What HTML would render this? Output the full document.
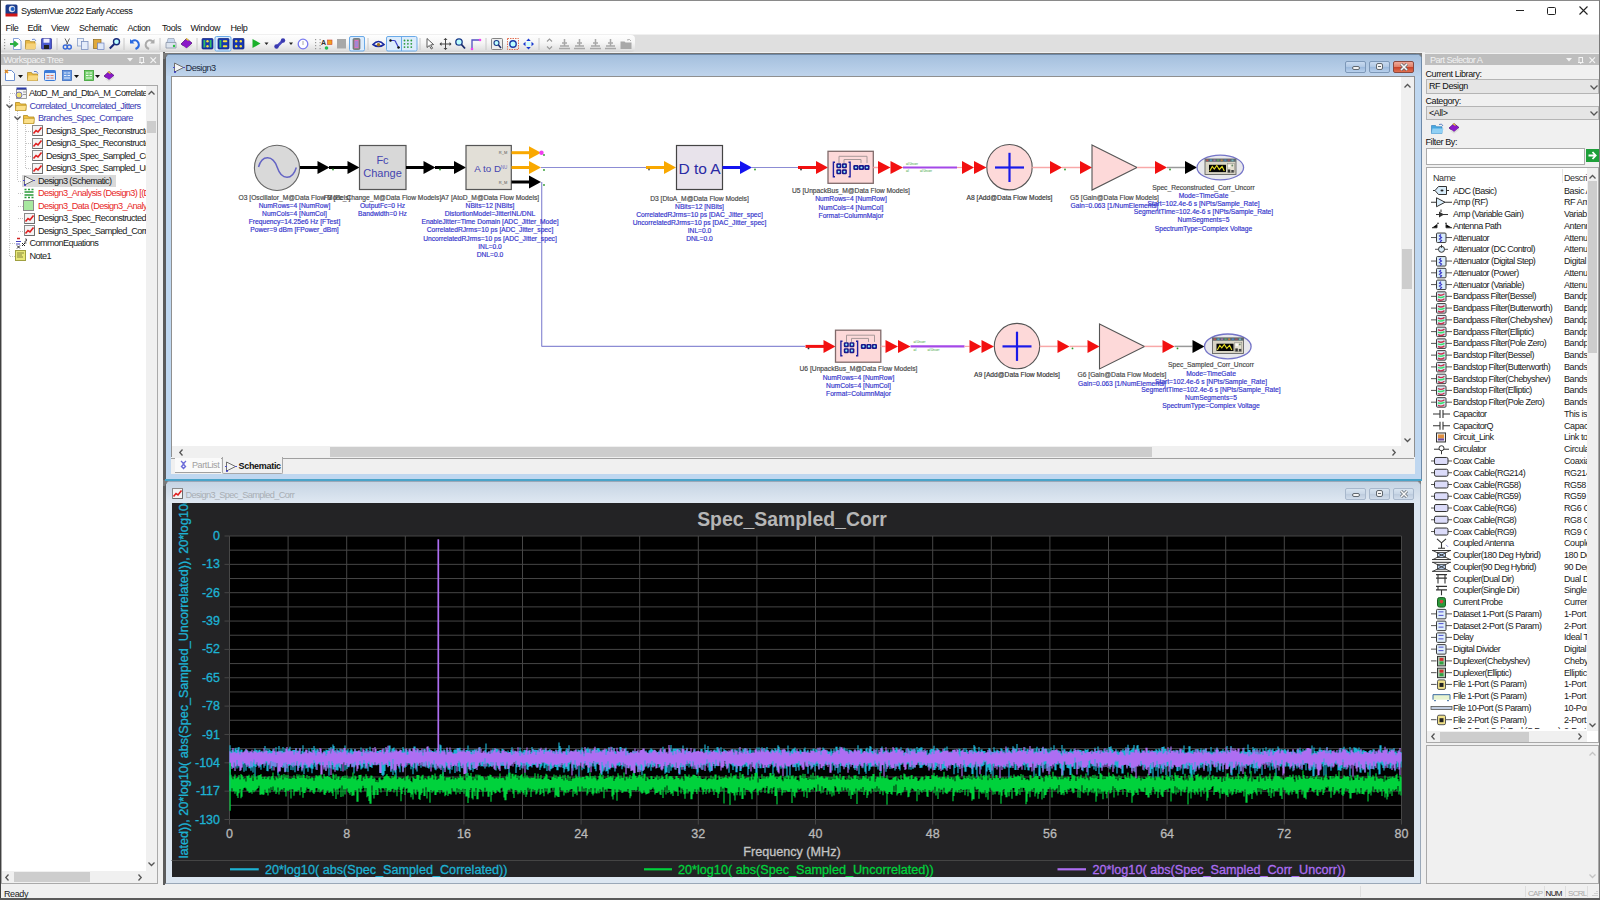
<!DOCTYPE html><html><head><meta charset="utf-8"><title>SystemVue 2022 Early Access</title><style>
*{margin:0;padding:0;box-sizing:border-box}
html,body{width:1600px;height:900px;overflow:hidden;background:#f0f0f0;font-family:"Liberation Sans",sans-serif;font-size:9px;letter-spacing:-0.4px;color:#000}
.a{position:absolute}
.t{position:absolute;white-space:nowrap;line-height:12px}
svg{position:absolute;overflow:visible}
</style></head><body>
<div class="a" style="left:0px;top:0px;width:1600px;height:21px;background:#fff"></div>
<div class="a" style="left:0px;top:21px;width:1600px;height:13px;background:#fff"></div>
<div class="a" style="left:0px;top:34.5px;width:1600px;height:18.5px;background:#dfdfdf"></div>
<svg style="left:5px;top:4px" width="13" height="13" viewBox="0 0 13 13">
<rect x="0.5" y="0.5" width="12" height="10" rx="1.5" fill="#1a3a8a"/>
<rect x="0.5" y="9.5" width="12" height="3" fill="#d01818"/>
<circle cx="7" cy="5" r="3.2" fill="#fff" opacity=".85"/><circle cx="7.6" cy="5" r="2" fill="#2060c0"/>
</svg>
<div class="t" style="left:21px;top:4.5px;font-size:9.2px;letter-spacing:-0.5px;color:#111">SystemVue 2022 Early Access</div>
<div class="a" style="left:1516px;top:10px;width:8px;height:1.2px;background:#222"></div>
<div class="a" style="left:1547px;top:6.5px;width:8.5px;height:8px;border:1.2px solid #222;border-radius:1.5px"></div>
<svg style="left:1579px;top:6px" width="9" height="9"><path d="M.5 .5L8.5 8.5M8.5 .5L.5 8.5" stroke="#222" stroke-width="1.1"/></svg>
<div class="t" style="left:5.5px;top:22px;color:#111">File</div>
<div class="t" style="left:27.5px;top:22px;color:#111">Edit</div>
<div class="t" style="left:51px;top:22px;color:#111">View</div>
<div class="t" style="left:79px;top:22px;color:#111">Schematic</div>
<div class="t" style="left:127.5px;top:22px;color:#111">Action</div>
<div class="t" style="left:162px;top:22px;color:#111">Tools</div>
<div class="t" style="left:190.5px;top:22px;color:#111">Window</div>
<div class="t" style="left:230.5px;top:22px;color:#111">Help</div>
<div class="a" style="left:0px;top:0px;width:1600px;height:1px;background:#8a8a8a"></div>
<div class="a" style="left:0px;top:0px;width:1px;height:900px;background:#404040"></div>
<div class="a" style="left:1599px;top:0px;width:1px;height:900px;background:#7a7a7a"></div>
<div class="a" style="left:0px;top:898px;width:1600px;height:2px;background:#5a5a5a"></div>
<div class="a" style="left:1px;top:35px;width:634px;height:17px;background:linear-gradient(#fefefe,#f6f6f6 45%,#e2e2e2 85%,#d2d2d2);border-radius:0 4px 4px 0"></div>
<svg style="left:0;top:0" width="1600" height="60"><rect x="4" y="39" width="1.2" height="1.2" fill="#9a9a9a"/><rect x="4" y="42" width="1.2" height="1.2" fill="#9a9a9a"/><rect x="4" y="45" width="1.2" height="1.2" fill="#9a9a9a"/><rect x="4" y="48" width="1.2" height="1.2" fill="#9a9a9a"/><path d="M13.5 38.5h5l2.5 2.5v8.5h-7.5z" fill="#fff" stroke="#6a8ad0" stroke-width=".8"/><path d="M10 44h6M14 41.5l3 2.5-3 2.5" stroke="#2ab040" stroke-width="2.2" fill="none"/><path d="M25.5 40.5h4l1 1.2h4.5v7.3h-9.5z" fill="#e8b848" stroke="#a8801c" stroke-width=".7"/><path d="M26.5 43.5h10l-1.5 5.5h-9.5z" fill="#f6d27a"/><path d="M32 39.5q3-1.5 4 1.5" stroke="#5a7ad0" fill="none" stroke-width=".9"/><rect x="41.5" y="38.5" width="10" height="10.5" rx=".8" fill="#4a5ad0" stroke="#2a2a90" stroke-width=".7"/><rect x="43.5" y="38.7" width="6" height="4" fill="#eef"/><rect x="44" y="45" width="5" height="4" fill="#222"/><path d="M57 38V50" stroke="#c8c8c8" stroke-width="1"/><path d="M65 38.5l3 6M69.5 38.5l-3 6" stroke="#666" stroke-width="1"/><circle cx="65.3" cy="47" r="2" fill="none" stroke="#3a6ad8" stroke-width="1.4"/><circle cx="69.3" cy="47" r="2" fill="none" stroke="#3a6ad8" stroke-width="1.4"/><rect x="77.5" y="38.5" width="6" height="7.5" fill="#eef2fa" stroke="#8aa0c8" stroke-width=".8"/><rect x="81.5" y="41.5" width="6.5" height="8" fill="#e4ecfa" stroke="#7a90c0" stroke-width=".8"/><rect x="93.5" y="39.5" width="7.5" height="9" fill="#e0a838" stroke="#8a6820" stroke-width=".7"/><rect x="97.5" y="43" width="6.5" height="6.5" fill="#dfe8f8" stroke="#6a80c0" stroke-width=".7"/><circle cx="116.5" cy="41.8" r="3" fill="#bff" stroke="#1a2a7a" stroke-width="1.4"/><path d="M114.3 44l-4.5 4.5" stroke="#1a2a7a" stroke-width="2"/><path d="M124 38V50" stroke="#c8c8c8" stroke-width="1"/><path d="M131.5 41.5q5-3 7 1.5q1.5 4-3 6" stroke="#2a6ae0" stroke-width="2" fill="none"/><path d="M130 39v4.5h4.5z" fill="#2a6ae0"/><path d="M153 41.5q-5-3-7 1.5q-1.5 4 3 6" stroke="#aaa" stroke-width="2" fill="none"/><path d="M154.5 39v4.5h-4.5z" fill="#aaa"/><path d="M160 38V50" stroke="#c8c8c8" stroke-width="1"/><path d="M166 42.5h10v5.5h-10z" fill="#dde4ee" stroke="#8a96a8" stroke-width=".8"/><path d="M168 38.5h6l1 4h-8z" fill="#c8d8f0" stroke="#8a96a8" stroke-width=".6"/><circle cx="174" cy="46" r="1.2" fill="#2ac040"/><path d="M181 44L186.5 38.5L192 43L186.5 48.5z" fill="#8a18c8" stroke="#4a0a70" stroke-width=".7"/><path d="M183 46.5L186.5 49.3L192 45" stroke="#ddd" stroke-width="1.6" fill="none"/><path d="M186 38.5l2.5 2" stroke="#e8d030" stroke-width="1.3"/><path d="M197 38V50" stroke="#c8c8c8" stroke-width="1"/><rect x="215" y="36.5" width="16" height="14.5" rx="1.5" fill="#dcecfc" stroke="#6aaae8" stroke-width="1"/><rect x="202" y="38.5" width="11" height="10.5" rx="1" fill="#1838b0" stroke="#10207a" stroke-width=".7"/><rect x="203.5" y="40" width="1.8" height="7.5" fill="#30c060"/><rect x="209.7" y="40" width="1.8" height="7.5" fill="#30c060"/><circle cx="207.5" cy="41.3" r="1.2" fill="#f8e040"/><circle cx="207.5" cy="46.2" r="1.2" fill="#f8e040"/><rect x="218" y="38.5" width="11" height="10.5" rx="1" fill="#1838b0" stroke="#10207a" stroke-width=".7"/><rect x="219.5" y="40" width="1.8" height="7.5" fill="#30c060"/><rect x="222.8" y="40.3" width="4.5" height="2" rx="1" fill="#f8e040"/><rect x="222.8" y="45.2" width="4.5" height="2" rx="1" fill="#f8e040"/><rect x="233" y="38.5" width="11" height="10.5" rx="1" fill="#1838b0" stroke="#10207a" stroke-width=".7"/><circle cx="236.2" cy="41.3" r="1.2" fill="#f8e040"/><circle cx="240.8" cy="41.3" r="1.2" fill="#f8e040"/><circle cx="236.2" cy="46.2" r="1.2" fill="#f8e040"/><circle cx="240.8" cy="46.2" r="1.2" fill="#f8e040"/><path d="M252.5 39v9l8-4.5z" fill="#1ab02a"/><path d="M264.5 42.5h4l-2 2.5z" fill="#222"/><path d="M276 47.5l7-7" stroke="#4848c0" stroke-width="2.5"/><circle cx="276.5" cy="46.5" r="2.2" fill="#3a3ab0"/><circle cx="283" cy="40.5" r="2.2" fill="#3a3ab0"/><path d="M289 42.5h4l-2 2.5z" fill="#222"/><circle cx="303" cy="44" r="4.8" fill="#fff" stroke="#7a7af0" stroke-width="1.3"/><path d="M303 41v4" stroke="#aaa" stroke-width="1"/><rect x="315" y="39" width="1.2" height="1.2" fill="#9a9a9a"/><rect x="315" y="42" width="1.2" height="1.2" fill="#9a9a9a"/><rect x="315" y="45" width="1.2" height="1.2" fill="#9a9a9a"/><rect x="315" y="48" width="1.2" height="1.2" fill="#9a9a9a"/><rect x="319.5" y="39" width="1.2" height="1.2" fill="#9a9a9a"/><rect x="319.5" y="42" width="1.2" height="1.2" fill="#9a9a9a"/><rect x="319.5" y="45" width="1.2" height="1.2" fill="#9a9a9a"/><rect x="319.5" y="48" width="1.2" height="1.2" fill="#9a9a9a"/><text x="321" y="44.5" font-size="7" font-weight="bold" fill="#333" font-family="Liberation Sans">A</text><rect x="327.5" y="40" width="4.5" height="4.5" fill="#f0a020" stroke="#d04030" stroke-width=".6"/><circle cx="326.5" cy="48" r="1.8" fill="#20c050"/><rect x="337" y="39" width="9" height="9.5" fill="#a8a8a8"/><rect x="349.5" y="36.5" width="15.0" height="14.5" rx="1.5" fill="#dcecfc" stroke="#6aaae8" stroke-width="1"/><rect x="353" y="38.5" width="7" height="11" rx="1.2" fill="#888" stroke="#555" stroke-width=".6"/><rect x="354.5" y="40" width="4" height="8" fill="#e070c0"/><rect x="355" y="41" width="3" height="6" fill="#8a90e0" opacity=".7"/><path d="M368 38V50" stroke="#c8c8c8" stroke-width="1"/><path d="M373 44.5q5.5-6 11 0q-5.5 4-11 0z" fill="#fff" stroke="#1a2aa0" stroke-width="1.6"/><circle cx="378.5" cy="44.8" r="1.8" fill="#a07020"/><rect x="386.5" y="36.5" width="30.5" height="14.5" rx="1.5" fill="#dcecfc" stroke="#6aaae8" stroke-width="1"/><path d="M401.5 37v14" stroke="#6aaae8"/><path d="M390.5 40.5h3.5q1.5 0 2 2l1.5 3q.5 2 2 2h.5" stroke="#3a40c8" stroke-width="1.2" fill="none"/><circle cx="390.5" cy="40.5" r="1.2" fill="#111"/><circle cx="398.5" cy="47.5" r="1.2" fill="#111"/><circle cx="404.5" cy="40.5" r=".9" fill="#2a9a3a"/><circle cx="404.5" cy="43.8" r=".9" fill="#2a9a3a"/><circle cx="404.5" cy="47.1" r=".9" fill="#2a9a3a"/><circle cx="407.9" cy="40.5" r=".9" fill="#2a9a3a"/><circle cx="407.9" cy="43.8" r=".9" fill="#2a9a3a"/><circle cx="407.9" cy="47.1" r=".9" fill="#2a9a3a"/><circle cx="411.3" cy="40.5" r=".9" fill="#2a9a3a"/><circle cx="411.3" cy="43.8" r=".9" fill="#2a9a3a"/><circle cx="411.3" cy="47.1" r=".9" fill="#2a9a3a"/><path d="M420 38V50" stroke="#c8c8c8" stroke-width="1"/><path d="M427 38.5v9l2.3-2 2 3.5 1.3-.8-2-3.3 3-.3z" fill="#fff" stroke="#333" stroke-width=".8"/><path d="M445.5 38.5v11M440 44h11" stroke="#444" stroke-width="1"/><path d="M445.5 38l-2 2h4zM445.5 50l-2-2h4zM439.5 44l2-2v4zM451.5 44l-2-2v4z" fill="#444"/><circle cx="459" cy="42" r="3.2" fill="#bff" stroke="#1a3a8a" stroke-width="1.3"/><path d="M461.5 44.5l3.5 4" stroke="#1a2a6a" stroke-width="1.8"/><path d="M472 49v-9h8" stroke="#5050c0" stroke-width="1.3" fill="none"/><circle cx="480" cy="40" r="1.3" fill="#f040f0"/><circle cx="472" cy="49" r="1.3" fill="#f040f0"/><path d="M486 38V50" stroke="#c8c8c8" stroke-width="1"/><rect x="491.5" y="38.5" width="11" height="11" rx="1" fill="#eee" stroke="#777" stroke-width=".9"/><circle cx="496.5" cy="43" r="2.5" fill="#bff" stroke="#1a3a8a" stroke-width="1.1"/><path d="M498.5 45l2.5 3" stroke="#1a2a6a" stroke-width="1.5"/><rect x="507.5" y="38.5" width="11" height="11" fill="none" stroke="#e06040" stroke-width=".9" stroke-dasharray="1.5 1"/><circle cx="513" cy="44" r="3.2" fill="#bff" stroke="#1a3aa8" stroke-width="1.4"/><path d="M528.5 38.5l2.3 2.5h-4.6zM528.5 49.5l2.3-2.5h-4.6zM523 44l2.5 2.3v-4.6zM534 44l-2.5 2.3v-4.6z" fill="#1a3ad0"/><circle cx="528.5" cy="44" r="2.2" fill="#cff"/><path d="M539 38V50" stroke="#c8c8c8" stroke-width="1"/><path d="M547 41.5l2.5-2.5 2.5 2.5M547 46.5l2.5 2.5 2.5-2.5" stroke="#999" stroke-width="1.1" fill="none"/><path d="M559 48.5h11M560 46h9M562 43h5M564.5 39v7" stroke="#a8a8a8" stroke-width="1.5"/><path d="M574 48.5h11M575 46h9M577 43h5M579.5 39v7" stroke="#a8a8a8" stroke-width="1.5"/><path d="M590 48.5h11M591 46h9M593 43h5M595.5 39v7" stroke="#a8a8a8" stroke-width="1.5"/><path d="M605 48.5h11M606 46h9M608 43h5M610.5 39v7" stroke="#a8a8a8" stroke-width="1.5"/><path d="M620.5 41.5h4l1 1h6v6.5h-11z" fill="#a8a8a8"/><path d="M627 40q3-1.5 4 1" stroke="#aaa" fill="none"/></svg>
<div class="a" style="left:1px;top:53.5px;width:159px;height:11.8px;background:#bebebe"></div>
<div class="t" style="left:3.5px;top:53.5px;color:#f2f2f2;font-size:9.2px;letter-spacing:-0.5px">Workspace Tree</div>
<svg style="left:127px;top:56.5px" width="30" height="7" viewBox="0 0 30 7"><path d="M0 1h6l-3 3.5z" fill="#f4f4f4"/><rect x="13" y=".5" width="3.5" height="5" fill="none" stroke="#f4f4f4" stroke-width="1"/><path d="M12 5.5h5.5M14.7 5.5v1.5" stroke="#f4f4f4"/><path d="M23.5 .3l5.5 5.5M29 .3l-5.5 5.5" stroke="#f4f4f4" stroke-width="1.2"/></svg>
<div class="a" style="left:1px;top:65.3px;width:159px;height:20px;background:#f0f0f0"></div>
<svg style="left:5px;top:70px" width="10" height="11" viewBox="0 0 10 11"><path d="M.5 .5h6l3 3v7H.5z" fill="#fff" stroke="#6a8fd0"/><path d="M0 0l3 3M3 0L0 3" stroke="#e08a20" stroke-width="1.5"/></svg>
<svg style="left:18px;top:75px" width="6" height="4" viewBox="0 0 6 4"><path d="M0 0h5l-2.5 3z" fill="#111"/></svg>
<svg style="left:27px;top:70px" width="12" height="11" viewBox="0 0 12 11"><path d="M.5 2.5h4l1 1.5h5v6.5H.5z" fill="#e8b840" stroke="#a8801c" stroke-width=".7"/><path d="M1.5 5.5h10l-1.5 5H.5z" fill="#f8d880"/><path d="M7 1.5q3-1 4 2" stroke="#6080d0" fill="none"/></svg>
<svg style="left:43.5px;top:70px" width="12" height="11" viewBox="0 0 12 11"><rect x=".5" y=".5" width="11" height="10" rx="1" fill="#dfe9f8" stroke="#3a7ad8" stroke-width="1"/><rect x=".5" y=".5" width="11" height="2.5" fill="#3a7ad8"/><path d="M2.5 5.5h3M6.5 5.5h3M2.5 8h3M6.5 8h3" stroke="#e07a60" stroke-width="1.2"/></svg>
<svg style="left:62px;top:70px" width="10" height="11" viewBox="0 0 10 11"><rect x=".5" y=".5" width="9" height="10" fill="#6a9ae0" stroke="#3a6ac0" stroke-width=".8"/><path d="M2 3h2.5M5.5 3H8M2 5.5h2.5M5.5 5.5H8M2 8h6" stroke="#e6f0ff" stroke-width="1"/></svg>
<svg style="left:73.5px;top:75px" width="6" height="4" viewBox="0 0 6 4"><path d="M0 0h5l-2.5 3z" fill="#111"/></svg>
<svg style="left:83.5px;top:70px" width="10" height="11" viewBox="0 0 10 11"><rect x=".5" y=".5" width="9" height="10" fill="#78d070" stroke="#38a030" stroke-width=".8"/><path d="M2 3h2.5M5.5 3H8M2 5.5h2.5M5.5 5.5H8M2 8h6" stroke="#f0fff0" stroke-width="1"/></svg>
<svg style="left:94.5px;top:75px" width="6" height="4" viewBox="0 0 6 4"><path d="M0 0h5l-2.5 3z" fill="#111"/></svg>
<svg style="left:103px;top:69.5px" width="12" height="12" viewBox="0 0 12 12"><path d="M1 6L6 1.5L11 5.5L6 10z" fill="#8a18c8" stroke="#4a0a70" stroke-width=".7"/><path d="M3 8.5L6 10.8L11 6.8" stroke="#ddd" stroke-width="1.6" fill="none"/><path d="M5 1.5l2.5 2" stroke="#e8d030" stroke-width="1.3"/></svg>
<div class="a" style="left:1px;top:85.3px;width:157px;height:798.5px;background:#fff;border:1px solid #a9a9a9"></div>
<div class="a" style="left:9px;top:96px;width:1px;height:160px;border-left:1px dotted #c4c4c4"></div>
<div class="a" style="left:17px;top:110px;width:1px;height:70px;border-left:1px dotted #c4c4c4"></div>
<div class="a" style="left:25px;top:122px;width:1px;height:46px;border-left:1px dotted #c4c4c4"></div>
<div class="a" style="left:26px;top:130.5px;width:5px;height:1px;border-top:1px dotted #c4c4c4"></div>
<div class="a" style="left:26px;top:143px;width:5px;height:1px;border-top:1px dotted #c4c4c4"></div>
<div class="a" style="left:26px;top:155.5px;width:5px;height:1px;border-top:1px dotted #c4c4c4"></div>
<div class="a" style="left:26px;top:168px;width:5px;height:1px;border-top:1px dotted #c4c4c4"></div>
<div class="a" style="left:18px;top:180.5px;width:5px;height:1px;border-top:1px dotted #c4c4c4"></div>
<div class="a" style="left:18px;top:193px;width:5px;height:1px;border-top:1px dotted #c4c4c4"></div>
<div class="a" style="left:18px;top:205.5px;width:5px;height:1px;border-top:1px dotted #c4c4c4"></div>
<div class="a" style="left:18px;top:218px;width:5px;height:1px;border-top:1px dotted #c4c4c4"></div>
<div class="a" style="left:18px;top:230.5px;width:5px;height:1px;border-top:1px dotted #c4c4c4"></div>
<div class="a" style="left:10px;top:243px;width:5px;height:1px;border-top:1px dotted #c4c4c4"></div>
<div class="a" style="left:10px;top:255.5px;width:5px;height:1px;border-top:1px dotted #c4c4c4"></div>
<div class="a" style="left:10px;top:93px;width:5px;height:1px;border-top:1px dotted #c4c4c4"></div>
<div class="a" style="left:22px;top:175px;width:94px;height:11.5px;background:#d9d9d9"></div>
<div class="a" style="left:2px;top:86px;width:144px;height:785px;overflow:hidden">
<div class="t" style="left:27px;top:1px;color:#1a1a1a;font-size:9.2px;letter-spacing:-0.62px">AtoD_M_and_DtoA_M_Correlated</div>
<div class="t" style="left:27.5px;top:13.5px;color:#3c3cb4;font-size:9.2px;letter-spacing:-0.62px">Correlated_Uncorrelated_Jitters</div>
<div class="t" style="left:36px;top:26px;color:#3c3cb4;font-size:9.2px;letter-spacing:-0.62px">Branches_Spec_Compare</div>
<div class="t" style="left:44px;top:38.5px;color:#1a1a1a;font-size:9.2px;letter-spacing:-0.62px">Design3_Spec_Reconstructed_Corr</div>
<div class="t" style="left:44px;top:51px;color:#1a1a1a;font-size:9.2px;letter-spacing:-0.62px">Design3_Spec_Reconstructed_Unc</div>
<div class="t" style="left:44px;top:63.5px;color:#1a1a1a;font-size:9.2px;letter-spacing:-0.62px">Design3_Spec_Sampled_Corr</div>
<div class="t" style="left:44px;top:76px;color:#1a1a1a;font-size:9.2px;letter-spacing:-0.62px">Design3_Spec_Sampled_Uncorr</div>
<div class="t" style="left:36px;top:88.5px;color:#1a1a1a;font-size:9.2px;letter-spacing:-0.62px">Design3 (Schematic)</div>
<div class="t" style="left:36px;top:101px;color:#e82828;font-size:9.2px;letter-spacing:-0.62px">Design3_Analysis (Design3) [(Design3)]</div>
<div class="t" style="left:36px;top:113.5px;color:#e82828;font-size:9.2px;letter-spacing:-0.62px">Design3_Data (Design3_Analysis)</div>
<div class="t" style="left:36px;top:126px;color:#1a1a1a;font-size:9.2px;letter-spacing:-0.62px">Design3_Spec_Reconstructed</div>
<div class="t" style="left:36px;top:138.5px;color:#1a1a1a;font-size:9.2px;letter-spacing:-0.62px">Design3_Spec_Sampled_Corr</div>
<div class="t" style="left:27.5px;top:151px;color:#1a1a1a;font-size:9.2px;letter-spacing:-0.62px">CommonEquations</div>
<div class="t" style="left:27.5px;top:163.5px;color:#1a1a1a;font-size:9.2px;letter-spacing:-0.62px">Note1</div>
</div>
<svg style="left:15px;top:86.5px" width="12" height="12" viewBox="0 0 12 12"><rect x="1.5" y="2.5" width="10" height="9" fill="#f4f4f4" stroke="#888" stroke-width=".8"/><rect x="1.5" y=".5" width="10" height="2" fill="#2a3aa8"/><circle cx="4" cy="8" r="3" fill="#f0e070" stroke="#5a5ac0" stroke-width=".8"/><path d="M8 5h3M8 7.5h3" stroke="#999"/></svg>
<svg style="left:15px;top:100.0px" width="12" height="11" viewBox="0 0 12 11"><path d="M.5 2.5h4l1 1.5h5.5v6.5H.5z" fill="#f0c040" stroke="#b08820" stroke-width=".8"/><path d="M1 5.5h10.5l-1 5H.5z" fill="#fbe08a" stroke="#c09a30" stroke-width=".6"/></svg>
<svg style="left:23px;top:112.5px" width="12" height="11" viewBox="0 0 12 11"><path d="M.5 2.5h4l1 1.5h5.5v6.5H.5z" fill="#f0c040" stroke="#b08820" stroke-width=".8"/><path d="M1 5.5h10.5l-1 5H.5z" fill="#fbe08a" stroke="#c09a30" stroke-width=".6"/></svg>
<svg style="left:32px;top:125.0px" width="11" height="11" viewBox="0 0 11 11"><rect x=".5" y=".5" width="10" height="10" fill="#f4f4f4" stroke="#8a8a8a"/><path d="M1.5 8.5L4 5.5L6 7L9.5 2.5" stroke="#e02020" stroke-width="1.6" fill="none"/><path d="M1 10.5H10.5V1.5" stroke="#666" stroke-width=".8" fill="none"/></svg>
<svg style="left:32px;top:137.5px" width="11" height="11" viewBox="0 0 11 11"><rect x=".5" y=".5" width="10" height="10" fill="#f4f4f4" stroke="#8a8a8a"/><path d="M1.5 8.5L4 5.5L6 7L9.5 2.5" stroke="#e02020" stroke-width="1.6" fill="none"/><path d="M1 10.5H10.5V1.5" stroke="#666" stroke-width=".8" fill="none"/></svg>
<svg style="left:32px;top:150.0px" width="11" height="11" viewBox="0 0 11 11"><rect x=".5" y=".5" width="10" height="10" fill="#f4f4f4" stroke="#8a8a8a"/><path d="M1.5 8.5L4 5.5L6 7L9.5 2.5" stroke="#e02020" stroke-width="1.6" fill="none"/><path d="M1 10.5H10.5V1.5" stroke="#666" stroke-width=".8" fill="none"/></svg>
<svg style="left:32px;top:162.5px" width="11" height="11" viewBox="0 0 11 11"><rect x=".5" y=".5" width="10" height="10" fill="#f4f4f4" stroke="#8a8a8a"/><path d="M1.5 8.5L4 5.5L6 7L9.5 2.5" stroke="#e02020" stroke-width="1.6" fill="none"/><path d="M1 10.5H10.5V1.5" stroke="#666" stroke-width=".8" fill="none"/></svg>
<svg style="left:23px;top:175.0px" width="12" height="11" viewBox="0 0 12 11"><path d="M1.5 1L10.5 5.5L1.5 10z" fill="#f4f4f4" stroke="#707070" stroke-width="1"/><path d="M0 5.5h2M10 5.5h2" stroke="#5050c0"/><circle cx="2" cy="10" r="1" fill="#3030c0"/></svg>
<svg style="left:24px;top:187.5px" width="10" height="11" viewBox="0 0 10 11"><path d="M.5 1.5h2M4 1.5h2M7.5 1.5h2M.5 4h9M.5 7h9M.5 9.5h2M4 9.5h2M7.5 9.5h2" stroke="#2a9a3a" stroke-width="1.6"/></svg>
<svg style="left:23px;top:200.0px" width="11" height="11" viewBox="0 0 11 11"><rect x=".5" y=".5" width="10" height="10" fill="#a8e8a0" stroke="#8a8a8a"/></svg>
<svg style="left:24px;top:212.5px" width="11" height="11" viewBox="0 0 11 11"><rect x=".5" y=".5" width="10" height="10" fill="#f4f4f4" stroke="#8a8a8a"/><path d="M1.5 8.5L4 5.5L6 7L9.5 2.5" stroke="#e02020" stroke-width="1.6" fill="none"/><path d="M1 10.5H10.5V1.5" stroke="#666" stroke-width=".8" fill="none"/></svg>
<svg style="left:24px;top:225.0px" width="11" height="11" viewBox="0 0 11 11"><rect x=".5" y=".5" width="10" height="10" fill="#f4f4f4" stroke="#8a8a8a"/><path d="M1.5 8.5L4 5.5L6 7L9.5 2.5" stroke="#e02020" stroke-width="1.6" fill="none"/><path d="M1 10.5H10.5V1.5" stroke="#666" stroke-width=".8" fill="none"/></svg>
<svg style="left:15px;top:236.5px" width="12" height="12" viewBox="0 0 12 12"><path d="M2 1.5h3" stroke="#d02020" stroke-width="1.5"/><path d="M1 4.5h5M1 7h4" stroke="#4040c0" stroke-width="1.2"/><path d="M2 8.5l3 3M5 8.5l-3 3" stroke="#222" stroke-width="1"/><path d="M7 6l3 3M10 6l-3 3" stroke="#222"/><path d="M10 2h1.5v2h-1.5v2h1.5" stroke="#222" stroke-width=".7" fill="none"/></svg>
<svg style="left:15px;top:250.0px" width="11" height="11" viewBox="0 0 11 11"><rect x=".5" y=".5" width="10" height="10" fill="#e8e878" stroke="#a0a040"/><path d="M2 3h7M2 5h5M2 7h6" stroke="#707030" stroke-width=".8"/></svg>
<svg style="left:6px;top:103.5px" width="7" height="4.5" viewBox="0 0 7 4.5"><path d="M.5 .5L3.5 3.5L6.5 .5" stroke="#555" stroke-width="1.3" fill="none"/></svg>
<svg style="left:14px;top:116px" width="7" height="4.5" viewBox="0 0 7 4.5"><path d="M.5 .5L3.5 3.5L6.5 .5" stroke="#555" stroke-width="1.3" fill="none"/></svg>
<div class="a" style="left:146px;top:86px;width:11px;height:785px;background:#f0f0f0"></div>
<svg style="left:148px;top:91px" width="7" height="4.5" viewBox="0 0 7 4.5"><path d="M.5 3.5L3.5 .5L6.5 3.5" stroke="#555" stroke-width="1.3" fill="none"/></svg>
<div class="a" style="left:147px;top:121px;width:9px;height:11.5px;background:#cdcdcd"></div>
<svg style="left:148px;top:862px" width="7" height="4.5" viewBox="0 0 7 4.5"><path d="M.5 .5L3.5 3.5L6.5 .5" stroke="#555" stroke-width="1.3" fill="none"/></svg>
<div class="a" style="left:2px;top:871px;width:155px;height:11.5px;background:#f0f0f0"></div>
<svg style="left:5px;top:873.5px" width="4.5" height="7" viewBox="0 0 4.5 7"><path d="M3.5 .5L.8 3.5L3.5 6.5" stroke="#555" stroke-width="1.3" fill="none"/></svg>
<div class="a" style="left:13.5px;top:872px;width:76px;height:9.5px;background:#cdcdcd"></div>
<svg style="left:137.5px;top:873.5px" width="4.5" height="7" viewBox="0 0 4.5 7"><path d="M.5 .5L3.2 3.5L.5 6.5" stroke="#555" stroke-width="1.3" fill="none"/></svg>
<div class="a" style="left:1425px;top:53.5px;width:174px;height:11.8px;background:#bebebe"></div>
<div class="t" style="left:1430px;top:53.5px;color:#f2f2f2;font-size:9.2px;letter-spacing:-0.6px">Part Selector A</div>
<svg style="left:1566px;top:56.5px" width="30" height="7" viewBox="0 0 30 7"><path d="M0 1h6l-3 3.5z" fill="#f4f4f4"/><rect x="13" y=".5" width="3.5" height="5" fill="none" stroke="#f4f4f4" stroke-width="1"/><path d="M12 5.5h5.5M14.7 5.5v1.5" stroke="#f4f4f4"/><path d="M23.5 .3l5.5 5.5M29 .3l-5.5 5.5" stroke="#f4f4f4" stroke-width="1.2"/></svg>
<div class="t" style="left:1425.5px;top:68px;color:#111">Current Library:</div>
<div class="a" style="left:1426px;top:79px;width:173px;height:14.5px;background:#e5e5e5;border:1px solid #b4b4b4"></div>
<div class="t" style="left:1429px;top:80.3px;color:#111">RF Design</div>
<svg style="left:1590px;top:84.5px" width="8" height="5" viewBox="0 0 8 5"><path d="M.5 .5L4.0 4L7.5 .5" stroke="#555" stroke-width="1.3" fill="none"/></svg>
<div class="t" style="left:1425.5px;top:94.5px;color:#111">Category:</div>
<div class="a" style="left:1426px;top:105.5px;width:173px;height:14.5px;background:#e5e5e5;border:1px solid #b4b4b4"></div>
<div class="t" style="left:1429px;top:107px;color:#111">&lt;All&gt;</div>
<svg style="left:1590px;top:111px" width="8" height="5" viewBox="0 0 8 5"><path d="M.5 .5L4.0 4L7.5 .5" stroke="#555" stroke-width="1.3" fill="none"/></svg>
<svg style="left:1431px;top:122px" width="13" height="12" viewBox="0 0 13 12"><path d="M.5 3.5h4l1 1.2h5.5v6.8H.5z" fill="#48a8e0" stroke="#2a78b8" stroke-width=".6"/><path d="M1.5 6.5h11l-1.5 5H.5z" fill="#90d0f4"/><path d="M8 2.5q3-1.5 4 1.5" stroke="#5078c0" fill="none" stroke-width=".9"/></svg>
<svg style="left:1448px;top:122px" width="12" height="12" viewBox="0 0 12 12"><path d="M1 6L6 1.5L11 5.5L6 10z" fill="#8a18c8" stroke="#4a0a70" stroke-width=".7"/><path d="M3 8.5L6 10.8L11 6.8" stroke="#ddd" stroke-width="1.6" fill="none"/><path d="M5 1.5l2.5 2" stroke="#e8d030" stroke-width="1.3"/></svg>
<div class="t" style="left:1425.5px;top:136px;color:#111">Filter By:</div>
<div class="a" style="left:1426px;top:148px;width:159px;height:17px;background:#fff;border:1px solid #ababab"></div>
<svg style="left:1586px;top:149px" width="13" height="13" viewBox="0 0 13 13"><rect width="13" height="13" fill="#1ea03a"/><path d="M2.5 6.5h7M6.5 3l3.2 3.5L6.5 10" stroke="#fff" stroke-width="1.8" fill="none"/></svg>
<div class="a" style="left:1426px;top:167px;width:173px;height:576px;background:#fff;border:1px solid #a9a9a9"></div>
<div class="t" style="left:1433px;top:171.5px;color:#333">Name</div>
<div class="a" style="left:1561.5px;top:169px;width:1px;height:14px;background:#e4e4e4"></div>
<div class="t" style="left:1564px;top:171.5px;color:#333">Descri</div>
<div class="a" style="left:1427px;top:184px;width:160px;height:545px;overflow:hidden">
<div class="t" style="left:26px;top:0.50px;color:#1a1a1a;letter-spacing:-0.55px">ADC (Basic)</div>
<div class="t" style="left:26px;top:12.26px;color:#1a1a1a;letter-spacing:-0.55px">Amp (RF)</div>
<div class="t" style="left:26px;top:24.02px;color:#1a1a1a;letter-spacing:-0.55px">Amp (Variable Gain)</div>
<div class="t" style="left:26px;top:35.78px;color:#1a1a1a;letter-spacing:-0.55px">Antenna Path</div>
<div class="t" style="left:26px;top:47.54px;color:#1a1a1a;letter-spacing:-0.55px">Attenuator</div>
<div class="t" style="left:26px;top:59.30px;color:#1a1a1a;letter-spacing:-0.55px">Attenuator (DC Control)</div>
<div class="t" style="left:26px;top:71.06px;color:#1a1a1a;letter-spacing:-0.55px">Attenuator (Digital Step)</div>
<div class="t" style="left:26px;top:82.82px;color:#1a1a1a;letter-spacing:-0.55px">Attenuator (Power)</div>
<div class="t" style="left:26px;top:94.58px;color:#1a1a1a;letter-spacing:-0.55px">Attenuator (Variable)</div>
<div class="t" style="left:26px;top:106.34px;color:#1a1a1a;letter-spacing:-0.55px">Bandpass Filter(Bessel)</div>
<div class="t" style="left:26px;top:118.10px;color:#1a1a1a;letter-spacing:-0.55px">Bandpass Filter(Butterworth)</div>
<div class="t" style="left:26px;top:129.86px;color:#1a1a1a;letter-spacing:-0.55px">Bandpass Filter(Chebyshev)</div>
<div class="t" style="left:26px;top:141.62px;color:#1a1a1a;letter-spacing:-0.55px">Bandpass Filter(Elliptic)</div>
<div class="t" style="left:26px;top:153.38px;color:#1a1a1a;letter-spacing:-0.55px">Bandpass Filter(Pole Zero)</div>
<div class="t" style="left:26px;top:165.14px;color:#1a1a1a;letter-spacing:-0.55px">Bandstop Filter(Bessel)</div>
<div class="t" style="left:26px;top:176.90px;color:#1a1a1a;letter-spacing:-0.55px">Bandstop Filter(Butterworth)</div>
<div class="t" style="left:26px;top:188.66px;color:#1a1a1a;letter-spacing:-0.55px">Bandstop Filter(Chebyshev)</div>
<div class="t" style="left:26px;top:200.42px;color:#1a1a1a;letter-spacing:-0.55px">Bandstop Filter(Elliptic)</div>
<div class="t" style="left:26px;top:212.18px;color:#1a1a1a;letter-spacing:-0.55px">Bandstop Filter(Pole Zero)</div>
<div class="t" style="left:26px;top:223.94px;color:#1a1a1a;letter-spacing:-0.55px">Capacitor</div>
<div class="t" style="left:26px;top:235.70px;color:#1a1a1a;letter-spacing:-0.55px">CapacitorQ</div>
<div class="t" style="left:26px;top:247.46px;color:#1a1a1a;letter-spacing:-0.55px">Circuit_Link</div>
<div class="t" style="left:26px;top:259.22px;color:#1a1a1a;letter-spacing:-0.55px">Circulator</div>
<div class="t" style="left:26px;top:270.98px;color:#1a1a1a;letter-spacing:-0.55px">Coax Cable</div>
<div class="t" style="left:26px;top:282.74px;color:#1a1a1a;letter-spacing:-0.55px">Coax Cable(RG214)</div>
<div class="t" style="left:26px;top:294.50px;color:#1a1a1a;letter-spacing:-0.55px">Coax Cable(RG58)</div>
<div class="t" style="left:26px;top:306.26px;color:#1a1a1a;letter-spacing:-0.55px">Coax Cable(RG59)</div>
<div class="t" style="left:26px;top:318.02px;color:#1a1a1a;letter-spacing:-0.55px">Coax Cable(RG6)</div>
<div class="t" style="left:26px;top:329.78px;color:#1a1a1a;letter-spacing:-0.55px">Coax Cable(RG8)</div>
<div class="t" style="left:26px;top:341.54px;color:#1a1a1a;letter-spacing:-0.55px">Coax Cable(RG9)</div>
<div class="t" style="left:26px;top:353.30px;color:#1a1a1a;letter-spacing:-0.55px">Coupled Antenna</div>
<div class="t" style="left:26px;top:365.06px;color:#1a1a1a;letter-spacing:-0.55px">Coupler(180 Deg Hybrid)</div>
<div class="t" style="left:26px;top:376.82px;color:#1a1a1a;letter-spacing:-0.55px">Coupler(90 Deg Hybrid)</div>
<div class="t" style="left:26px;top:388.58px;color:#1a1a1a;letter-spacing:-0.55px">Coupler(Dual Dir)</div>
<div class="t" style="left:26px;top:400.34px;color:#1a1a1a;letter-spacing:-0.55px">Coupler(Single Dir)</div>
<div class="t" style="left:26px;top:412.10px;color:#1a1a1a;letter-spacing:-0.55px">Current Probe</div>
<div class="t" style="left:26px;top:423.86px;color:#1a1a1a;letter-spacing:-0.55px">Dataset 1-Port (S Param)</div>
<div class="t" style="left:26px;top:435.62px;color:#1a1a1a;letter-spacing:-0.55px">Dataset 2-Port (S Param)</div>
<div class="t" style="left:26px;top:447.38px;color:#1a1a1a;letter-spacing:-0.55px">Delay</div>
<div class="t" style="left:26px;top:459.14px;color:#1a1a1a;letter-spacing:-0.55px">Digital Divider</div>
<div class="t" style="left:26px;top:470.90px;color:#1a1a1a;letter-spacing:-0.55px">Duplexer(Chebyshev)</div>
<div class="t" style="left:26px;top:482.66px;color:#1a1a1a;letter-spacing:-0.55px">Duplexer(Elliptic)</div>
<div class="t" style="left:26px;top:494.42px;color:#1a1a1a;letter-spacing:-0.55px">File 1-Port (S Param)</div>
<div class="t" style="left:26px;top:506.18px;color:#1a1a1a;letter-spacing:-0.55px">File 1-Port (S Param)</div>
<div class="t" style="left:26px;top:517.94px;color:#1a1a1a;letter-spacing:-0.55px">File 10-Port (S Param)</div>
<div class="t" style="left:26px;top:529.70px;color:#1a1a1a;letter-spacing:-0.55px">File 2-Port (S Param)</div>
<div class="t" style="left:26px;top:541.46px;color:#1a1a1a;letter-spacing:-0.55px">File 2-Port Split Gnd (S Param)</div>
</div>
<div class="a" style="left:1563px;top:184px;width:24px;height:545px;overflow:hidden">
<div class="t" style="left:1px;top:0.50px;color:#1a1a1a">Basic ADC</div>
<div class="t" style="left:1px;top:12.26px;color:#1a1a1a">RF Amp</div>
<div class="t" style="left:1px;top:24.02px;color:#1a1a1a">Variable</div>
<div class="t" style="left:1px;top:35.78px;color:#1a1a1a">Antenna</div>
<div class="t" style="left:1px;top:47.54px;color:#1a1a1a">Attenuator</div>
<div class="t" style="left:1px;top:59.30px;color:#1a1a1a">Attenuator</div>
<div class="t" style="left:1px;top:71.06px;color:#1a1a1a">Digital</div>
<div class="t" style="left:1px;top:82.82px;color:#1a1a1a">Attenuator</div>
<div class="t" style="left:1px;top:94.58px;color:#1a1a1a">Attenuator</div>
<div class="t" style="left:1px;top:106.34px;color:#1a1a1a">Bandpass</div>
<div class="t" style="left:1px;top:118.10px;color:#1a1a1a">Bandpass</div>
<div class="t" style="left:1px;top:129.86px;color:#1a1a1a">Bandpass</div>
<div class="t" style="left:1px;top:141.62px;color:#1a1a1a">Bandpass</div>
<div class="t" style="left:1px;top:153.38px;color:#1a1a1a">Bandpass</div>
<div class="t" style="left:1px;top:165.14px;color:#1a1a1a">Bandstop</div>
<div class="t" style="left:1px;top:176.90px;color:#1a1a1a">Bandstop</div>
<div class="t" style="left:1px;top:188.66px;color:#1a1a1a">Bandstop</div>
<div class="t" style="left:1px;top:200.42px;color:#1a1a1a">Bandstop</div>
<div class="t" style="left:1px;top:212.18px;color:#1a1a1a">Bandstop</div>
<div class="t" style="left:1px;top:223.94px;color:#1a1a1a">This is</div>
<div class="t" style="left:1px;top:235.70px;color:#1a1a1a">Capacitor</div>
<div class="t" style="left:1px;top:247.46px;color:#1a1a1a">Link to</div>
<div class="t" style="left:1px;top:259.22px;color:#1a1a1a">Circulator</div>
<div class="t" style="left:1px;top:270.98px;color:#1a1a1a">Coaxial</div>
<div class="t" style="left:1px;top:282.74px;color:#1a1a1a">RG214 C</div>
<div class="t" style="left:1px;top:294.50px;color:#1a1a1a">RG58 C</div>
<div class="t" style="left:1px;top:306.26px;color:#1a1a1a">RG59 C</div>
<div class="t" style="left:1px;top:318.02px;color:#1a1a1a">RG6 C</div>
<div class="t" style="left:1px;top:329.78px;color:#1a1a1a">RG8 C</div>
<div class="t" style="left:1px;top:341.54px;color:#1a1a1a">RG9 C</div>
<div class="t" style="left:1px;top:353.30px;color:#1a1a1a">Coupled</div>
<div class="t" style="left:1px;top:365.06px;color:#1a1a1a">180 Deg</div>
<div class="t" style="left:1px;top:376.82px;color:#1a1a1a">90 Deg</div>
<div class="t" style="left:1px;top:388.58px;color:#1a1a1a">Dual Dir</div>
<div class="t" style="left:1px;top:400.34px;color:#1a1a1a">Single</div>
<div class="t" style="left:1px;top:412.10px;color:#1a1a1a">Current</div>
<div class="t" style="left:1px;top:423.86px;color:#1a1a1a">1-Port</div>
<div class="t" style="left:1px;top:435.62px;color:#1a1a1a">2-Port</div>
<div class="t" style="left:1px;top:447.38px;color:#1a1a1a">Ideal T</div>
<div class="t" style="left:1px;top:459.14px;color:#1a1a1a">Digital</div>
<div class="t" style="left:1px;top:470.90px;color:#1a1a1a">Cheby</div>
<div class="t" style="left:1px;top:482.66px;color:#1a1a1a">Elliptic</div>
<div class="t" style="left:1px;top:494.42px;color:#1a1a1a">1-Port</div>
<div class="t" style="left:1px;top:506.18px;color:#1a1a1a">1-Port</div>
<div class="t" style="left:1px;top:517.94px;color:#1a1a1a">10-Port</div>
<div class="t" style="left:1px;top:529.70px;color:#1a1a1a">2-Port</div>
<div class="t" style="left:1px;top:541.46px;color:#1a1a1a">2-Port</div>
</div>
<svg style="left:0;top:0" width="1600" height="900"><g transform="translate(1431,185.00)"><path d="M2 5.5h2M16 5.5h2" stroke="#333"/><path d="M4 5.5L7.5 1.5H15.5V9.5H7.5z" fill="#d8ecfa" stroke="#333" stroke-width="1"/><ellipse cx="11" cy="5.5" rx="1.5" ry="1" fill="#222"/></g><g transform="translate(1431,196.76)"><path d="M0 5.5h5.5M13 5.5h8" stroke="#333"/><path d="M5.5 1L14 5.5L5.5 10z" fill="#d8ecfa" stroke="#333" stroke-width="1"/></g><g transform="translate(1431,208.52)"><path d="M5 6h12" stroke="#333"/><path d="M8 3l5 3-5 3z" fill="#333"/><path d="M10 1v2.5" stroke="#333"/></g><g transform="translate(1431,220.28)"><path d="M1 7.5h5V4M6 3h2M14 3h2M15 4v3.5h6" stroke="#333" stroke-width="1"/></g><g transform="translate(1431,232.04)"><path d="M0 5.5h5.5M15 5.5h6" stroke="#555" stroke-width="1"/><rect x="5.5" y="1" width="9.5" height="9.5" rx="1" fill="#d8ecfa" stroke="#3a3a3a" stroke-width="1"/><path d="M10 2.5l-1.5 1.5 2 1.5-2 1.5 2 1.5-1.5 1.5" stroke="#3a3ac8" stroke-width="1.2" fill="none"/></g><g transform="translate(1431,243.80)"><path d="M4 5.5h13" stroke="#555"/><circle cx="10.5" cy="5.5" r="3" fill="#d8ecfa" stroke="#333"/><path d="M10.5 1v3" stroke="#333"/></g><g transform="translate(1431,255.56)"><path d="M0 5.5h5.5M15 5.5h6" stroke="#555" stroke-width="1"/><rect x="5.5" y="1" width="9.5" height="9.5" rx="1" fill="#d8ecfa" stroke="#3a3a3a" stroke-width="1"/><path d="M10 2.5l-1.5 1.5 2 1.5-2 1.5 2 1.5-1.5 1.5" stroke="#3a3ac8" stroke-width="1.2" fill="none"/></g><g transform="translate(1431,267.32)"><path d="M0 5.5h5.5M15 5.5h6" stroke="#555" stroke-width="1"/><rect x="5.5" y="1" width="9.5" height="9.5" rx="1" fill="#d8ecfa" stroke="#3a3a3a" stroke-width="1"/><path d="M10 2.5l-1.5 1.5 2 1.5-2 1.5 2 1.5-1.5 1.5" stroke="#3a3ac8" stroke-width="1.2" fill="none"/></g><g transform="translate(1431,279.08)"><path d="M0 5.5h5.5M15 5.5h6" stroke="#555" stroke-width="1"/><rect x="5.5" y="1" width="9.5" height="9.5" rx="1" fill="#d8ecfa" stroke="#3a3a3a" stroke-width="1"/><path d="M10 2.5l-1.5 1.5 2 1.5-2 1.5 2 1.5-1.5 1.5" stroke="#3a3ac8" stroke-width="1.2" fill="none"/></g><g transform="translate(1431,290.84)"><path d="M0 5.5h5.5M15 5.5h6" stroke="#555" stroke-width="1"/><rect x="5.5" y="1" width="9.5" height="9.5" rx="1" fill="#d8ecf4" stroke="#3a3a3a" stroke-width="1"/><path d="M7 3.5q3 2 6.5-.5M7 8.5q3 2 6.5-.5" stroke="#c83050" stroke-width="1.3" fill="none"/><path d="M7 6q3 1.5 6.5-.5" stroke="#38e070" stroke-width="1.6" fill="none"/></g><g transform="translate(1431,302.60)"><path d="M0 5.5h5.5M15 5.5h6" stroke="#555" stroke-width="1"/><rect x="5.5" y="1" width="9.5" height="9.5" rx="1" fill="#d8ecf4" stroke="#3a3a3a" stroke-width="1"/><path d="M7 3.5q3 2 6.5-.5M7 8.5q3 2 6.5-.5" stroke="#c83050" stroke-width="1.3" fill="none"/><path d="M7 6q3 1.5 6.5-.5" stroke="#38e070" stroke-width="1.6" fill="none"/></g><g transform="translate(1431,314.36)"><path d="M0 5.5h5.5M15 5.5h6" stroke="#555" stroke-width="1"/><rect x="5.5" y="1" width="9.5" height="9.5" rx="1" fill="#d8ecf4" stroke="#3a3a3a" stroke-width="1"/><path d="M7 3.5q3 2 6.5-.5M7 8.5q3 2 6.5-.5" stroke="#c83050" stroke-width="1.3" fill="none"/><path d="M7 6q3 1.5 6.5-.5" stroke="#38e070" stroke-width="1.6" fill="none"/></g><g transform="translate(1431,326.12)"><path d="M0 5.5h5.5M15 5.5h6" stroke="#555" stroke-width="1"/><rect x="5.5" y="1" width="9.5" height="9.5" rx="1" fill="#d8ecf4" stroke="#3a3a3a" stroke-width="1"/><path d="M7 3.5q3 2 6.5-.5M7 8.5q3 2 6.5-.5" stroke="#c83050" stroke-width="1.3" fill="none"/><path d="M7 6q3 1.5 6.5-.5" stroke="#38e070" stroke-width="1.6" fill="none"/></g><g transform="translate(1431,337.88)"><path d="M0 5.5h5.5M15 5.5h6" stroke="#555" stroke-width="1"/><rect x="5.5" y="1" width="9.5" height="9.5" rx="1" fill="#d8ecf4" stroke="#3a3a3a" stroke-width="1"/><path d="M7 3.5q3 2 6.5-.5M7 8.5q3 2 6.5-.5" stroke="#c83050" stroke-width="1.3" fill="none"/><path d="M7 6q3 1.5 6.5-.5" stroke="#38e070" stroke-width="1.6" fill="none"/></g><g transform="translate(1431,349.64)"><path d="M0 5.5h5.5M15 5.5h6" stroke="#555" stroke-width="1"/><rect x="5.5" y="1" width="9.5" height="9.5" rx="1" fill="#d8ecf4" stroke="#3a3a3a" stroke-width="1"/><path d="M7 3.5q3 2 6.5-.5M7 8.5q3 2 6.5-.5" stroke="#c83050" stroke-width="1.3" fill="none"/><path d="M7 6q3 1.5 6.5-.5" stroke="#38e070" stroke-width="1.6" fill="none"/></g><g transform="translate(1431,361.40)"><path d="M0 5.5h5.5M15 5.5h6" stroke="#555" stroke-width="1"/><rect x="5.5" y="1" width="9.5" height="9.5" rx="1" fill="#d8ecf4" stroke="#3a3a3a" stroke-width="1"/><path d="M7 3.5q3 2 6.5-.5M7 8.5q3 2 6.5-.5" stroke="#c83050" stroke-width="1.3" fill="none"/><path d="M7 6q3 1.5 6.5-.5" stroke="#38e070" stroke-width="1.6" fill="none"/></g><g transform="translate(1431,373.16)"><path d="M0 5.5h5.5M15 5.5h6" stroke="#555" stroke-width="1"/><rect x="5.5" y="1" width="9.5" height="9.5" rx="1" fill="#d8ecf4" stroke="#3a3a3a" stroke-width="1"/><path d="M7 3.5q3 2 6.5-.5M7 8.5q3 2 6.5-.5" stroke="#c83050" stroke-width="1.3" fill="none"/><path d="M7 6q3 1.5 6.5-.5" stroke="#38e070" stroke-width="1.6" fill="none"/></g><g transform="translate(1431,384.92)"><path d="M0 5.5h5.5M15 5.5h6" stroke="#555" stroke-width="1"/><rect x="5.5" y="1" width="9.5" height="9.5" rx="1" fill="#d8ecf4" stroke="#3a3a3a" stroke-width="1"/><path d="M7 3.5q3 2 6.5-.5M7 8.5q3 2 6.5-.5" stroke="#c83050" stroke-width="1.3" fill="none"/><path d="M7 6q3 1.5 6.5-.5" stroke="#38e070" stroke-width="1.6" fill="none"/></g><g transform="translate(1431,396.68)"><path d="M0 5.5h5.5M15 5.5h6" stroke="#555" stroke-width="1"/><rect x="5.5" y="1" width="9.5" height="9.5" rx="1" fill="#d8ecf4" stroke="#3a3a3a" stroke-width="1"/><path d="M7 3.5q3 2 6.5-.5M7 8.5q3 2 6.5-.5" stroke="#c83050" stroke-width="1.3" fill="none"/><path d="M7 6q3 1.5 6.5-.5" stroke="#38e070" stroke-width="1.6" fill="none"/></g><g transform="translate(1431,408.44)"><path d="M2 5.5h7M12 5.5h7M9 1.5v8M12 1.5v8" stroke="#333" stroke-width="1.1"/></g><g transform="translate(1431,420.20)"><path d="M2 5.5h7M12 5.5h7M9 1.5v8M12 1.5v8" stroke="#333" stroke-width="1.1"/></g><g transform="translate(1431,431.96)"><rect x="5.5" y="1" width="9" height="9" fill="#eee" stroke="#333"/><rect x="7" y="2.5" width="6" height="4" fill="#e09040"/><rect x="7" y="6.5" width="6" height="2" fill="#6a4aa0"/></g><g transform="translate(1431,443.72)"><path d="M3 5.5h15M10.5 5.5v5" stroke="#333"/><circle cx="10.5" cy="4.5" r="2.5" fill="#fff" stroke="#333"/></g><g transform="translate(1431,455.48)"><path d="M0 5.5h3.5M17 5.5h4" stroke="#555"/><rect x="3.5" y="2" width="13.5" height="7" rx="1.5" fill="#dcdcfa" stroke="#333" stroke-width="1"/></g><g transform="translate(1431,467.24)"><path d="M0 5.5h3.5M17 5.5h4" stroke="#555"/><rect x="3.5" y="2" width="13.5" height="7" rx="1.5" fill="#dcdcfa" stroke="#333" stroke-width="1"/></g><g transform="translate(1431,479.00)"><path d="M0 5.5h3.5M17 5.5h4" stroke="#555"/><rect x="3.5" y="2" width="13.5" height="7" rx="1.5" fill="#dcdcfa" stroke="#333" stroke-width="1"/></g><g transform="translate(1431,490.76)"><path d="M0 5.5h3.5M17 5.5h4" stroke="#555"/><rect x="3.5" y="2" width="13.5" height="7" rx="1.5" fill="#dcdcfa" stroke="#333" stroke-width="1"/></g><g transform="translate(1431,502.52)"><path d="M0 5.5h3.5M17 5.5h4" stroke="#555"/><rect x="3.5" y="2" width="13.5" height="7" rx="1.5" fill="#dcdcfa" stroke="#333" stroke-width="1"/></g><g transform="translate(1431,514.28)"><path d="M0 5.5h3.5M17 5.5h4" stroke="#555"/><rect x="3.5" y="2" width="13.5" height="7" rx="1.5" fill="#dcdcfa" stroke="#333" stroke-width="1"/></g><g transform="translate(1431,526.04)"><path d="M0 5.5h3.5M17 5.5h4" stroke="#555"/><rect x="3.5" y="2" width="13.5" height="7" rx="1.5" fill="#dcdcfa" stroke="#333" stroke-width="1"/></g><g transform="translate(1431,537.80)"><path d="M6 1l4.5 4 4.5-4M10.5 5v5.5M7 10.5h7" stroke="#333" stroke-width="1.1" fill="none"/><path d="M15 7l2 2" stroke="#9090e0"/></g><g transform="translate(1431,549.56)"><path d="M1 1h19M1 10h19" stroke="#333"/><rect x="6.5" y="3" width="8" height="5" fill="#b8d0f0" stroke="#333" stroke-width=".8"/><path d="M2 1l17 9M19 1L2 10" stroke="#333" stroke-width=".9"/></g><g transform="translate(1431,561.32)"><path d="M1 1h19M1 10h19" stroke="#333"/><rect x="6.5" y="3" width="8" height="5" fill="#b8d0f0" stroke="#333" stroke-width=".8"/><path d="M2 1l17 9M19 1L2 10" stroke="#333" stroke-width=".9"/></g><g transform="translate(1431,573.08)"><path d="M5 1.5h11M5 5h11M7 1.5v9M14 1.5v9" stroke="#333" stroke-width="1.1"/></g><g transform="translate(1431,584.84)"><path d="M5 1.5h11M5 5h11M10.5 5v5.5M7 1.5v4" stroke="#333" stroke-width="1.1"/></g><g transform="translate(1431,596.60)"><rect x="6.5" y="1" width="8" height="9.5" rx="2" fill="#2a9a3a" stroke="#1a5a20"/><circle cx="10.5" cy="5" r="1.8" fill="#e04040"/></g><g transform="translate(1431,608.36)"><path d="M0 5.5h5.5M15 5.5h6" stroke="#555" stroke-width="1"/><rect x="5.5" y="1" width="9.5" height="9.5" rx="1" fill="#dfeefa" stroke="#3a3a3a" stroke-width="1"/><path d="M7.5 3.5h5M7.5 7h5" stroke="#3a3ac8" stroke-width=".9"/></g><g transform="translate(1431,620.12)"><path d="M0 5.5h5.5M15 5.5h6" stroke="#555" stroke-width="1"/><rect x="5.5" y="1" width="9.5" height="9.5" rx="1" fill="#dfeefa" stroke="#3a3a3a" stroke-width="1"/><path d="M7.5 3.5h5M7.5 7h5" stroke="#3a3ac8" stroke-width=".9"/></g><g transform="translate(1431,631.88)"><path d="M0 5.5h5.5M15 5.5h6" stroke="#555" stroke-width="1"/><rect x="5.5" y="1" width="9.5" height="9.5" rx="1" fill="#dfeefa" stroke="#3a3a3a" stroke-width="1"/><path d="M7.5 3.5h5M7.5 7h5" stroke="#3a3ac8" stroke-width=".9"/></g><g transform="translate(1431,643.64)"><path d="M0 5.5h5.5M15 5.5h6" stroke="#555" stroke-width="1"/><rect x="5.5" y="1" width="9.5" height="9.5" rx="1" fill="#dfeefa" stroke="#3a3a3a" stroke-width="1"/><path d="M7.5 3.5h5M7.5 7h5" stroke="#3a3ac8" stroke-width=".9"/></g><g transform="translate(1431,655.40)"><path d="M0 5.5h5.5M15 5.5h6" stroke="#555" stroke-width="1"/><rect x="6.5" y="1" width="8" height="9.5" fill="#b0c8b0" stroke="#333"/><rect x="8.5" y="2.5" width="4" height="3" fill="#d03030"/><rect x="8.5" y="6" width="4" height="3" fill="#30a040"/></g><g transform="translate(1431,667.16)"><path d="M0 5.5h5.5M15 5.5h6" stroke="#555" stroke-width="1"/><rect x="6.5" y="1" width="8" height="9.5" fill="#b0c8b0" stroke="#333"/><rect x="8.5" y="2.5" width="4" height="3" fill="#d03030"/><rect x="8.5" y="6" width="4" height="3" fill="#30a040"/></g><g transform="translate(1431,678.92)"><path d="M0 5.5h5.5M15 5.5h6" stroke="#555" stroke-width="1"/><rect x="6.5" y="1" width="8" height="9.5" rx="1.5" fill="#f0e088" stroke="#555"/><rect x="8.5" y="4" width="4" height="4" fill="#222"/></g><g transform="translate(1431,690.68)"><path d="M2 9v-5h17v5" stroke="#3a6aa0" fill="#e8f4d0" stroke-width="1"/><path d="M3 10h2M16 10h2" stroke="#3a6aa0"/></g><g transform="translate(1431,702.44)"><rect x="0" y="4" width="21" height="3" fill="#c0cce0" stroke="#555" stroke-width=".8"/></g><g transform="translate(1431,714.20)"><path d="M0 5.5h5.5M15 5.5h6" stroke="#555" stroke-width="1"/><rect x="6.5" y="1" width="8" height="9.5" rx="1.5" fill="#f0e088" stroke="#555"/><rect x="8.5" y="4" width="4" height="4" fill="#222"/></g></svg>
<div class="a" style="left:1587px;top:168px;width:11px;height:563px;background:#f0f0f0"></div>
<svg style="left:1589px;top:175px" width="7" height="4.5" viewBox="0 0 7 4.5"><path d="M.5 3.5L3.5 .5L6.5 3.5" stroke="#555" stroke-width="1.3" fill="none"/></svg>
<div class="a" style="left:1588px;top:181px;width:9px;height:172px;background:#cdcdcd"></div>
<svg style="left:1589px;top:722.5px" width="7" height="4.5" viewBox="0 0 7 4.5"><path d="M.5 .5L3.5 3.5L6.5 .5" stroke="#555" stroke-width="1.3" fill="none"/></svg>
<div class="a" style="left:1427px;top:731px;width:160px;height:11px;background:#f0f0f0"></div>
<svg style="left:1431px;top:733px" width="4.5" height="7" viewBox="0 0 4.5 7"><path d="M3.5 .5L.8 3.5L3.5 6.5" stroke="#555" stroke-width="1.3" fill="none"/></svg>
<div class="a" style="left:1440px;top:732px;width:89px;height:9.5px;background:#cdcdcd"></div>
<svg style="left:1578px;top:733px" width="4.5" height="7" viewBox="0 0 4.5 7"><path d="M.5 .5L3.2 3.5L.5 6.5" stroke="#555" stroke-width="1.3" fill="none"/></svg>
<div class="a" style="left:1426px;top:745px;width:173px;height:139px;background:#f0f0f0;border:1px solid #a9a9a9"></div>
<svg style="left:1589px;top:752px" width="7" height="4.5" viewBox="0 0 7 4.5"><path d="M.5 3.5L3.5 .5L6.5 3.5" stroke="#c4c4c4" stroke-width="1.3" fill="none"/></svg>
<svg style="left:1589px;top:874px" width="7" height="4.5" viewBox="0 0 7 4.5"><path d="M.5 .5L3.5 3.5L6.5 .5" stroke="#c4c4c4" stroke-width="1.3" fill="none"/></svg>
<div class="a" style="left:1px;top:884.5px;width:1598px;height:13.5px;background:#f0f0f0"></div>
<div class="t" style="left:4px;top:887.5px;color:#222">Ready</div>
<div class="t" style="left:1528px;top:888px;color:#a8a8a8;font-size:8px;letter-spacing:-0.7px">CAP</div>
<div class="t" style="left:1545.5px;top:888px;color:#111;font-size:8px;letter-spacing:-0.6px">NUM</div>
<div class="t" style="left:1568px;top:888px;color:#a8a8a8;font-size:8px;letter-spacing:-0.7px">SCRL</div>
<div class="a" style="left:1360px;top:886px;width:1px;height:11px;background:#dedede"></div>
<div class="a" style="left:1525px;top:886px;width:1px;height:11px;background:#dedede"></div>
<div class="a" style="left:1543.5px;top:886px;width:1px;height:11px;background:#dedede"></div>
<div class="a" style="left:1565px;top:886px;width:1px;height:11px;background:#dedede"></div>
<div class="a" style="left:1587px;top:886px;width:1px;height:11px;background:#dedede"></div>
<svg style="left:1590px;top:889px" width="8" height="8" viewBox="0 0 8 8"><path d="M7 2v1M5 4v1M7 4v1M3 6v1M5 6v1M7 6v1" stroke="#b0b0b0" stroke-width="1"/></svg>
<div class="a" style="left:160px;top:52px;width:1265px;height:833px;background:#f0f0f0"></div>
<div class="a" style="left:163px;top:52.5px;width:1259px;height:2px;background:#747474"></div>
<div class="a" style="left:163.3px;top:52px;width:1.5px;height:833px;background:#5c5c5c"></div>
<div class="a" style="left:163.3px;top:52.5px;width:6px;height:6px;background:#7a7a7a"></div>
<div class="a" style="left:1416px;top:52.5px;width:6px;height:6px;background:#7a7a7a"></div>
<div class="a" style="left:163.3px;top:480px;width:6px;height:6px;background:#7a7a7a"></div>
<div class="a" style="left:1415px;top:480px;width:6px;height:6px;background:#7a7a7a"></div>
<div class="a" style="left:164.5px;top:54px;width:1257px;height:426px;background:#bfd7f0;border-radius:5px 5px 0 0;border:1px solid #6f8aa8;border-left-color:#5c5c5c"></div>
<div class="a" style="left:165.5px;top:55px;width:1255px;height:21px;background:linear-gradient(#a4bfdd,#bfd4ec);border-radius:4px 4px 0 0"></div>
<svg style="left:173px;top:62px" width="12" height="11" viewBox="0 0 12 11"><path d="M1.5 1L10.5 5.5L1.5 10z" fill="#f4f4f4" stroke="#707070" stroke-width="1"/><path d="M0 5.5h2M10 5.5h2" stroke="#5050c0"/><circle cx="2" cy="10" r="1" fill="#3030c0"/></svg>
<div class="t" style="left:185.5px;top:61.5px;color:#1a2a40;font-size:9.2px;letter-spacing:-0.5px">Design3</div>
<div class="a" style="left:1345px;top:60.6px;width:21px;height:12.2px;background:linear-gradient(#c8daf0,#b0c8e4 50%,#9ab8dc 51%,#b8d0ec);border:1px solid #7d98b8;border-radius:2px"></div>
<div class="a" style="left:1369px;top:60.6px;width:21px;height:12.2px;background:linear-gradient(#c8daf0,#b0c8e4 50%,#9ab8dc 51%,#b8d0ec);border:1px solid #7d98b8;border-radius:2px"></div>
<div class="a" style="left:1393px;top:60.6px;width:21px;height:12.2px;background:linear-gradient(#f0a898,#e08068 50%,#c84028 51%,#e07050);border:1px solid #8a4a40;border-radius:2px"></div>
<div class="a" style="left:1351.5px;top:65.8px;width:8.5px;height:4px;background:#f4f4f4;border:1px solid #606870;border-radius:2px"></div>
<div class="a" style="left:1375.5px;top:63.1px;width:7.5px;height:6.5px;border:1px solid #606870;background:#f4f4f4;border-radius:2px"></div>
<div class="a" style="left:1377.5px;top:65.6px;width:3.5px;height:1.2px;background:#606870"></div>
<svg style="left:1399.5px;top:62.800000000000004px" width="8" height="8" viewBox="0 0 8 8"><path d="M1 1l6 6M7 1L1 7" stroke="#606870" stroke-width="3"/><path d="M1 1l6 6M7 1L1 7" stroke="#f8f8f8" stroke-width="1.6"/></svg>
<div class="a" style="left:170.5px;top:75.5px;width:1244px;height:382px;background:#fff;border:1px solid #8f8f8f"></div>
<div class="a" style="left:1401px;top:76.5px;width:12.5px;height:370px;background:#f0f0f0"></div>
<svg style="left:1403.5px;top:84px" width="7" height="4.5" viewBox="0 0 7 4.5"><path d="M.5 3.5L3.5 .5L6.5 3.5" stroke="#555" stroke-width="1.3" fill="none"/></svg>
<div class="a" style="left:1402px;top:249px;width:10px;height:39.5px;background:#cdcdcd"></div>
<svg style="left:1403.5px;top:437.5px" width="7" height="4.5" viewBox="0 0 7 4.5"><path d="M.5 .5L3.5 3.5L6.5 .5" stroke="#555" stroke-width="1.3" fill="none"/></svg>
<div class="a" style="left:171.5px;top:446.3px;width:1230px;height:11px;background:#f0f0f0"></div>
<svg style="left:178.5px;top:448.8px" width="4.5" height="7" viewBox="0 0 4.5 7"><path d="M3.5 .5L.8 3.5L3.5 6.5" stroke="#555" stroke-width="1.3" fill="none"/></svg>
<div class="a" style="left:330px;top:447.3px;width:822px;height:9.5px;background:#cdcdcd"></div>
<svg style="left:1391.5px;top:448.8px" width="4.5" height="7" viewBox="0 0 4.5 7"><path d="M.5 .5L3.2 3.5L.5 6.5" stroke="#555" stroke-width="1.3" fill="none"/></svg>
<div class="a" style="left:1401px;top:446.3px;width:12.5px;height:11px;background:#f0f0f0"></div>
<div class="a" style="left:170.5px;top:457px;width:1244px;height:17px;background:#f0f0f0"></div>
<div class="a" style="left:171px;top:457.5px;width:1243px;height:1.2px;background:#a0a0a0"></div>
<div class="a" style="left:175px;top:458px;width:45.5px;height:14.5px;background:#fafafa;border-bottom:1.5px solid #a0a0a0"></div>
<svg style="left:179px;top:460px" width="10" height="11" viewBox="0 0 10 11"><path d="M2 1l3 3-3 3M7 1L4 4l3 3M2 6l3 3M7 6L4 9" stroke="#6a6ad8" stroke-width="1.3" fill="none"/></svg>
<div class="t" style="left:192px;top:459px;color:#a0a0a0;font-size:9px">PartList</div>
<div class="a" style="left:222px;top:457px;width:61px;height:16.5px;background:#f0f0f0;border:1px solid #a8a8a8;border-top:none;border-radius:0 0 2px 2px"></div>
<svg style="left:225px;top:461px" width="12" height="11" viewBox="0 0 12 11"><path d="M1.5 1L10.5 5.5L1.5 10z" fill="#f4f4f4" stroke="#707070" stroke-width="1"/><path d="M0 5.5h2M10 5.5h2" stroke="#5050c0"/><circle cx="2" cy="10" r="1" fill="#3030c0"/></svg>
<div class="t" style="left:238.5px;top:460px;color:#111;font-weight:bold;font-size:9px;letter-spacing:-0.3px">Schematic</div>
<div class="a" style="left:164.5px;top:479px;width:1257px;height:1.5px;background:#4aa3c8"></div>
<div class="a" style="left:171.5px;top:76.5px;width:1229.5px;height:369.8px;overflow:hidden">
<svg style="left:-171.5px;top:-76.5px" width="1600" height="900" viewBox="0 0 1600 900" font-family="Liberation Sans, sans-serif" font-size="6.7" letter-spacing="0"><circle cx="277" cy="167.9" r="22.6" fill="#d9d9d9" stroke="#666" stroke-width="1.1"/><path d="M258.5 167.0C262 154.5 273 154.5 277.3 167.5S292.5 180.5 296.3 167.5" stroke="#6464c4" stroke-width="1.5" fill="none"/><path d="M300 167.5L318.5 167.5" stroke="#000" stroke-width="3"/><path d="M317.5 161.0L329.5 167.5L317.5 174.0z" fill="#000"/><path d="M329 167.5L348.5 167.5" stroke="#000" stroke-width="3"/><path d="M347.5 161.0L359.5 167.5L347.5 174.0z" fill="#000"/><circle cx="333" cy="169.5" r="0.9" fill="#2a9a2a"/><rect x="359.5" y="145.5" width="46.5" height="44" fill="#d8d8d8" stroke="#555" stroke-width="1.2"/><text x="382.5" y="164" fill="#4545b0" text-anchor="middle" style="font-size:11px">Fc</text><text x="382.5" y="176.5" fill="#4545b0" text-anchor="middle" style="font-size:11px">Change</text><path d="M406 167.5L424.5 167.5" stroke="#000" stroke-width="3"/><path d="M423.5 161.0L435.5 167.5L423.5 174.0z" fill="#000"/><path d="M435 167.5L455 167.5" stroke="#000" stroke-width="3"/><path d="M454 161.0L466 167.5L454 174.0z" fill="#000"/><circle cx="440" cy="169.5" r="0.9" fill="#2a9a2a"/><rect x="466" y="145.5" width="45.3" height="44" fill="#e2dfd7" stroke="#555" stroke-width="1.2"/><text x="487.7" y="171.5" fill="#4545b0" text-anchor="middle" style="font-size:9.8px">A to D</text><text x="503" y="154" fill="#555" text-anchor="middle" style="font-size:4px">R_M</text><text x="504" y="169" fill="#6a6ac0" text-anchor="middle" style="font-size:4.5px">NU</text><text x="503" y="183.5" fill="#555" text-anchor="middle" style="font-size:4px">R_M</text><path d="M511.5 152.7L530 152.7" stroke="#f9a800" stroke-width="3"/><path d="M529 146.2L541 152.7L529 159.2z" fill="#f9a800"/><path d="M511.5 167.5L530 167.5" stroke="#f9a800" stroke-width="3"/><path d="M529 161.0L541 167.5L529 174.0z" fill="#f9a800"/><path d="M511.5 182L530 182" stroke="#000" stroke-width="3"/><path d="M529 175.5L541 182L529 188.5z" fill="#000"/><circle cx="541.5" cy="152.7" r="2.2" fill="#f040f0"/><circle cx="544" cy="155" r="0.9" fill="#2a9a2a"/><circle cx="544" cy="170" r="0.9" fill="#2a9a2a"/><circle cx="544" cy="185" r="0.9" fill="#2a9a2a"/><path d="M541 167.5L646 167.5" stroke="#8c8cd4" stroke-width="1.2"/><path d="M541.7 182L541.7 346.4" stroke="#8c8cd4" stroke-width="1.2"/><path d="M541.7 346.4L805 346.4" stroke="#8c8cd4" stroke-width="1.2"/><path d="M646 167.5L665 167.5" stroke="#f9a800" stroke-width="3"/><path d="M664 161.0L676 167.5L664 174.0z" fill="#f9a800"/><circle cx="649" cy="169.5" r="0.9" fill="#555"/><rect x="676.5" y="145.5" width="46" height="44" fill="#e8e3eb" stroke="#444" stroke-width="1.2"/><text x="699.5" y="173.5" fill="#2a2aa4" text-anchor="middle" style="font-size:15.5px">D to A</text><path d="M722.5 167.5L741 167.5" stroke="#1414f0" stroke-width="3"/><path d="M740 161.0L752 167.5L740 174.0z" fill="#1414f0"/><circle cx="755" cy="169.5" r="0.9" fill="#2a9a2a"/><path d="M752 167.5L798 167.5" stroke="#8c8cd4" stroke-width="1.2"/><text x="294.5" y="200.0" fill="#4a4a4a" stroke="#4a4a4a" stroke-width="0.18" text-anchor="middle">O3 [Oscillator_M@Data Flow Models]</text><text x="294.5" y="208.1" fill="#3636cc" stroke="#3636cc" stroke-width="0.18" text-anchor="middle">NumRows=4 [NumRow]</text><text x="294.5" y="216.2" fill="#3636cc" stroke="#3636cc" stroke-width="0.18" text-anchor="middle">NumCols=4 [NumCol]</text><text x="294.5" y="224.3" fill="#3636cc" stroke="#3636cc" stroke-width="0.18" text-anchor="middle">Frequency=14.25e6 Hz [FTest]</text><text x="294.5" y="232.4" fill="#3636cc" stroke="#3636cc" stroke-width="0.18" text-anchor="middle">Power=9 dBm [FPower_dBm]</text><text x="382.5" y="200.0" fill="#4a4a4a" stroke="#4a4a4a" stroke-width="0.18" text-anchor="middle">F3 [Fc_Change_M@Data Flow Models]</text><text x="382.5" y="208.1" fill="#3636cc" stroke="#3636cc" stroke-width="0.18" text-anchor="middle">OutputFc=0 Hz</text><text x="382.5" y="216.2" fill="#3636cc" stroke="#3636cc" stroke-width="0.18" text-anchor="middle">Bandwidth=0 Hz</text><text x="490" y="200.0" fill="#4a4a4a" stroke="#4a4a4a" stroke-width="0.18" text-anchor="middle">A7 [AtoD_M@Data Flow Models]</text><text x="490" y="208.1" fill="#3636cc" stroke="#3636cc" stroke-width="0.18" text-anchor="middle">NBits=12 [NBits]</text><text x="490" y="216.2" fill="#3636cc" stroke="#3636cc" stroke-width="0.18" text-anchor="middle">DistortionModel=JitterINL/DNL</text><text x="490" y="224.3" fill="#3636cc" stroke="#3636cc" stroke-width="0.18" text-anchor="middle">EnableJitter=Time Domain [ADC_Jitter_Mode]</text><text x="490" y="232.4" fill="#3636cc" stroke="#3636cc" stroke-width="0.18" text-anchor="middle">CorrelatedRJrms=10 ps [ADC_Jitter_spec]</text><text x="490" y="240.5" fill="#3636cc" stroke="#3636cc" stroke-width="0.18" text-anchor="middle">UncorrelatedRJrms=10 ps [ADC_Jitter_spec]</text><text x="490" y="248.6" fill="#3636cc" stroke="#3636cc" stroke-width="0.18" text-anchor="middle">INL=0.0</text><text x="490" y="256.7" fill="#3636cc" stroke="#3636cc" stroke-width="0.18" text-anchor="middle">DNL=0.0</text><text x="699.5" y="200.5" fill="#4a4a4a" stroke="#4a4a4a" stroke-width="0.18" text-anchor="middle">D3 [DtoA_M@Data Flow Models]</text><text x="699.5" y="208.6" fill="#3636cc" stroke="#3636cc" stroke-width="0.18" text-anchor="middle">NBits=12 [NBits]</text><text x="699.5" y="216.7" fill="#3636cc" stroke="#3636cc" stroke-width="0.18" text-anchor="middle">CorrelatedRJrms=10 ps [DAC_Jitter_spec]</text><text x="699.5" y="224.8" fill="#3636cc" stroke="#3636cc" stroke-width="0.18" text-anchor="middle">UncorrelatedRJrms=10 ps [DAC_Jitter_spec]</text><text x="699.5" y="232.9" fill="#3636cc" stroke="#3636cc" stroke-width="0.18" text-anchor="middle">INL=0.0</text><text x="699.5" y="241.0" fill="#3636cc" stroke="#3636cc" stroke-width="0.18" text-anchor="middle">DNL=0.0</text><path d="M798 167.5L817 167.5" stroke="#f21010" stroke-width="3"/><path d="M816 161.0L828 167.5L816 174.0z" fill="#f21010"/><circle cx="801" cy="169.5" r="0.9" fill="#333"/><rect x="828" y="151.3" width="45.3" height="32" fill="#fdd9d9" stroke="#806a6a" stroke-width="1.3"/><path d="M839 163.0V156.3H867V163.0M844 163.0V159.5H861V163.0" stroke="#a89898" stroke-width="1" fill="none"/><path d="M835 162.3h-1.6v14.5h1.6M848.5 162.3h1.6v14.5h-1.6" stroke="#2020a0" stroke-width="1.4" fill="none"/><rect x="836.3" y="163.3" width="5" height="5" rx="1.2" fill="#18188a"/><circle cx="838.8" cy="165.8" r="1.1" fill="#9ef"/><rect x="836.3" y="169.3" width="5" height="5" rx="1.2" fill="#18188a"/><circle cx="838.8" cy="171.8" r="1.1" fill="#9ef"/><rect x="841.9" y="163.3" width="5" height="5" rx="1.2" fill="#18188a"/><circle cx="844.4" cy="165.8" r="1.1" fill="#9ef"/><rect x="841.9" y="169.3" width="5" height="5" rx="1.2" fill="#18188a"/><circle cx="844.4" cy="171.8" r="1.1" fill="#9ef"/><rect x="853.3" y="165.0" width="5.2" height="5" rx="1.2" fill="#18188a"/><circle cx="855.9" cy="167.5" r="1.1" fill="#9ef"/><rect x="858.8" y="165.0" width="5.2" height="5" rx="1.2" fill="#18188a"/><circle cx="861.4" cy="167.5" r="1.1" fill="#9ef"/><rect x="864.3" y="165.0" width="5.2" height="5" rx="1.2" fill="#18188a"/><circle cx="866.9" cy="167.5" r="1.1" fill="#9ef"/><path d="M873.3 167.5L878 167.5" stroke="#f8a8a8" stroke-width="1.5"/><path d="M878 161.0L890.5 167.5L878 174.0z" fill="#f21010"/><path d="M890.5 161.0L903 167.5L890.5 174.0z" fill="#f21010"/><path d="M903 167.5L957 167.5" stroke="#a448e8" stroke-width="2.2"/><path d="M957 167.5L962 167.5" stroke="#f8a8a8" stroke-width="1.2"/><text x="906" y="164.5" fill="#2a9a2a" style="font-size:2.8px">ail Uncorr</text><text x="906" y="172.0" fill="#2a9a2a" style="font-size:2.8px">ail</text><text x="920" y="172.0" fill="#2a9a2a" style="font-size:2.8px">ail Uncorr</text><path d="M962 161.0L974 167.5L962 174.0z" fill="#f21010"/><path d="M974 161.0L986.5 167.5L974 174.0z" fill="#f21010"/><circle cx="1009.5" cy="167.2" r="22.7" fill="#fdd9d9" stroke="#555" stroke-width="1.1"/><path d="M995.0 167.5L1024.0 167.5" stroke="#1a1ae8" stroke-width="2.2"/><path d="M1009.5 152.8L1009.5 182.0" stroke="#1a1ae8" stroke-width="2.2"/><path d="M1032.2 167.5L1050 167.5" stroke="#f8a8a8" stroke-width="1.5"/><path d="M1050 161.0L1062 167.5L1050 174.0z" fill="#f21010"/><path d="M1062 167.5L1080 167.5" stroke="#f8a8a8" stroke-width="1.5"/><path d="M1080 161.0L1092 167.5L1080 174.0z" fill="#f21010"/><circle cx="1065" cy="169.5" r="0.9" fill="#2a9a2a"/><path d="M1092 145.0L1137 167.5L1092 190.0z" fill="#fdd9d9" stroke="#555" stroke-width="1.1"/><path d="M1137 167.5L1155 167.5" stroke="#f8a8a8" stroke-width="1.5"/><path d="M1155 161.0L1167 167.5L1155 174.0z" fill="#f21010"/><path d="M1167 167.5L1185 167.5" stroke="#999" stroke-width="1.5"/><path d="M1185 161.0L1197 167.5L1185 174.0z" fill="#000"/><circle cx="1170" cy="169.5" r="0.9" fill="#2a9a2a"/><ellipse cx="1220.3" cy="167.5" rx="23.3" ry="12.4" fill="#e8e8ec" stroke="#7474c8" stroke-width="1.3"/><rect x="1205.0" y="159.0" width="31" height="15.5" fill="#d8d4c4" stroke="#555" stroke-width=".8"/><rect x="1205.3" y="159.0" width="30.5" height="2.8" fill="#5a6a70"/><rect x="1206.3" y="159.5" width="2" height="1.8" fill="#c05050"/><rect x="1209.8999999999999" y="159.5" width="2" height="1.8" fill="#50a0c0"/><rect x="1213.5" y="159.5" width="2" height="1.8" fill="#a070a0"/><rect x="1217.1" y="159.5" width="2" height="1.8" fill="#60a060"/><rect x="1220.7" y="159.5" width="2" height="1.8" fill="#c08040"/><rect x="1224.3" y="159.5" width="2" height="1.8" fill="#5080c0"/><rect x="1227.8999999999999" y="159.5" width="2" height="1.8" fill="#a05060"/><rect x="1231.5" y="159.5" width="2" height="1.8" fill="#70b0b0"/><rect x="1209.0" y="164.8" width="17" height="7.3" fill="#050505"/><path d="M1209.8 171.0L1212.3 166.5L1214.3 169.0L1216.8 165.5L1219.3 169.5L1222.1 166.5L1224.3 171.0" stroke="#e8e020" stroke-width="1.1" fill="none"/><rect x="1227.3" y="163.5" width="7" height="9" fill="#e4e0d0" stroke="#777" stroke-width=".4"/><circle cx="1229.3" cy="166.0" r="1.3" fill="#f8f8f8"/><circle cx="1232.3" cy="165.5" r=".9" fill="#6a8a6a"/><rect x="1227.8" y="169.5" width="2.5" height="3" fill="#333"/><rect x="1231.3" y="170.0" width="2.5" height="2.5" fill="#444"/><text x="851" y="193.0" fill="#4a4a4a" stroke="#4a4a4a" stroke-width="0.18" text-anchor="middle">U5 [UnpackBus_M@Data Flow Models]</text><text x="851" y="201.3" fill="#3636cc" stroke="#3636cc" stroke-width="0.18" text-anchor="middle">NumRows=4 [NumRow]</text><text x="851" y="209.6" fill="#3636cc" stroke="#3636cc" stroke-width="0.18" text-anchor="middle">NumCols=4 [NumCol]</text><text x="851" y="217.9" fill="#3636cc" stroke="#3636cc" stroke-width="0.18" text-anchor="middle">Format=ColumnMajor</text><text x="1009.5" y="200.0" fill="#383838" stroke="#383838" stroke-width="0.18" text-anchor="middle">A8 [Add@Data Flow Models]</text><text x="1114.5" y="200.0" fill="#4a4a4a" stroke="#4a4a4a" stroke-width="0.18" text-anchor="middle">G5 [Gain@Data Flow Models]</text><text x="1114.5" y="208.1" fill="#3636cc" stroke="#3636cc" stroke-width="0.18" text-anchor="middle">Gain=0.063 [1/NumElements]</text><text x="1203.5" y="190.0" fill="#4a4a4a" stroke="#4a4a4a" stroke-width="0.18" text-anchor="middle">Spec_Reconstructed_Corr_Uncorr</text><text x="1203.5" y="198.1" fill="#3636cc" stroke="#3636cc" stroke-width="0.18" text-anchor="middle">Mode=TimeGate</text><text x="1203.5" y="206.2" fill="#3636cc" stroke="#3636cc" stroke-width="0.18" text-anchor="middle">Start=102.4e-6 s [NPts/Sample_Rate]</text><text x="1203.5" y="214.3" fill="#3636cc" stroke="#3636cc" stroke-width="0.18" text-anchor="middle">SegmentTime=102.4e-6 s [NPts/Sample_Rate]</text><text x="1203.5" y="222.4" fill="#3636cc" stroke="#3636cc" stroke-width="0.18" text-anchor="middle">NumSegments=5</text><text x="1203.5" y="230.5" fill="#3636cc" stroke="#3636cc" stroke-width="0.18" text-anchor="middle">SpectrumType=Complex Voltage</text><path d="M805.5 346.4L824.5 346.4" stroke="#f21010" stroke-width="3"/><path d="M823.5 339.9L835.5 346.4L823.5 352.9z" fill="#f21010"/><circle cx="808.5" cy="348.4" r="0.9" fill="#333"/><rect x="835.5" y="330.20000000000005" width="45.3" height="32" fill="#fdd9d9" stroke="#806a6a" stroke-width="1.3"/><path d="M846.5 341.90000000000003V335.20000000000005H874.5V341.90000000000003M851.5 341.90000000000003V338.40000000000003H868.5V341.90000000000003" stroke="#a89898" stroke-width="1" fill="none"/><path d="M842.5 341.20000000000005h-1.6v14.5h1.6M856.0 341.20000000000005h1.6v14.5h-1.6" stroke="#2020a0" stroke-width="1.4" fill="none"/><rect x="843.8" y="342.20000000000005" width="5" height="5" rx="1.2" fill="#18188a"/><circle cx="846.3" cy="344.70000000000005" r="1.1" fill="#9ef"/><rect x="843.8" y="348.20000000000005" width="5" height="5" rx="1.2" fill="#18188a"/><circle cx="846.3" cy="350.70000000000005" r="1.1" fill="#9ef"/><rect x="849.4" y="342.20000000000005" width="5" height="5" rx="1.2" fill="#18188a"/><circle cx="851.9" cy="344.70000000000005" r="1.1" fill="#9ef"/><rect x="849.4" y="348.20000000000005" width="5" height="5" rx="1.2" fill="#18188a"/><circle cx="851.9" cy="350.70000000000005" r="1.1" fill="#9ef"/><rect x="860.8" y="343.90000000000003" width="5.2" height="5" rx="1.2" fill="#18188a"/><circle cx="863.4" cy="346.40000000000003" r="1.1" fill="#9ef"/><rect x="866.3" y="343.90000000000003" width="5.2" height="5" rx="1.2" fill="#18188a"/><circle cx="868.9" cy="346.40000000000003" r="1.1" fill="#9ef"/><rect x="871.8" y="343.90000000000003" width="5.2" height="5" rx="1.2" fill="#18188a"/><circle cx="874.4" cy="346.40000000000003" r="1.1" fill="#9ef"/><path d="M880.8 346.4L885.5 346.4" stroke="#f8a8a8" stroke-width="1.5"/><path d="M885.5 339.9L898.0 346.4L885.5 352.9z" fill="#f21010"/><path d="M898.0 339.9L910.5 346.4L898.0 352.9z" fill="#f21010"/><path d="M910.5 346.4L964.5 346.4" stroke="#a448e8" stroke-width="2.2"/><path d="M964.5 346.4L969.5 346.4" stroke="#f8a8a8" stroke-width="1.2"/><text x="913.5" y="343.4" fill="#2a9a2a" style="font-size:2.8px">ail Uncorr</text><text x="913.5" y="350.9" fill="#2a9a2a" style="font-size:2.8px">ail</text><text x="927.5" y="350.9" fill="#2a9a2a" style="font-size:2.8px">ail Uncorr</text><path d="M969.5 339.9L981.5 346.4L969.5 352.9z" fill="#f21010"/><path d="M981.5 339.9L994.0 346.4L981.5 352.9z" fill="#f21010"/><circle cx="1017.0" cy="346.09999999999997" r="22.7" fill="#fdd9d9" stroke="#555" stroke-width="1.1"/><path d="M1002.5 346.4L1031.5 346.4" stroke="#1a1ae8" stroke-width="2.2"/><path d="M1017.0 331.7L1017.0 360.9" stroke="#1a1ae8" stroke-width="2.2"/><path d="M1039.7 346.4L1057.5 346.4" stroke="#f8a8a8" stroke-width="1.5"/><path d="M1057.5 339.9L1069.5 346.4L1057.5 352.9z" fill="#f21010"/><path d="M1069.5 346.4L1087.5 346.4" stroke="#f8a8a8" stroke-width="1.5"/><path d="M1087.5 339.9L1099.5 346.4L1087.5 352.9z" fill="#f21010"/><circle cx="1072.5" cy="348.4" r="0.9" fill="#2a9a2a"/><path d="M1099.5 323.9L1144.5 346.4L1099.5 368.9z" fill="#fdd9d9" stroke="#555" stroke-width="1.1"/><path d="M1144.5 346.4L1162.5 346.4" stroke="#f8a8a8" stroke-width="1.5"/><path d="M1162.5 339.9L1174.5 346.4L1162.5 352.9z" fill="#f21010"/><path d="M1174.5 346.4L1192.5 346.4" stroke="#999" stroke-width="1.5"/><path d="M1192.5 339.9L1204.5 346.4L1192.5 352.9z" fill="#000"/><circle cx="1177.5" cy="348.4" r="0.9" fill="#2a9a2a"/><ellipse cx="1227.8" cy="346.4" rx="23.3" ry="12.4" fill="#e8e8ec" stroke="#7474c8" stroke-width="1.3"/><rect x="1212.5" y="337.9" width="31" height="15.5" fill="#d8d4c4" stroke="#555" stroke-width=".8"/><rect x="1212.8" y="337.9" width="30.5" height="2.8" fill="#5a6a70"/><rect x="1213.8" y="338.4" width="2" height="1.8" fill="#c05050"/><rect x="1217.3999999999999" y="338.4" width="2" height="1.8" fill="#50a0c0"/><rect x="1221.0" y="338.4" width="2" height="1.8" fill="#a070a0"/><rect x="1224.6" y="338.4" width="2" height="1.8" fill="#60a060"/><rect x="1228.2" y="338.4" width="2" height="1.8" fill="#c08040"/><rect x="1231.8" y="338.4" width="2" height="1.8" fill="#5080c0"/><rect x="1235.3999999999999" y="338.4" width="2" height="1.8" fill="#a05060"/><rect x="1239.0" y="338.4" width="2" height="1.8" fill="#70b0b0"/><rect x="1216.5" y="343.7" width="17" height="7.3" fill="#050505"/><path d="M1217.3 349.9L1219.8 345.4L1221.8 347.9L1224.3 344.4L1226.8 348.4L1229.6 345.4L1231.8 349.9" stroke="#e8e020" stroke-width="1.1" fill="none"/><rect x="1234.8" y="342.4" width="7" height="9" fill="#e4e0d0" stroke="#777" stroke-width=".4"/><circle cx="1236.8" cy="344.9" r="1.3" fill="#f8f8f8"/><circle cx="1239.8" cy="344.4" r=".9" fill="#6a8a6a"/><rect x="1235.3" y="348.4" width="2.5" height="3" fill="#333"/><rect x="1238.8" y="348.9" width="2.5" height="2.5" fill="#444"/><text x="858.5" y="371.2" fill="#4a4a4a" stroke="#4a4a4a" stroke-width="0.18" text-anchor="middle">U6 [UnpackBus_M@Data Flow Models]</text><text x="858.5" y="379.5" fill="#3636cc" stroke="#3636cc" stroke-width="0.18" text-anchor="middle">NumRows=4 [NumRow]</text><text x="858.5" y="387.8" fill="#3636cc" stroke="#3636cc" stroke-width="0.18" text-anchor="middle">NumCols=4 [NumCol]</text><text x="858.5" y="396.09999999999997" fill="#3636cc" stroke="#3636cc" stroke-width="0.18" text-anchor="middle">Format=ColumnMajor</text><text x="1017.0" y="377.4" fill="#383838" stroke="#383838" stroke-width="0.18" text-anchor="middle">A9 [Add@Data Flow Models]</text><text x="1122.0" y="377.4" fill="#4a4a4a" stroke="#4a4a4a" stroke-width="0.18" text-anchor="middle">G6 [Gain@Data Flow Models]</text><text x="1122.0" y="385.5" fill="#3636cc" stroke="#3636cc" stroke-width="0.18" text-anchor="middle">Gain=0.063 [1/NumElements]</text><text x="1211.0" y="367.4" fill="#4a4a4a" stroke="#4a4a4a" stroke-width="0.18" text-anchor="middle">Spec_Sampled_Corr_Uncorr</text><text x="1211.0" y="375.5" fill="#3636cc" stroke="#3636cc" stroke-width="0.18" text-anchor="middle">Mode=TimeGate</text><text x="1211.0" y="383.59999999999997" fill="#3636cc" stroke="#3636cc" stroke-width="0.18" text-anchor="middle">Start=102.4e-6 s [NPts/Sample_Rate]</text><text x="1211.0" y="391.7" fill="#3636cc" stroke="#3636cc" stroke-width="0.18" text-anchor="middle">SegmentTime=102.4e-6 s [NPts/Sample_Rate]</text><text x="1211.0" y="399.79999999999995" fill="#3636cc" stroke="#3636cc" stroke-width="0.18" text-anchor="middle">NumSegments=5</text><text x="1211.0" y="407.9" fill="#3636cc" stroke="#3636cc" stroke-width="0.18" text-anchor="middle">SpectrumType=Complex Voltage</text></svg>
</div>
<div class="a" style="left:164.5px;top:481px;width:1256px;height:403px;background:#dce6f1;border-radius:5px 5px 0 0;border:1px solid #9aa8b8;border-left-color:#5c5c5c"></div>
<div class="a" style="left:165.5px;top:482px;width:1254px;height:21px;background:linear-gradient(#c6d4e3,#dfe8f2);border-radius:4px 4px 0 0"></div>
<svg style="left:172px;top:488px" width="11" height="11" viewBox="0 0 11 11"><rect x=".5" y=".5" width="10" height="10" fill="#f4f4f4" stroke="#8a8a8a"/><path d="M1.5 8.5L4 5.5L6 7L9.5 2.5" stroke="#e02020" stroke-width="1.6" fill="none"/><path d="M1 10.5H10.5V1.5" stroke="#666" stroke-width=".8" fill="none"/></svg>
<div class="t" style="left:185.5px;top:488.5px;color:#a8aeb4;font-size:9.2px;letter-spacing:-0.62px">Design3_Spec_Sampled_Corr</div>
<div class="a" style="left:1345px;top:487.6px;width:21px;height:12.2px;background:linear-gradient(#d8e4f0,#c8d6e6 50%,#bccbdd 51%,#d0dcea);border:1px solid #a8b8cc;border-radius:2px"></div>
<div class="a" style="left:1369px;top:487.6px;width:21px;height:12.2px;background:linear-gradient(#d8e4f0,#c8d6e6 50%,#bccbdd 51%,#d0dcea);border:1px solid #a8b8cc;border-radius:2px"></div>
<div class="a" style="left:1393px;top:487.6px;width:21px;height:12.2px;background:linear-gradient(#d8e4f0,#c8d6e6 50%,#bccbdd 51%,#d0dcea);border:1px solid #a8b8cc;border-radius:2px"></div>
<div class="a" style="left:1351.5px;top:492.8px;width:8.5px;height:4px;background:#f4f4f4;border:1px solid #606870;border-radius:2px"></div>
<div class="a" style="left:1375.5px;top:490.1px;width:7.5px;height:6.5px;border:1px solid #606870;background:#f4f4f4;border-radius:2px"></div>
<div class="a" style="left:1377.5px;top:492.6px;width:3.5px;height:1.2px;background:#606870"></div>
<svg style="left:1399.5px;top:489.8px" width="8" height="8" viewBox="0 0 8 8"><path d="M1 1l6 6M7 1L1 7" stroke="#606870" stroke-width="3"/><path d="M1 1l6 6M7 1L1 7" stroke="#f8f8f8" stroke-width="1.6"/></svg>
<div class="a" style="left:171.5px;top:503px;width:1242px;height:374px;background:#232325"></div>
<svg style="left:0;top:0" width="1600" height="900" viewBox="0 0 1600 900"><rect x="229.5" y="536.0" width="1172.0" height="283.5" fill="#000"/><path d="M229.50 536.0V819.5M288.10 536.0V819.5M346.70 536.0V819.5M405.30 536.0V819.5M463.90 536.0V819.5M522.50 536.0V819.5M581.10 536.0V819.5M639.70 536.0V819.5M698.30 536.0V819.5M756.90 536.0V819.5M815.50 536.0V819.5M874.10 536.0V819.5M932.70 536.0V819.5M991.30 536.0V819.5M1049.90 536.0V819.5M1108.50 536.0V819.5M1167.10 536.0V819.5M1225.70 536.0V819.5M1284.30 536.0V819.5M1342.90 536.0V819.5M1401.50 536.0V819.5M229.5 536.00H1401.5M229.5 550.17H1401.5M229.5 564.35H1401.5M229.5 578.52H1401.5M229.5 592.70H1401.5M229.5 606.88H1401.5M229.5 621.05H1401.5M229.5 635.23H1401.5M229.5 649.40H1401.5M229.5 663.58H1401.5M229.5 677.75H1401.5M229.5 691.92H1401.5M229.5 706.10H1401.5M229.5 720.27H1401.5M229.5 734.45H1401.5M229.5 748.62H1401.5M229.5 762.80H1401.5M229.5 776.98H1401.5M229.5 791.15H1401.5M229.5 805.33H1401.5M229.5 819.50H1401.5M224.5 536.00H229.5M224.5 564.35H229.5M224.5 592.70H229.5M224.5 621.05H229.5M224.5 649.40H229.5M224.5 677.75H229.5M224.5 706.10H229.5M224.5 734.45H229.5M224.5 762.80H229.5M224.5 791.15H229.5M224.5 819.50H229.5M229.50 819.5V824.5M346.70 819.5V824.5M463.90 819.5V824.5M581.10 819.5V824.5M698.30 819.5V824.5M815.50 819.5V824.5M932.70 819.5V824.5M1049.90 819.5V824.5M1167.10 819.5V824.5M1284.30 819.5V824.5M1401.50 819.5V824.5" stroke="#464646" stroke-width="1" fill="none"/><path d="M230.0 745.3V771.5M231.0 751.7V765.1M232.0 749.7V765.5M233.0 749.5V768.1M234.0 751.4V767.8M235.0 748.4V762.0M236.0 747.8V765.6M237.0 750.1V768.6M238.0 747.4V764.2M239.0 747.0V767.6M240.0 751.6V763.9M241.0 749.6V764.0M242.0 749.7V766.9M243.0 752.9V764.3M244.0 752.3V771.8M245.0 750.2V762.5M246.0 748.9V770.7M247.0 750.6V765.4M248.0 750.8V765.4M249.0 755.1V768.3M250.0 751.0V768.3M251.0 752.1V770.8M252.0 751.9V767.5M253.0 752.5V772.5M254.0 750.6V766.3M255.0 748.6V778.6M256.0 750.2V767.0M257.0 749.7V761.2M258.0 751.2V765.6M259.0 749.8V765.7M260.0 749.8V766.7M261.0 752.2V769.7M262.0 750.8V763.6M263.0 752.2V763.9M264.0 751.3V767.7M265.0 745.9V763.8M266.0 751.1V762.6M267.0 748.4V771.1M268.0 751.0V771.2M269.0 748.8V765.2M270.0 750.1V761.7M271.0 751.3V767.9M272.0 751.1V770.5M273.0 749.0V766.0M274.0 753.7V766.0M275.0 752.4V767.1M276.0 747.2V767.3M277.0 752.2V762.9M278.0 751.9V775.4M279.0 745.9V761.9M280.0 751.0V770.8M281.0 749.3V766.6M282.0 751.1V762.6M283.0 747.1V767.9M284.0 752.1V766.8M285.0 748.4V771.8M286.0 752.2V771.7M287.0 752.3V764.0M288.0 749.2V771.9M289.0 748.5V765.9M290.0 746.8V765.1M291.0 752.3V770.1M292.0 750.6V765.8M293.0 749.9V770.2M294.0 750.1V765.5M295.0 750.1V772.3M296.0 748.0V762.6M297.0 750.7V766.1M298.0 750.4V770.3M299.0 754.4V768.1M300.0 748.7V765.4M301.0 753.9V766.9M302.0 750.9V771.4M303.0 745.2V764.9M304.0 752.2V774.3M305.0 751.5V765.2M306.0 750.0V768.4M307.0 753.1V768.1M308.0 754.3V771.7M309.0 748.3V762.5M310.0 751.0V767.4M311.0 752.2V768.6M312.0 748.0V773.2M313.0 752.5V768.8M314.0 745.9V763.0M315.0 748.4V766.8M316.0 750.4V769.6M317.0 748.9V762.8M318.0 749.3V763.1M319.0 752.0V763.8M320.0 752.0V765.2M321.0 751.3V765.2M322.0 753.0V765.6M323.0 754.2V764.9M324.0 750.4V767.6M325.0 751.3V763.2M326.0 749.5V770.5M327.0 750.1V762.9M328.0 750.3V767.3M329.0 748.0V775.7M330.0 755.5V767.7M331.0 746.9V768.5M332.0 751.4V765.0M333.0 744.6V769.5M334.0 745.9V769.5M335.0 750.6V767.1M336.0 752.3V769.9M337.0 748.7V770.6M338.0 750.2V770.6M339.0 750.8V766.8M340.0 748.6V768.3M341.0 752.4V771.1M342.0 749.2V762.6M343.0 749.3V762.7M344.0 750.5V760.8M345.0 745.6V770.6M346.0 750.2V762.4M347.0 750.5V769.1M348.0 748.9V767.3M349.0 753.5V767.3M350.0 750.6V764.5M351.0 748.4V762.1M352.0 749.4V766.7M353.0 751.5V766.7M354.0 751.5V773.4M355.0 749.1V766.5M356.0 751.1V764.5M357.0 750.8V766.2M358.0 753.0V764.0M359.0 751.9V764.0M360.0 752.4V765.4M361.0 747.6V769.5M362.0 752.0V768.6M363.0 751.6V767.6M364.0 752.2V764.1M365.0 751.2V768.5M366.0 748.8V768.5M367.0 748.5V763.1M368.0 751.9V771.2M369.0 751.5V763.9M370.0 746.7V767.0M371.0 750.8V767.1M372.0 751.6V768.1M373.0 753.8V764.9M374.0 751.9V764.9M375.0 752.3V762.3M376.0 752.3V765.0M377.0 750.9V765.3M378.0 751.1V762.6M379.0 750.7V765.0M380.0 749.9V772.7M381.0 749.9V772.9M382.0 752.9V775.0M383.0 751.2V775.9M384.0 748.4V774.8M385.0 752.7V771.0M386.0 751.9V764.8M387.0 747.9V762.0M388.0 749.9V766.4M389.0 745.6V766.0M390.0 745.6V766.0M391.0 754.9V772.0M392.0 749.0V768.3M393.0 748.0V774.9M394.0 747.6V764.2M395.0 749.7V772.5M396.0 752.5V780.5M397.0 753.8V763.8M398.0 751.5V763.8M399.0 753.4V768.4M400.0 754.6V772.2M401.0 750.3V763.0M402.0 751.4V764.3M403.0 747.0V771.5M404.0 748.9V766.3M405.0 751.4V767.7M406.0 748.9V766.9M407.0 749.7V763.1M408.0 751.7V760.2M409.0 751.3V764.8M410.0 748.2V763.3M411.0 750.8V769.3M412.0 751.6V761.2M413.0 753.0V774.3M414.0 746.6V768.2M415.0 746.6V762.4M416.0 750.3V767.8M417.0 750.6V771.4M418.0 749.1V765.5M419.0 751.5V761.2M420.0 750.5V761.5M421.0 750.5V767.8M422.0 749.8V761.2M423.0 752.6V766.0M424.0 748.8V766.5M425.0 749.1V765.7M426.0 752.1V767.6M427.0 751.2V762.4M428.0 751.6V768.0M429.0 747.8V768.8M430.0 749.6V767.3M431.0 751.3V760.7M432.0 751.0V767.5M433.0 751.0V764.5M434.0 752.3V767.4M435.0 748.8V769.5M436.0 751.5V770.3M437.0 750.4V761.6M438.0 750.6V760.9M439.0 751.3V767.0M440.0 744.4V768.8M441.0 745.3V767.7M442.0 750.4V765.6M443.0 753.3V776.2M444.0 749.3V768.1M445.0 750.3V769.5M446.0 755.5V767.6M447.0 748.3V765.7M448.0 750.0V769.4M449.0 752.0V769.7M450.0 751.7V773.6M451.0 749.7V765.0M452.0 752.9V769.8M453.0 752.7V766.0M454.0 750.0V762.9M455.0 749.2V772.9M456.0 749.7V766.0M457.0 748.2V760.3M458.0 748.0V766.8M459.0 748.0V771.0M460.0 747.8V772.2M461.0 750.2V761.4M462.0 752.3V768.2M463.0 749.7V765.3M464.0 751.3V768.7M465.0 751.9V764.4M466.0 750.0V762.0M467.0 750.0V776.0M468.0 745.5V766.8M469.0 750.8V767.3M470.0 749.6V770.4M471.0 752.0V770.0M472.0 749.4V764.7M473.0 750.6V771.7M474.0 749.4V769.1M475.0 749.2V769.1M476.0 750.6V764.0M477.0 749.1V766.5M478.0 751.1V765.4M479.0 747.7V766.1M480.0 747.0V762.3M481.0 754.2V766.6M482.0 754.6V765.9M483.0 753.2V766.6M484.0 753.5V763.9M485.0 749.8V768.5M486.0 743.5V763.6M487.0 753.1V766.4M488.0 751.9V763.4M489.0 751.4V767.2M490.0 753.8V766.3M491.0 751.1V766.3M492.0 750.0V766.5M493.0 748.6V765.4M494.0 751.0V765.4M495.0 749.2V765.4M496.0 748.8V770.4M497.0 748.8V761.7M498.0 749.3V767.7M499.0 752.6V769.4M500.0 750.7V766.3M501.0 753.2V765.8M502.0 748.7V765.8M503.0 749.1V765.7M504.0 751.6V766.0M505.0 751.2V769.3M506.0 751.3V769.3M507.0 753.9V763.5M508.0 750.4V768.9M509.0 751.9V781.9M510.0 752.0V764.0M511.0 749.8V765.4M512.0 747.3V764.3M513.0 751.0V762.7M514.0 751.7V760.9M515.0 750.7V761.5M516.0 754.3V772.9M517.0 751.7V767.3M518.0 752.7V764.7M519.0 750.9V766.8M520.0 747.6V769.9M521.0 750.8V765.2M522.0 752.7V768.2M523.0 751.8V766.3M524.0 749.9V761.9M525.0 749.8V766.0M526.0 750.5V764.8M527.0 750.5V769.3M528.0 751.1V769.9M529.0 749.7V767.1M530.0 755.3V766.1M531.0 751.7V766.6M532.0 747.0V767.4M533.0 748.9V764.9M534.0 749.9V764.5M535.0 749.4V764.9M536.0 750.0V766.5M537.0 749.8V767.8M538.0 750.8V766.3M539.0 748.5V763.6M540.0 751.8V770.0M541.0 752.7V767.5M542.0 750.1V765.7M543.0 749.5V761.5M544.0 750.0V768.2M545.0 748.5V768.2M546.0 749.6V764.8M547.0 750.6V771.0M548.0 750.5V765.7M549.0 749.9V765.7M550.0 749.0V771.2M551.0 750.9V769.3M552.0 752.3V768.6M553.0 751.2V766.5M554.0 751.0V764.4M555.0 752.4V767.1M556.0 749.8V766.9M557.0 752.1V770.3M558.0 749.9V770.3M559.0 742.5V765.9M560.0 746.0V767.3M561.0 747.9V765.0M562.0 752.6V762.3M563.0 753.1V767.9M564.0 753.8V772.6M565.0 751.6V769.2M566.0 749.5V767.3M567.0 747.9V768.9M568.0 750.9V771.6M569.0 745.3V770.8M570.0 751.9V764.3M571.0 751.0V762.3M572.0 751.0V768.3M573.0 754.5V770.7M574.0 750.6V764.6M575.0 753.4V767.8M576.0 749.7V769.7M577.0 755.5V763.5M578.0 749.6V764.8M579.0 750.2V776.7M580.0 750.3V760.4M581.0 749.6V762.9M582.0 747.6V770.2M583.0 750.6V761.9M584.0 753.5V769.1M585.0 751.0V763.0M586.0 748.7V765.3M587.0 748.7V764.9M588.0 747.6V773.0M589.0 749.3V772.3M590.0 749.3V767.1M591.0 753.4V765.4M592.0 749.0V766.4M593.0 750.1V761.1M594.0 749.7V766.6M595.0 748.7V769.0M596.0 750.0V771.2M597.0 748.6V764.3M598.0 748.0V763.6M599.0 748.2V763.7M600.0 749.7V763.6M601.0 752.2V774.8M602.0 749.7V774.8M603.0 751.1V771.6M604.0 750.0V768.4M605.0 750.1V767.3M606.0 749.1V771.4M607.0 749.2V771.0M608.0 751.0V773.8M609.0 747.1V769.2M610.0 752.1V769.5M611.0 750.5V764.4M612.0 747.1V766.9M613.0 752.1V768.0M614.0 748.3V764.2M615.0 751.0V771.5M616.0 751.8V765.1M617.0 753.8V765.9M618.0 753.5V765.0M619.0 751.9V766.6M620.0 746.9V766.1M621.0 746.9V763.0M622.0 752.5V769.2M623.0 750.9V766.5M624.0 751.1V761.4M625.0 748.6V767.4M626.0 747.8V764.2M627.0 751.4V768.3M628.0 750.7V765.0M629.0 752.9V767.5M630.0 753.1V766.2M631.0 754.9V768.5M632.0 752.2V768.4M633.0 750.4V764.9M634.0 751.6V780.4M635.0 751.2V765.7M636.0 751.4V765.2M637.0 751.1V766.6M638.0 752.9V772.3M639.0 752.2V769.3M640.0 755.2V770.5M641.0 751.6V770.5M642.0 751.3V775.2M643.0 749.6V770.9M644.0 749.6V769.6M645.0 752.9V767.3M646.0 750.6V766.2M647.0 752.8V759.8M648.0 752.7V768.3M649.0 750.5V767.3M650.0 749.8V764.6M651.0 748.2V770.7M652.0 749.3V767.1M653.0 750.0V765.1M654.0 751.0V766.8M655.0 750.2V766.2M656.0 750.9V762.1M657.0 753.3V762.2M658.0 752.0V762.0M659.0 750.8V767.8M660.0 752.1V767.1M661.0 751.2V765.9M662.0 752.0V769.6M663.0 746.7V763.5M664.0 749.7V764.3M665.0 749.5V773.7M666.0 753.1V772.6M667.0 754.9V772.6M668.0 754.0V762.3M669.0 751.2V773.1M670.0 749.8V763.1M671.0 745.1V770.7M672.0 751.3V767.5M673.0 749.0V767.5M674.0 748.2V766.2M675.0 749.0V767.1M676.0 748.3V769.7M677.0 749.1V760.0M678.0 748.3V764.3M679.0 749.9V774.6M680.0 748.3V774.6M681.0 752.2V767.3M682.0 752.9V767.1M683.0 745.4V767.1M684.0 751.2V769.7M685.0 750.5V770.9M686.0 750.2V764.5M687.0 747.8V765.9M688.0 751.4V762.0M689.0 750.9V767.6M690.0 752.1V763.9M691.0 752.4V765.6M692.0 753.5V768.7M693.0 751.8V766.2M694.0 750.3V762.1M695.0 748.7V766.8M696.0 753.0V768.6M697.0 752.0V774.5M698.0 752.0V772.4M699.0 752.8V764.9M700.0 752.9V767.1M701.0 749.1V768.7M702.0 749.1V765.0M703.0 752.9V769.8M704.0 753.5V764.7M705.0 744.6V765.2M706.0 750.1V765.7M707.0 750.1V763.7M708.0 745.9V763.2M709.0 750.6V770.6M710.0 751.2V772.2M711.0 751.4V770.9M712.0 752.8V770.9M713.0 752.7V766.0M714.0 749.7V764.0M715.0 749.5V768.3M716.0 750.7V766.0M717.0 747.2V765.8M718.0 747.2V766.2M719.0 749.6V761.7M720.0 752.9V762.5M721.0 747.2V766.1M722.0 751.8V764.4M723.0 753.8V767.5M724.0 749.1V760.5M725.0 749.9V760.9M726.0 750.6V766.4M727.0 751.3V768.3M728.0 754.3V765.5M729.0 753.4V772.7M730.0 754.9V763.1M731.0 752.4V764.2M732.0 748.9V765.6M733.0 749.2V769.9M734.0 752.7V766.6M735.0 749.2V766.6M736.0 750.5V772.3M737.0 749.4V772.2M738.0 755.0V766.1M739.0 748.2V765.9M740.0 751.5V771.0M741.0 750.5V771.0M742.0 753.8V762.6M743.0 748.7V767.6M744.0 749.5V766.8M745.0 748.2V764.4M746.0 748.2V766.7M747.0 750.8V766.2M748.0 754.7V775.3M749.0 750.3V769.0M750.0 748.2V762.3M751.0 749.8V764.5M752.0 753.0V761.8M753.0 750.2V767.0M754.0 752.7V763.7M755.0 754.2V765.5M756.0 750.3V778.3M757.0 747.5V778.3M758.0 751.8V762.8M759.0 747.5V763.9M760.0 751.2V768.3M761.0 752.8V768.3M762.0 747.3V761.2M763.0 748.7V761.8M764.0 752.5V763.9M765.0 748.4V772.7M766.0 749.6V764.7M767.0 747.1V764.7M768.0 750.1V767.7M769.0 752.6V767.7M770.0 751.8V762.5M771.0 750.6V762.7M772.0 749.1V764.7M773.0 750.1V774.6M774.0 751.1V767.5M775.0 748.0V766.4M776.0 749.2V763.5M777.0 750.3V770.6M778.0 745.2V770.3M779.0 746.7V763.8M780.0 749.5V766.7M781.0 750.2V768.8M782.0 752.7V760.2M783.0 749.3V763.9M784.0 751.0V768.8M785.0 750.1V764.2M786.0 751.5V768.5M787.0 751.2V776.7M788.0 745.5V762.1M789.0 751.4V765.8M790.0 752.7V775.5M791.0 750.9V764.9M792.0 749.4V762.1M793.0 749.1V766.7M794.0 748.6V767.3M795.0 747.5V766.9M796.0 750.5V770.9M797.0 751.2V764.2M798.0 752.8V767.3M799.0 752.1V770.5M800.0 749.3V765.4M801.0 750.3V765.7M802.0 751.8V764.1M803.0 752.3V762.1M804.0 749.0V761.7M805.0 747.6V762.3M806.0 752.2V766.8M807.0 750.7V764.7M808.0 749.8V773.8M809.0 753.4V763.9M810.0 753.0V765.0M811.0 749.4V769.4M812.0 751.0V767.4M813.0 748.8V766.9M814.0 748.5V765.2M815.0 752.0V771.4M816.0 749.0V765.9M817.0 749.5V763.7M818.0 751.2V766.4M819.0 748.2V769.2M820.0 751.5V762.9M821.0 750.7V764.4M822.0 750.0V766.8M823.0 747.4V765.1M824.0 748.6V770.0M825.0 749.9V763.5M826.0 751.8V765.6M827.0 750.1V764.3M828.0 751.2V764.8M829.0 751.4V764.6M830.0 751.4V764.7M831.0 748.9V764.1M832.0 750.7V770.4M833.0 755.3V763.3M834.0 749.0V765.8M835.0 753.6V770.4M836.0 746.8V760.6M837.0 746.8V768.1M838.0 749.9V773.4M839.0 750.5V763.8M840.0 746.8V772.4M841.0 751.9V765.9M842.0 749.4V763.2M843.0 749.4V761.0M844.0 747.6V763.7M845.0 748.5V767.2M846.0 751.5V767.0M847.0 748.8V765.0M848.0 753.7V768.0M849.0 749.8V769.5M850.0 749.8V764.5M851.0 750.2V761.7M852.0 751.1V764.9M853.0 751.9V764.7M854.0 752.3V768.2M855.0 749.6V770.1M856.0 751.7V768.0M857.0 753.4V768.6M858.0 745.3V764.6M859.0 751.9V774.3M860.0 748.9V764.1M861.0 748.4V765.4M862.0 749.2V764.2M863.0 753.0V768.2M864.0 753.5V761.8M865.0 752.6V771.7M866.0 748.8V773.7M867.0 747.8V763.1M868.0 751.8V764.7M869.0 748.7V771.1M870.0 746.1V769.4M871.0 746.8V766.8M872.0 750.9V766.7M873.0 751.2V762.7M874.0 750.6V765.6M875.0 749.6V764.0M876.0 753.7V767.1M877.0 748.6V765.6M878.0 753.6V769.4M879.0 753.6V763.2M880.0 752.6V770.6M881.0 748.1V773.3M882.0 746.6V765.3M883.0 749.5V765.3M884.0 751.7V768.6M885.0 750.7V762.6M886.0 750.4V771.7M887.0 753.3V766.2M888.0 749.5V765.1M889.0 753.8V765.8M890.0 751.8V769.0M891.0 749.6V762.1M892.0 752.6V767.7M893.0 750.4V763.6M894.0 749.6V763.4M895.0 749.9V770.4M896.0 747.4V766.5M897.0 747.4V765.7M898.0 749.4V765.7M899.0 750.7V768.9M900.0 752.4V770.5M901.0 747.2V765.0M902.0 751.6V760.8M903.0 750.6V764.4M904.0 753.0V761.5M905.0 752.1V765.0M906.0 749.3V764.7M907.0 754.1V764.5M908.0 747.7V763.6M909.0 748.9V769.5M910.0 751.0V766.7M911.0 748.4V769.8M912.0 749.5V765.0M913.0 750.3V769.0M914.0 748.7V767.2M915.0 748.8V767.5M916.0 753.1V762.1M917.0 746.9V761.9M918.0 749.7V763.1M919.0 748.3V765.2M920.0 748.3V768.0M921.0 747.2V767.8M922.0 747.4V767.7M923.0 752.1V765.4M924.0 749.9V764.7M925.0 751.5V764.5M926.0 752.5V766.1M927.0 750.1V762.5M928.0 754.7V767.3M929.0 752.8V766.4M930.0 749.7V768.5M931.0 749.1V768.5M932.0 749.0V763.2M933.0 748.8V764.6M934.0 745.8V770.1M935.0 750.2V770.1M936.0 753.3V768.2M937.0 748.0V766.1M938.0 748.9V763.3M939.0 751.4V770.0M940.0 750.4V762.0M941.0 752.1V762.6M942.0 750.7V769.8M943.0 754.6V769.7M944.0 749.1V768.2M945.0 747.8V768.2M946.0 751.0V769.4M947.0 746.5V764.1M948.0 753.2V763.8M949.0 752.1V763.6M950.0 754.0V765.1M951.0 751.8V765.5M952.0 751.3V763.8M953.0 749.7V764.3M954.0 749.7V774.2M955.0 750.2V768.0M956.0 754.0V762.9M957.0 751.8V766.9M958.0 751.8V773.3M959.0 748.5V764.0M960.0 749.1V763.1M961.0 751.1V763.5M962.0 750.4V768.0M963.0 753.9V764.9M964.0 747.9V767.4M965.0 752.7V771.7M966.0 748.2V771.7M967.0 750.0V764.6M968.0 752.0V766.5M969.0 754.6V766.9M970.0 750.1V767.7M971.0 750.3V767.7M972.0 749.6V774.0M973.0 751.6V774.0M974.0 745.0V767.6M975.0 746.5V760.9M976.0 750.5V769.8M977.0 751.7V777.6M978.0 752.1V766.0M979.0 747.0V766.6M980.0 752.1V766.8M981.0 749.5V769.6M982.0 749.3V766.2M983.0 750.9V766.2M984.0 751.1V765.0M985.0 751.1V762.1M986.0 754.0V777.5M987.0 754.6V771.5M988.0 751.7V767.5M989.0 747.9V769.9M990.0 748.4V771.9M991.0 751.3V774.0M992.0 752.1V763.8M993.0 752.1V776.2M994.0 747.2V766.6M995.0 750.4V763.4M996.0 751.6V763.3M997.0 749.6V766.6M998.0 750.3V765.8M999.0 750.9V767.2M1000.0 752.7V767.2M1001.0 748.1V763.3M1002.0 749.0V766.2M1003.0 751.8V767.1M1004.0 750.3V768.5M1005.0 753.2V768.8M1006.0 748.8V764.0M1007.0 748.5V767.2M1008.0 747.5V763.7M1009.0 750.9V780.4M1010.0 751.0V767.7M1011.0 752.5V767.8M1012.0 750.1V765.3M1013.0 746.3V765.9M1014.0 747.8V762.1M1015.0 748.7V769.9M1016.0 749.1V769.9M1017.0 743.9V764.0M1018.0 751.7V762.0M1019.0 753.3V764.9M1020.0 752.5V767.2M1021.0 748.1V763.6M1022.0 750.1V762.2M1023.0 750.9V765.5M1024.0 750.9V765.3M1025.0 747.4V769.9M1026.0 751.3V763.7M1027.0 749.2V767.3M1028.0 749.1V770.3M1029.0 754.9V770.4M1030.0 752.2V763.1M1031.0 749.2V765.2M1032.0 749.2V763.3M1033.0 751.6V763.8M1034.0 748.6V776.4M1035.0 751.8V767.9M1036.0 748.5V765.8M1037.0 746.8V767.5M1038.0 751.5V761.5M1039.0 748.3V776.0M1040.0 751.1V776.0M1041.0 751.1V761.5M1042.0 748.0V768.1M1043.0 747.5V770.5M1044.0 748.9V764.7M1045.0 748.5V768.8M1046.0 748.5V763.7M1047.0 748.9V768.3M1048.0 752.2V771.0M1049.0 748.7V766.7M1050.0 751.4V771.5M1051.0 747.6V763.7M1052.0 753.4V763.6M1053.0 749.9V765.1M1054.0 745.3V762.7M1055.0 751.3V770.2M1056.0 754.4V770.2M1057.0 750.2V764.3M1058.0 750.2V764.8M1059.0 750.6V761.5M1060.0 751.4V768.1M1061.0 753.2V768.9M1062.0 744.9V775.5M1063.0 751.3V775.5M1064.0 749.1V770.6M1065.0 749.4V761.5M1066.0 752.0V764.4M1067.0 750.9V767.7M1068.0 752.9V767.9M1069.0 751.6V768.5M1070.0 750.5V774.9M1071.0 749.1V774.9M1072.0 751.5V766.0M1073.0 751.2V765.6M1074.0 748.9V768.9M1075.0 751.9V768.9M1076.0 752.9V762.1M1077.0 749.8V768.8M1078.0 750.2V765.4M1079.0 749.8V768.8M1080.0 750.0V765.7M1081.0 750.0V767.3M1082.0 751.6V770.2M1083.0 750.8V771.2M1084.0 752.3V762.6M1085.0 749.3V768.1M1086.0 749.4V766.9M1087.0 749.9V762.6M1088.0 749.1V775.6M1089.0 752.0V767.8M1090.0 754.5V767.9M1091.0 753.5V762.9M1092.0 750.3V766.5M1093.0 751.6V765.8M1094.0 754.4V769.6M1095.0 747.8V766.2M1096.0 751.1V771.0M1097.0 750.8V763.0M1098.0 746.4V763.8M1099.0 750.8V774.1M1100.0 750.5V767.6M1101.0 753.3V767.8M1102.0 750.4V767.8M1103.0 751.6V763.7M1104.0 749.0V760.8M1105.0 750.7V765.0M1106.0 753.4V764.7M1107.0 748.7V764.3M1108.0 751.9V762.5M1109.0 747.1V764.2M1110.0 747.2V769.2M1111.0 746.2V766.9M1112.0 749.1V765.0M1113.0 749.9V759.7M1114.0 752.1V768.4M1115.0 754.5V765.2M1116.0 748.9V766.8M1117.0 751.8V773.4M1118.0 750.6V767.5M1119.0 752.4V767.5M1120.0 751.6V763.1M1121.0 751.6V765.9M1122.0 750.5V773.6M1123.0 749.0V773.6M1124.0 750.7V764.8M1125.0 749.8V764.3M1126.0 747.2V762.9M1127.0 750.3V767.2M1128.0 744.7V765.0M1129.0 748.1V766.1M1130.0 751.1V767.7M1131.0 749.9V767.1M1132.0 749.2V771.0M1133.0 747.8V767.9M1134.0 745.0V767.9M1135.0 752.4V772.2M1136.0 749.4V765.2M1137.0 745.6V766.0M1138.0 745.0V761.8M1139.0 749.0V764.0M1140.0 751.8V766.0M1141.0 753.8V766.3M1142.0 749.6V764.8M1143.0 750.8V765.1M1144.0 750.8V770.6M1145.0 751.5V767.5M1146.0 752.7V765.8M1147.0 749.5V767.9M1148.0 750.8V767.1M1149.0 750.3V766.7M1150.0 752.3V773.2M1151.0 750.9V773.2M1152.0 751.5V769.0M1153.0 751.0V785.8M1154.0 750.7V761.5M1155.0 750.7V764.8M1156.0 749.1V770.7M1157.0 749.8V767.2M1158.0 751.2V779.5M1159.0 748.4V767.9M1160.0 749.6V761.4M1161.0 751.1V773.8M1162.0 746.9V768.2M1163.0 746.9V769.9M1164.0 746.5V768.9M1165.0 749.1V765.0M1166.0 749.1V775.3M1167.0 750.8V766.2M1168.0 752.1V766.2M1169.0 750.0V764.5M1170.0 748.4V777.1M1171.0 753.4V768.7M1172.0 751.9V766.3M1173.0 750.4V768.3M1174.0 750.3V764.8M1175.0 752.2V764.0M1176.0 749.7V763.5M1177.0 750.4V771.3M1178.0 750.3V771.1M1179.0 753.2V767.0M1180.0 750.0V770.4M1181.0 752.8V765.0M1182.0 748.9V764.4M1183.0 750.2V774.2M1184.0 745.4V768.5M1185.0 752.6V768.1M1186.0 753.1V768.0M1187.0 752.7V769.2M1188.0 751.5V764.9M1189.0 746.3V766.0M1190.0 746.3V773.5M1191.0 751.2V778.8M1192.0 750.8V778.8M1193.0 749.9V766.7M1194.0 754.6V774.5M1195.0 749.4V771.7M1196.0 753.1V768.7M1197.0 749.3V767.3M1198.0 749.1V765.4M1199.0 755.1V767.7M1200.0 750.1V768.0M1201.0 748.2V765.2M1202.0 753.2V767.5M1203.0 749.6V763.9M1204.0 749.3V769.1M1205.0 749.5V762.9M1206.0 748.2V765.2M1207.0 751.1V766.1M1208.0 752.7V771.4M1209.0 750.9V764.4M1210.0 752.2V774.7M1211.0 747.0V770.7M1212.0 752.7V761.1M1213.0 751.6V764.4M1214.0 752.5V764.5M1215.0 749.2V764.7M1216.0 752.2V767.3M1217.0 747.4V772.3M1218.0 749.2V762.9M1219.0 751.5V769.7M1220.0 751.5V770.9M1221.0 750.8V766.2M1222.0 750.7V761.9M1223.0 749.1V771.9M1224.0 751.6V764.2M1225.0 750.4V763.0M1226.0 753.9V763.1M1227.0 746.1V763.8M1228.0 751.0V767.7M1229.0 752.0V767.1M1230.0 749.9V765.7M1231.0 745.9V774.8M1232.0 752.4V775.4M1233.0 751.5V769.6M1234.0 752.0V765.2M1235.0 750.5V764.3M1236.0 753.5V769.8M1237.0 752.7V761.5M1238.0 753.7V764.1M1239.0 752.0V774.0M1240.0 753.3V766.8M1241.0 751.6V771.3M1242.0 751.2V765.6M1243.0 750.6V767.3M1244.0 747.8V765.7M1245.0 751.6V766.5M1246.0 752.0V768.8M1247.0 751.8V764.6M1248.0 744.5V765.8M1249.0 749.9V762.9M1250.0 749.9V773.4M1251.0 751.7V767.3M1252.0 752.4V764.0M1253.0 746.9V768.3M1254.0 749.1V768.3M1255.0 748.2V773.6M1256.0 751.7V768.0M1257.0 748.5V771.2M1258.0 751.8V769.0M1259.0 753.5V767.3M1260.0 748.7V767.4M1261.0 752.0V762.0M1262.0 752.0V775.1M1263.0 748.3V762.7M1264.0 750.5V760.9M1265.0 754.1V763.6M1266.0 747.3V762.5M1267.0 751.7V764.3M1268.0 749.8V767.6M1269.0 749.4V761.4M1270.0 748.4V770.5M1271.0 751.8V761.4M1272.0 749.4V766.5M1273.0 748.6V769.8M1274.0 750.9V764.6M1275.0 750.9V768.1M1276.0 749.5V781.7M1277.0 750.2V764.9M1278.0 746.6V764.9M1279.0 748.3V765.7M1280.0 753.3V766.6M1281.0 749.2V766.4M1282.0 749.2V764.6M1283.0 751.3V768.1M1284.0 749.4V763.3M1285.0 748.9V766.7M1286.0 750.3V766.4M1287.0 751.6V760.5M1288.0 749.6V766.6M1289.0 752.5V766.6M1290.0 752.3V769.3M1291.0 751.6V764.7M1292.0 751.8V765.1M1293.0 750.1V771.2M1294.0 751.5V768.1M1295.0 752.2V764.2M1296.0 754.4V765.8M1297.0 749.5V768.5M1298.0 748.9V765.4M1299.0 750.2V767.8M1300.0 747.7V765.9M1301.0 750.6V764.5M1302.0 751.7V769.9M1303.0 749.1V764.5M1304.0 753.4V765.0M1305.0 750.4V763.0M1306.0 748.9V770.3M1307.0 750.1V763.2M1308.0 748.0V759.8M1309.0 753.1V770.3M1310.0 750.6V771.1M1311.0 753.6V770.0M1312.0 745.6V765.9M1313.0 753.3V776.2M1314.0 747.6V776.2M1315.0 750.9V769.2M1316.0 752.7V763.4M1317.0 751.0V767.7M1318.0 751.6V769.2M1319.0 749.4V769.2M1320.0 747.4V766.4M1321.0 749.7V764.8M1322.0 749.7V763.8M1323.0 750.8V766.6M1324.0 751.3V775.8M1325.0 749.5V764.9M1326.0 750.4V777.5M1327.0 747.1V764.7M1328.0 751.3V767.2M1329.0 750.4V766.2M1330.0 749.8V766.3M1331.0 749.8V770.7M1332.0 753.0V765.8M1333.0 753.4V766.6M1334.0 752.3V762.4M1335.0 753.6V763.4M1336.0 751.5V764.6M1337.0 752.5V762.8M1338.0 753.3V770.5M1339.0 749.6V770.2M1340.0 750.0V770.8M1341.0 748.0V770.8M1342.0 752.4V768.1M1343.0 748.2V761.9M1344.0 746.7V768.9M1345.0 752.8V767.3M1346.0 749.6V769.5M1347.0 749.6V766.8M1348.0 751.1V761.9M1349.0 751.9V764.9M1350.0 747.1V775.9M1351.0 753.1V764.3M1352.0 750.8V764.3M1353.0 752.8V763.7M1354.0 747.3V763.7M1355.0 747.8V766.1M1356.0 747.8V758.1M1357.0 748.8V762.1M1358.0 749.5V767.4M1359.0 747.4V767.1M1360.0 750.3V772.5M1361.0 749.4V772.8M1362.0 751.5V764.9M1363.0 750.2V770.3M1364.0 750.2V765.7M1365.0 751.1V772.1M1366.0 750.9V764.1M1367.0 756.5V767.4M1368.0 752.5V769.0M1369.0 750.9V769.8M1370.0 750.4V776.9M1371.0 750.1V768.8M1372.0 751.4V762.0M1373.0 749.3V769.1M1374.0 749.3V769.5M1375.0 754.3V766.1M1376.0 751.5V763.4M1377.0 751.8V763.3M1378.0 753.5V769.5M1379.0 750.3V774.5M1380.0 745.3V774.2M1381.0 745.3V763.5M1382.0 753.4V765.2M1383.0 749.8V768.0M1384.0 752.4V770.6M1385.0 750.0V765.7M1386.0 752.0V765.7M1387.0 748.7V763.9M1388.0 753.0V768.1M1389.0 750.9V762.7M1390.0 748.7V768.7M1391.0 753.4V768.2M1392.0 749.1V765.8M1393.0 749.8V764.8M1394.0 748.0V764.7M1395.0 751.9V771.3M1396.0 750.4V758.6M1397.0 752.8V768.7M1398.0 753.5V767.1M1399.0 750.1V761.2M1400.0 752.0V763.6M1401.0 752.0V767.4" stroke="#1db2d3" stroke-width="1.15" fill="none"/><path d="M230.0 775.6V791.0M231.0 774.7V790.9M232.0 777.4V788.3M233.0 779.2V791.5M234.0 776.7V790.9M235.0 774.5V793.7M236.0 778.4V791.6M237.0 778.0V795.8M238.0 777.1V797.9M239.0 774.9V793.2M240.0 779.6V789.0M241.0 773.9V798.3M242.0 775.0V796.8M243.0 776.7V789.7M244.0 779.2V788.0M245.0 778.1V787.5M246.0 781.5V788.6M247.0 775.7V790.7M248.0 775.9V790.9M249.0 774.8V792.8M250.0 777.9V792.8M251.0 777.4V791.9M252.0 775.2V793.8M253.0 781.1V790.3M254.0 774.0V792.3M255.0 777.2V790.8M256.0 776.5V790.6M257.0 779.4V788.9M258.0 775.4V787.9M259.0 775.2V785.8M260.0 775.1V794.8M261.0 773.9V794.8M262.0 777.0V794.1M263.0 779.1V794.9M264.0 776.9V794.4M265.0 776.5V789.7M266.0 778.9V792.8M267.0 777.3V792.8M268.0 777.2V795.6M269.0 776.3V788.4M270.0 779.4V792.7M271.0 777.2V787.3M272.0 775.9V790.0M273.0 772.6V786.5M274.0 778.3V791.4M275.0 780.2V790.5M276.0 776.6V793.9M277.0 777.5V792.2M278.0 778.5V787.4M279.0 773.9V794.4M280.0 777.7V791.0M281.0 775.5V789.8M282.0 774.7V789.3M283.0 779.5V790.6M284.0 774.0V787.9M285.0 777.5V791.9M286.0 774.7V796.4M287.0 778.0V790.6M288.0 775.1V790.9M289.0 778.7V790.4M290.0 778.3V789.4M291.0 778.9V798.4M292.0 777.6V789.2M293.0 778.1V789.4M294.0 775.2V795.7M295.0 778.1V791.7M296.0 779.1V791.1M297.0 774.2V791.8M298.0 776.5V790.4M299.0 774.4V790.4M300.0 778.1V795.3M301.0 775.3V787.2M302.0 777.7V791.8M303.0 774.5V797.7M304.0 775.0V792.9M305.0 777.9V792.9M306.0 778.2V790.6M307.0 775.0V787.5M308.0 779.3V789.0M309.0 776.1V788.7M310.0 778.4V792.3M311.0 778.2V790.7M312.0 776.9V789.9M313.0 778.1V792.8M314.0 780.7V794.0M315.0 777.7V792.3M316.0 775.3V788.3M317.0 775.5V787.9M318.0 776.6V791.8M319.0 775.3V789.4M320.0 775.6V792.6M321.0 773.4V791.5M322.0 777.4V790.5M323.0 778.7V789.5M324.0 774.0V794.6M325.0 776.2V795.0M326.0 776.9V793.0M327.0 776.1V790.8M328.0 776.1V790.4M329.0 777.1V793.0M330.0 776.8V792.2M331.0 778.0V791.3M332.0 779.0V793.2M333.0 773.6V796.0M334.0 774.7V788.4M335.0 779.9V790.5M336.0 774.2V798.9M337.0 778.6V789.6M338.0 776.6V794.6M339.0 776.6V788.8M340.0 779.9V787.7M341.0 777.9V797.0M342.0 776.9V785.5M343.0 775.9V796.4M344.0 778.0V789.3M345.0 775.6V794.5M346.0 777.9V789.2M347.0 775.6V788.2M348.0 778.8V791.5M349.0 777.6V793.0M350.0 778.7V794.7M351.0 777.4V791.9M352.0 776.7V796.1M353.0 772.4V795.4M354.0 778.4V795.4M355.0 775.6V790.3M356.0 776.4V790.6M357.0 780.2V801.8M358.0 779.0V801.8M359.0 774.9V788.6M360.0 774.9V791.7M361.0 774.8V792.4M362.0 780.9V788.7M363.0 777.8V785.8M364.0 776.8V788.0M365.0 778.7V790.9M366.0 774.3V788.1M367.0 776.3V797.3M368.0 778.2V795.9M369.0 778.3V800.9M370.0 777.4V803.8M371.0 775.5V803.8M372.0 775.7V785.5M373.0 779.1V794.9M374.0 777.6V798.4M375.0 778.6V795.0M376.0 781.9V789.9M377.0 780.1V795.0M378.0 782.3V795.0M379.0 777.8V788.0M380.0 777.2V789.5M381.0 779.4V792.6M382.0 780.3V788.2M383.0 779.2V788.2M384.0 776.9V788.4M385.0 776.3V790.6M386.0 775.4V788.0M387.0 774.1V795.9M388.0 776.0V791.2M389.0 776.5V790.1M390.0 778.0V792.0M391.0 778.5V791.0M392.0 775.9V789.2M393.0 777.7V788.8M394.0 776.6V792.4M395.0 774.6V789.7M396.0 776.6V790.3M397.0 779.3V796.2M398.0 778.5V789.5M399.0 776.9V786.8M400.0 777.7V790.0M401.0 777.5V801.3M402.0 779.1V794.1M403.0 778.3V788.8M404.0 777.6V787.3M405.0 780.5V795.0M406.0 776.6V788.9M407.0 776.2V788.2M408.0 775.3V793.0M409.0 779.3V792.2M410.0 777.4V793.0M411.0 781.0V797.2M412.0 782.3V794.5M413.0 776.6V799.5M414.0 778.1V789.5M415.0 779.0V793.5M416.0 778.6V794.8M417.0 775.0V789.7M418.0 775.0V791.4M419.0 775.3V798.9M420.0 780.1V800.0M421.0 776.7V794.8M422.0 775.5V793.1M423.0 774.8V788.5M424.0 779.6V795.9M425.0 778.1V795.9M426.0 778.5V787.3M427.0 779.4V798.5M428.0 776.4V791.4M429.0 775.7V791.9M430.0 778.3V802.8M431.0 777.5V789.9M432.0 774.7V792.8M433.0 775.2V791.2M434.0 779.6V790.6M435.0 773.4V795.0M436.0 776.6V795.0M437.0 779.9V792.3M438.0 778.4V792.3M439.0 778.4V789.9M440.0 774.7V793.5M441.0 774.1V790.1M442.0 775.9V790.5M443.0 772.2V792.8M444.0 776.4V791.7M445.0 780.6V796.2M446.0 777.4V795.0M447.0 777.3V790.8M448.0 777.5V796.1M449.0 777.3V793.7M450.0 777.0V793.7M451.0 779.6V794.5M452.0 778.7V788.2M453.0 776.6V790.7M454.0 779.4V791.6M455.0 777.8V791.5M456.0 777.8V794.6M457.0 779.3V788.3M458.0 777.3V792.5M459.0 777.9V789.2M460.0 773.9V793.9M461.0 776.2V790.3M462.0 777.7V792.0M463.0 776.4V788.7M464.0 779.9V793.7M465.0 780.5V788.9M466.0 772.3V796.6M467.0 777.4V796.6M468.0 773.0V803.1M469.0 775.6V797.7M470.0 775.9V790.1M471.0 772.9V787.9M472.0 777.0V798.3M473.0 780.2V799.4M474.0 777.0V791.6M475.0 778.6V795.9M476.0 774.6V788.1M477.0 780.3V799.3M478.0 774.4V799.3M479.0 775.5V791.9M480.0 774.8V789.0M481.0 776.5V790.0M482.0 776.0V791.6M483.0 776.7V796.4M484.0 778.2V791.4M485.0 780.3V787.8M486.0 777.0V791.7M487.0 780.0V791.1M488.0 775.8V796.8M489.0 776.3V796.8M490.0 774.6V791.7M491.0 774.9V801.8M492.0 777.2V794.9M493.0 777.1V790.6M494.0 778.2V791.9M495.0 778.5V793.6M496.0 777.5V793.0M497.0 777.5V790.2M498.0 778.7V790.9M499.0 777.3V792.1M500.0 773.6V793.0M501.0 778.3V788.4M502.0 778.0V787.8M503.0 777.6V791.3M504.0 778.3V797.4M505.0 780.2V800.3M506.0 776.6V800.3M507.0 774.6V793.9M508.0 777.0V790.6M509.0 772.7V789.8M510.0 772.6V790.7M511.0 778.5V788.6M512.0 773.8V789.6M513.0 773.8V793.7M514.0 776.6V798.1M515.0 774.4V790.3M516.0 774.6V790.1M517.0 777.9V790.7M518.0 775.6V794.3M519.0 779.8V792.3M520.0 775.9V793.5M521.0 775.0V790.2M522.0 773.9V791.5M523.0 776.7V793.1M524.0 778.2V794.8M525.0 772.6V789.9M526.0 777.5V797.0M527.0 775.3V794.6M528.0 777.3V787.8M529.0 777.7V790.5M530.0 778.4V788.8M531.0 777.5V797.0M532.0 777.8V791.4M533.0 777.7V789.2M534.0 777.6V790.8M535.0 773.2V790.0M536.0 778.5V794.6M537.0 778.5V793.6M538.0 773.7V790.4M539.0 778.5V788.7M540.0 778.3V794.9M541.0 774.9V793.9M542.0 779.3V789.0M543.0 779.3V793.0M544.0 777.9V796.3M545.0 776.4V788.3M546.0 773.7V791.0M547.0 774.7V788.4M548.0 778.8V794.3M549.0 778.7V792.8M550.0 780.0V792.7M551.0 780.1V788.2M552.0 777.2V787.8M553.0 776.9V790.5M554.0 774.5V787.7M555.0 777.9V797.4M556.0 775.3V795.2M557.0 778.6V796.2M558.0 776.8V796.9M559.0 777.1V796.9M560.0 774.8V787.2M561.0 776.9V790.3M562.0 778.9V790.8M563.0 775.2V790.6M564.0 780.4V795.5M565.0 774.8V792.2M566.0 778.0V793.3M567.0 779.8V789.9M568.0 774.9V792.8M569.0 780.9V791.3M570.0 776.7V789.8M571.0 780.9V789.2M572.0 778.7V789.1M573.0 777.4V796.8M574.0 778.6V791.2M575.0 778.1V794.1M576.0 774.6V792.4M577.0 776.5V795.2M578.0 777.7V786.6M579.0 776.5V790.9M580.0 776.8V791.7M581.0 778.3V791.2M582.0 776.9V786.5M583.0 776.9V791.5M584.0 777.0V788.4M585.0 779.3V791.3M586.0 775.8V788.0M587.0 775.8V795.5M588.0 776.3V793.6M589.0 777.6V789.3M590.0 772.4V791.7M591.0 776.2V788.0M592.0 778.6V793.7M593.0 776.0V795.4M594.0 777.6V793.6M595.0 775.4V788.2M596.0 778.3V793.2M597.0 780.6V793.6M598.0 779.3V790.8M599.0 775.9V793.2M600.0 773.3V789.2M601.0 775.3V791.6M602.0 777.2V791.6M603.0 775.1V787.3M604.0 778.7V798.3M605.0 778.7V789.7M606.0 777.8V789.5M607.0 778.0V791.4M608.0 774.7V788.7M609.0 777.2V788.8M610.0 776.5V789.0M611.0 776.0V789.1M612.0 777.4V796.6M613.0 775.4V799.4M614.0 781.1V794.7M615.0 778.8V789.4M616.0 777.6V792.6M617.0 777.0V800.8M618.0 773.3V792.0M619.0 775.6V789.5M620.0 778.4V790.5M621.0 775.5V790.5M622.0 777.7V793.1M623.0 777.7V792.4M624.0 772.6V791.3M625.0 780.4V791.5M626.0 777.0V791.5M627.0 776.8V791.5M628.0 778.4V789.1M629.0 777.3V792.9M630.0 774.9V798.3M631.0 779.0V796.2M632.0 776.3V790.0M633.0 773.3V790.4M634.0 773.3V789.9M635.0 775.6V790.3M636.0 775.9V791.3M637.0 778.0V790.1M638.0 776.7V786.8M639.0 775.1V791.3M640.0 775.1V790.7M641.0 777.1V792.4M642.0 775.5V793.7M643.0 778.3V793.1M644.0 773.8V790.5M645.0 773.8V792.7M646.0 781.1V794.6M647.0 776.9V794.1M648.0 777.8V793.5M649.0 779.2V793.3M650.0 779.3V789.5M651.0 776.0V790.0M652.0 776.2V788.9M653.0 779.0V787.4M654.0 779.1V789.5M655.0 777.3V794.4M656.0 777.4V792.9M657.0 775.2V792.9M658.0 779.8V792.4M659.0 776.4V791.0M660.0 778.7V794.6M661.0 777.8V794.9M662.0 775.4V789.8M663.0 777.1V798.1M664.0 778.8V790.5M665.0 778.7V787.2M666.0 775.0V794.6M667.0 774.1V785.5M668.0 778.6V793.1M669.0 776.4V789.9M670.0 776.1V792.1M671.0 776.3V794.2M672.0 776.2V793.2M673.0 778.1V796.0M674.0 779.4V790.6M675.0 778.7V791.1M676.0 776.0V791.3M677.0 776.1V791.8M678.0 777.9V796.0M679.0 778.0V786.8M680.0 779.6V787.6M681.0 778.2V793.4M682.0 776.5V788.6M683.0 778.6V790.2M684.0 780.8V794.3M685.0 774.0V798.7M686.0 775.7V793.4M687.0 776.8V789.2M688.0 776.7V793.4M689.0 774.6V791.2M690.0 778.1V791.5M691.0 776.8V799.3M692.0 776.4V799.3M693.0 774.7V794.2M694.0 774.7V791.4M695.0 775.1V789.2M696.0 776.0V792.0M697.0 776.0V794.1M698.0 778.0V789.5M699.0 775.9V791.4M700.0 775.9V787.3M701.0 778.3V787.4M702.0 779.1V789.8M703.0 778.9V794.4M704.0 778.5V792.0M705.0 778.6V789.0M706.0 776.6V794.0M707.0 780.3V790.5M708.0 778.9V788.9M709.0 778.0V793.3M710.0 778.7V791.8M711.0 775.4V788.6M712.0 779.3V789.6M713.0 776.7V791.2M714.0 778.4V795.1M715.0 774.6V789.6M716.0 774.6V791.9M717.0 780.0V792.5M718.0 779.5V798.0M719.0 775.5V793.7M720.0 777.1V791.7M721.0 779.0V786.8M722.0 776.7V791.2M723.0 778.2V788.5M724.0 777.5V803.5M725.0 777.2V787.4M726.0 775.1V788.1M727.0 777.7V788.2M728.0 778.5V793.6M729.0 776.8V793.5M730.0 777.2V805.0M731.0 773.3V791.9M732.0 778.2V793.3M733.0 776.4V793.0M734.0 775.3V795.4M735.0 775.7V800.6M736.0 774.5V792.4M737.0 778.6V795.2M738.0 778.5V791.9M739.0 779.3V787.2M740.0 772.5V795.5M741.0 778.1V791.8M742.0 774.5V798.9M743.0 774.0V798.9M744.0 776.6V788.0M745.0 778.7V795.3M746.0 777.8V789.8M747.0 777.6V789.9M748.0 777.2V790.2M749.0 777.2V790.8M750.0 780.4V792.1M751.0 776.9V793.6M752.0 774.3V799.2M753.0 779.5V791.3M754.0 776.7V789.9M755.0 773.0V789.2M756.0 773.0V788.5M757.0 772.5V792.4M758.0 782.4V795.2M759.0 777.4V790.9M760.0 778.9V789.9M761.0 778.9V792.5M762.0 774.2V789.4M763.0 778.5V787.8M764.0 776.3V787.7M765.0 778.4V792.9M766.0 777.1V788.1M767.0 776.3V786.0M768.0 778.2V793.6M769.0 776.8V793.6M770.0 773.1V789.8M771.0 773.1V787.9M772.0 775.8V793.8M773.0 775.1V788.6M774.0 773.5V787.0M775.0 777.2V796.0M776.0 776.5V796.0M777.0 778.9V804.6M778.0 776.8V788.2M779.0 777.2V790.4M780.0 775.9V787.7M781.0 775.6V789.7M782.0 779.6V795.4M783.0 781.2V792.8M784.0 776.4V790.1M785.0 778.2V792.4M786.0 775.8V790.0M787.0 779.0V791.1M788.0 775.6V791.9M789.0 775.6V791.7M790.0 779.2V791.7M791.0 775.5V788.7M792.0 776.3V803.0M793.0 775.2V792.1M794.0 778.6V795.9M795.0 777.3V797.5M796.0 775.9V792.5M797.0 780.1V792.6M798.0 779.7V788.6M799.0 781.2V790.0M800.0 775.3V789.3M801.0 775.4V788.4M802.0 778.1V791.3M803.0 773.7V791.1M804.0 778.4V796.7M805.0 774.1V790.3M806.0 778.1V791.6M807.0 778.0V797.9M808.0 780.1V788.1M809.0 777.3V792.2M810.0 779.0V792.2M811.0 774.8V790.1M812.0 779.5V788.9M813.0 772.8V790.6M814.0 779.6V787.3M815.0 776.1V788.0M816.0 778.7V792.1M817.0 775.6V791.1M818.0 775.4V784.5M819.0 777.4V791.0M820.0 777.2V790.9M821.0 776.4V793.6M822.0 775.9V786.3M823.0 777.6V792.7M824.0 778.4V789.5M825.0 778.3V787.9M826.0 776.6V787.9M827.0 777.6V794.7M828.0 776.8V790.5M829.0 779.8V791.2M830.0 777.3V794.2M831.0 780.1V790.9M832.0 777.1V796.4M833.0 778.8V792.5M834.0 774.2V795.4M835.0 779.2V786.1M836.0 775.7V787.4M837.0 775.5V791.4M838.0 777.5V791.4M839.0 778.5V793.9M840.0 774.0V790.8M841.0 779.7V791.8M842.0 777.5V787.3M843.0 775.9V790.7M844.0 775.9V790.6M845.0 779.2V787.6M846.0 780.1V789.7M847.0 778.2V791.4M848.0 779.5V788.3M849.0 775.2V795.8M850.0 779.9V790.5M851.0 776.9V799.1M852.0 778.3V794.8M853.0 778.8V795.0M854.0 775.5V791.4M855.0 775.5V793.8M856.0 775.2V788.4M857.0 779.0V804.0M858.0 776.3V790.7M859.0 780.0V790.4M860.0 777.7V791.5M861.0 779.4V788.8M862.0 778.3V792.1M863.0 775.9V786.9M864.0 776.1V795.0M865.0 777.4V791.4M866.0 775.3V789.9M867.0 778.4V798.1M868.0 778.4V795.3M869.0 776.7V791.2M870.0 780.8V790.9M871.0 776.2V793.4M872.0 776.2V788.6M873.0 773.9V789.2M874.0 773.9V791.4M875.0 781.8V788.3M876.0 778.4V791.9M877.0 776.8V786.2M878.0 776.8V790.9M879.0 777.5V788.5M880.0 772.2V794.1M881.0 776.2V790.5M882.0 778.2V791.1M883.0 776.1V795.3M884.0 777.3V790.4M885.0 778.3V790.9M886.0 778.1V793.3M887.0 775.3V804.8M888.0 778.4V794.0M889.0 779.4V791.9M890.0 780.1V791.9M891.0 779.5V794.1M892.0 779.5V794.7M893.0 777.8V791.8M894.0 777.3V785.7M895.0 776.9V791.9M896.0 776.2V784.6M897.0 780.7V795.6M898.0 777.7V793.7M899.0 778.9V793.0M900.0 780.0V793.0M901.0 775.1V795.3M902.0 779.1V792.6M903.0 779.8V792.3M904.0 773.5V790.4M905.0 774.2V787.1M906.0 776.8V790.6M907.0 777.4V790.6M908.0 776.8V797.3M909.0 776.2V796.7M910.0 779.2V792.8M911.0 775.5V789.7M912.0 774.9V788.3M913.0 778.9V789.1M914.0 778.4V790.4M915.0 776.9V791.2M916.0 776.4V791.1M917.0 778.0V801.2M918.0 781.0V788.9M919.0 780.4V794.7M920.0 779.3V790.2M921.0 777.4V791.4M922.0 776.5V792.7M923.0 777.0V790.1M924.0 780.3V791.4M925.0 778.7V789.3M926.0 775.6V791.7M927.0 776.5V796.4M928.0 775.9V796.9M929.0 776.3V790.2M930.0 778.9V790.5M931.0 778.8V791.9M932.0 775.0V791.1M933.0 775.5V789.7M934.0 772.7V793.3M935.0 776.3V786.8M936.0 776.3V795.4M937.0 775.0V791.3M938.0 777.6V799.0M939.0 777.6V788.4M940.0 776.9V792.5M941.0 778.6V789.8M942.0 776.9V789.8M943.0 776.8V794.3M944.0 771.8V787.7M945.0 777.3V792.4M946.0 778.6V793.2M947.0 777.2V794.1M948.0 775.1V792.6M949.0 777.5V791.2M950.0 779.0V791.2M951.0 777.3V789.7M952.0 777.3V787.9M953.0 779.4V801.3M954.0 777.4V795.9M955.0 781.3V792.2M956.0 776.2V790.6M957.0 775.4V792.5M958.0 774.4V792.5M959.0 776.8V790.0M960.0 778.5V793.1M961.0 779.3V789.0M962.0 779.8V792.2M963.0 778.8V790.0M964.0 775.6V789.8M965.0 778.1V795.2M966.0 778.6V789.7M967.0 776.2V789.3M968.0 778.1V796.2M969.0 774.8V789.5M970.0 778.8V792.4M971.0 776.4V793.2M972.0 779.5V800.7M973.0 774.2V799.2M974.0 777.8V799.2M975.0 777.5V786.7M976.0 779.0V789.6M977.0 778.1V789.7M978.0 775.4V788.9M979.0 776.7V798.8M980.0 778.6V791.5M981.0 774.1V792.4M982.0 779.7V793.8M983.0 776.0V792.3M984.0 775.0V793.4M985.0 776.7V790.3M986.0 775.6V797.2M987.0 775.6V793.1M988.0 780.2V799.7M989.0 774.6V791.4M990.0 778.2V787.8M991.0 778.0V789.7M992.0 780.1V790.8M993.0 775.9V794.8M994.0 778.0V791.7M995.0 778.3V794.2M996.0 775.0V791.3M997.0 775.3V791.3M998.0 778.1V790.9M999.0 777.7V794.7M1000.0 780.0V792.2M1001.0 777.5V803.7M1002.0 778.6V795.8M1003.0 777.1V790.2M1004.0 778.5V789.1M1005.0 778.4V794.8M1006.0 777.3V797.2M1007.0 778.8V797.2M1008.0 778.2V792.2M1009.0 777.4V796.2M1010.0 777.1V792.0M1011.0 775.5V789.7M1012.0 777.9V798.8M1013.0 778.0V788.0M1014.0 774.4V787.9M1015.0 776.4V791.9M1016.0 777.0V795.8M1017.0 776.5V795.8M1018.0 775.3V793.7M1019.0 776.0V789.1M1020.0 776.8V794.9M1021.0 774.1V787.7M1022.0 780.1V791.9M1023.0 774.7V787.8M1024.0 777.7V787.9M1025.0 778.1V790.5M1026.0 780.1V804.2M1027.0 778.7V801.7M1028.0 779.4V793.8M1029.0 780.6V791.2M1030.0 775.1V797.3M1031.0 775.4V791.1M1032.0 778.2V789.5M1033.0 777.9V792.0M1034.0 777.1V787.9M1035.0 776.0V796.4M1036.0 773.8V793.4M1037.0 776.0V792.3M1038.0 776.0V798.7M1039.0 778.9V793.9M1040.0 779.2V791.9M1041.0 775.8V791.2M1042.0 777.6V799.5M1043.0 777.7V788.7M1044.0 781.4V798.1M1045.0 776.7V795.2M1046.0 774.9V795.0M1047.0 775.7V792.0M1048.0 777.6V789.2M1049.0 775.1V789.3M1050.0 775.1V787.3M1051.0 777.0V789.5M1052.0 779.1V797.6M1053.0 771.7V788.7M1054.0 776.7V790.6M1055.0 775.7V790.4M1056.0 776.8V789.4M1057.0 777.4V788.3M1058.0 779.4V793.4M1059.0 777.1V785.1M1060.0 777.1V792.0M1061.0 779.2V794.7M1062.0 773.8V794.7M1063.0 779.2V793.0M1064.0 777.6V795.2M1065.0 777.8V790.1M1066.0 777.3V792.1M1067.0 778.4V793.7M1068.0 776.4V789.3M1069.0 776.9V789.9M1070.0 780.9V788.4M1071.0 778.9V788.6M1072.0 773.8V791.2M1073.0 775.3V793.3M1074.0 775.3V792.8M1075.0 776.3V788.0M1076.0 781.1V789.0M1077.0 776.9V788.7M1078.0 776.3V797.5M1079.0 778.6V789.8M1080.0 776.7V798.1M1081.0 774.7V791.0M1082.0 777.8V785.2M1083.0 778.3V792.6M1084.0 777.2V793.2M1085.0 779.2V790.0M1086.0 773.6V792.3M1087.0 777.5V788.1M1088.0 778.2V795.6M1089.0 780.2V792.2M1090.0 777.1V791.2M1091.0 776.4V789.7M1092.0 778.1V792.8M1093.0 775.1V788.4M1094.0 778.2V793.3M1095.0 774.7V791.5M1096.0 777.8V801.8M1097.0 775.7V796.2M1098.0 779.0V788.4M1099.0 778.8V793.6M1100.0 773.0V789.5M1101.0 773.6V793.7M1102.0 774.8V791.5M1103.0 779.2V799.3M1104.0 776.2V791.5M1105.0 779.1V790.7M1106.0 776.5V794.0M1107.0 776.5V798.3M1108.0 776.9V791.9M1109.0 772.6V790.2M1110.0 775.9V793.5M1111.0 775.8V792.7M1112.0 777.0V790.2M1113.0 773.9V786.3M1114.0 775.5V797.4M1115.0 776.4V787.9M1116.0 778.9V790.1M1117.0 776.8V791.2M1118.0 780.6V795.6M1119.0 775.3V792.1M1120.0 777.9V789.7M1121.0 776.2V790.1M1122.0 778.9V789.3M1123.0 778.9V794.7M1124.0 779.3V789.0M1125.0 774.9V789.0M1126.0 777.1V789.8M1127.0 777.9V797.0M1128.0 772.5V791.9M1129.0 777.5V792.9M1130.0 778.4V790.2M1131.0 774.0V793.1M1132.0 775.5V802.8M1133.0 776.6V796.2M1134.0 777.5V794.9M1135.0 776.5V790.5M1136.0 777.6V793.1M1137.0 778.8V792.6M1138.0 777.4V795.1M1139.0 775.8V788.4M1140.0 777.9V789.6M1141.0 780.4V791.2M1142.0 777.5V791.8M1143.0 778.7V791.8M1144.0 778.7V791.9M1145.0 778.9V787.8M1146.0 776.7V795.0M1147.0 777.7V795.0M1148.0 773.7V797.4M1149.0 776.4V797.4M1150.0 775.9V793.1M1151.0 778.4V794.9M1152.0 776.4V790.5M1153.0 777.7V787.0M1154.0 777.6V789.6M1155.0 780.3V794.3M1156.0 776.3V791.5M1157.0 777.3V791.5M1158.0 777.3V797.9M1159.0 776.5V792.2M1160.0 777.5V789.4M1161.0 778.4V794.7M1162.0 775.6V796.4M1163.0 775.7V797.1M1164.0 779.6V791.6M1165.0 779.9V789.9M1166.0 776.2V789.9M1167.0 774.9V789.3M1168.0 776.9V791.9M1169.0 776.2V788.5M1170.0 777.4V788.5M1171.0 780.5V801.5M1172.0 774.9V792.5M1173.0 778.7V793.5M1174.0 781.0V793.2M1175.0 772.5V786.3M1176.0 775.0V794.4M1177.0 776.4V787.6M1178.0 775.0V792.7M1179.0 777.9V789.3M1180.0 777.9V790.4M1181.0 775.9V795.7M1182.0 775.9V791.2M1183.0 779.6V789.5M1184.0 780.4V792.3M1185.0 773.7V792.6M1186.0 779.7V789.8M1187.0 778.3V786.7M1188.0 780.4V804.6M1189.0 774.9V793.3M1190.0 777.6V791.2M1191.0 777.2V798.5M1192.0 774.6V792.3M1193.0 778.1V789.3M1194.0 781.1V792.8M1195.0 780.5V794.8M1196.0 775.0V791.3M1197.0 775.0V792.5M1198.0 773.7V794.4M1199.0 777.2V788.4M1200.0 776.3V791.4M1201.0 775.2V796.7M1202.0 777.6V790.4M1203.0 779.4V790.4M1204.0 777.5V793.8M1205.0 777.4V787.7M1206.0 777.0V791.6M1207.0 775.8V800.7M1208.0 779.7V797.7M1209.0 774.4V790.0M1210.0 777.7V790.0M1211.0 780.3V788.9M1212.0 776.3V787.0M1213.0 775.3V786.1M1214.0 779.0V794.9M1215.0 776.7V791.9M1216.0 776.7V792.0M1217.0 776.9V792.0M1218.0 779.2V790.7M1219.0 778.8V792.7M1220.0 776.7V798.5M1221.0 777.2V788.6M1222.0 781.9V793.7M1223.0 778.3V794.0M1224.0 776.4V792.2M1225.0 781.0V793.7M1226.0 777.1V795.2M1227.0 773.6V795.2M1228.0 773.3V796.9M1229.0 778.2V789.5M1230.0 777.3V793.5M1231.0 779.0V791.2M1232.0 776.9V795.3M1233.0 777.3V794.2M1234.0 779.6V791.5M1235.0 778.4V789.0M1236.0 776.6V794.1M1237.0 779.1V792.6M1238.0 773.6V790.1M1239.0 775.7V793.1M1240.0 779.3V792.1M1241.0 776.4V793.0M1242.0 778.1V790.8M1243.0 778.7V791.1M1244.0 777.1V796.5M1245.0 771.7V789.6M1246.0 775.0V802.8M1247.0 776.8V802.8M1248.0 781.3V794.1M1249.0 778.6V795.2M1250.0 777.5V793.4M1251.0 770.9V794.1M1252.0 781.5V799.1M1253.0 777.4V793.2M1254.0 779.3V790.3M1255.0 779.2V791.9M1256.0 779.2V793.4M1257.0 776.5V795.4M1258.0 776.2V788.1M1259.0 781.7V791.5M1260.0 773.7V788.3M1261.0 777.3V794.2M1262.0 778.7V788.8M1263.0 778.0V790.3M1264.0 777.4V789.9M1265.0 780.7V790.1M1266.0 775.8V790.1M1267.0 776.9V789.1M1268.0 778.8V792.6M1269.0 776.5V795.9M1270.0 773.4V788.1M1271.0 778.8V798.0M1272.0 780.7V793.2M1273.0 778.4V788.9M1274.0 776.4V796.5M1275.0 772.8V790.9M1276.0 775.7V791.3M1277.0 776.2V790.6M1278.0 775.9V791.6M1279.0 776.5V788.2M1280.0 776.7V795.7M1281.0 778.5V795.7M1282.0 777.5V799.0M1283.0 779.2V787.6M1284.0 779.7V790.2M1285.0 777.7V790.1M1286.0 777.5V793.5M1287.0 777.0V792.2M1288.0 776.9V794.5M1289.0 776.9V795.3M1290.0 775.1V792.4M1291.0 777.6V790.7M1292.0 777.0V794.5M1293.0 774.4V792.0M1294.0 779.2V789.9M1295.0 781.8V790.7M1296.0 775.2V793.7M1297.0 777.4V793.7M1298.0 779.7V798.5M1299.0 775.0V789.9M1300.0 776.7V789.7M1301.0 778.2V789.8M1302.0 779.0V794.6M1303.0 770.5V790.7M1304.0 775.0V797.7M1305.0 778.0V797.7M1306.0 779.0V799.2M1307.0 775.9V792.2M1308.0 778.9V792.2M1309.0 778.0V789.7M1310.0 777.5V787.7M1311.0 775.9V788.1M1312.0 778.0V791.1M1313.0 776.8V791.6M1314.0 779.0V792.4M1315.0 777.3V790.1M1316.0 776.7V789.6M1317.0 775.1V795.2M1318.0 779.1V796.0M1319.0 776.7V789.9M1320.0 779.3V792.3M1321.0 777.0V790.8M1322.0 777.6V789.3M1323.0 780.3V795.1M1324.0 777.7V792.9M1325.0 776.6V789.7M1326.0 774.5V787.1M1327.0 777.9V787.9M1328.0 779.4V786.6M1329.0 779.6V791.1M1330.0 776.0V791.6M1331.0 776.0V797.7M1332.0 778.6V790.7M1333.0 776.1V787.0M1334.0 778.3V794.9M1335.0 776.8V793.6M1336.0 774.2V790.8M1337.0 776.0V790.2M1338.0 776.5V790.9M1339.0 771.3V793.5M1340.0 778.6V789.1M1341.0 779.0V787.9M1342.0 778.4V794.8M1343.0 777.7V796.1M1344.0 775.3V794.2M1345.0 776.3V790.7M1346.0 777.0V788.3M1347.0 776.2V790.9M1348.0 776.3V789.0M1349.0 777.1V792.9M1350.0 780.5V798.6M1351.0 775.2V798.6M1352.0 778.2V792.9M1353.0 780.2V792.9M1354.0 779.9V792.8M1355.0 775.4V792.8M1356.0 777.9V788.4M1357.0 774.8V794.4M1358.0 774.8V791.8M1359.0 780.1V793.4M1360.0 776.9V793.7M1361.0 778.1V788.0M1362.0 776.8V793.9M1363.0 776.5V793.9M1364.0 780.7V794.6M1365.0 777.8V791.5M1366.0 778.2V790.5M1367.0 778.2V789.4M1368.0 772.2V801.5M1369.0 775.8V794.1M1370.0 776.0V792.6M1371.0 777.5V795.6M1372.0 776.9V790.8M1373.0 775.2V786.4M1374.0 776.7V792.3M1375.0 780.8V789.5M1376.0 773.2V789.5M1377.0 776.9V791.7M1378.0 778.5V793.0M1379.0 778.5V789.4M1380.0 778.6V791.6M1381.0 778.0V791.3M1382.0 778.8V796.0M1383.0 778.4V788.9M1384.0 781.8V791.1M1385.0 775.6V797.4M1386.0 780.4V793.4M1387.0 779.4V799.6M1388.0 776.9V796.7M1389.0 779.1V788.5M1390.0 776.6V793.8M1391.0 778.2V790.9M1392.0 776.8V796.1M1393.0 776.5V789.4M1394.0 778.1V790.9M1395.0 777.6V790.1M1396.0 775.1V789.1M1397.0 773.7V791.0M1398.0 779.1V786.0M1399.0 781.2V794.5M1400.0 775.0V790.9M1401.0 776.9V795.5" stroke="#00d23c" stroke-width="1.15" fill="none"/><path d="M230.0 751.2V764.9M231.0 753.2V766.2M232.0 752.9V768.9M233.0 748.1V767.2M234.0 752.4V762.5M235.0 752.0V770.9M236.0 753.2V766.6M237.0 752.9V760.0M238.0 749.8V765.8M239.0 752.6V766.0M240.0 754.5V771.1M241.0 751.9V770.3M242.0 752.2V767.8M243.0 752.5V761.5M244.0 751.5V763.3M245.0 751.3V763.3M246.0 749.3V764.7M247.0 749.7V767.0M248.0 751.6V764.0M249.0 752.8V766.6M250.0 751.7V766.6M251.0 751.5V761.3M252.0 749.7V766.7M253.0 753.3V762.4M254.0 751.0V759.6M255.0 751.7V764.2M256.0 751.4V764.2M257.0 752.8V762.3M258.0 752.8V765.6M259.0 751.7V767.8M260.0 752.3V763.4M261.0 751.4V765.0M262.0 751.5V764.2M263.0 753.3V764.2M264.0 748.3V762.7M265.0 752.0V765.7M266.0 750.2V761.0M267.0 751.1V761.5M268.0 753.8V764.8M269.0 752.7V763.4M270.0 752.7V769.0M271.0 753.6V761.1M272.0 753.1V766.3M273.0 750.6V761.7M274.0 748.6V770.4M275.0 751.3V762.6M276.0 755.0V766.2M277.0 751.5V763.0M278.0 751.5V772.5M279.0 751.2V771.6M280.0 752.6V771.6M281.0 751.2V766.9M282.0 753.4V767.6M283.0 752.3V765.5M284.0 753.1V762.7M285.0 751.8V772.2M286.0 749.1V762.5M287.0 747.1V768.3M288.0 750.5V764.4M289.0 751.4V764.1M290.0 750.3V764.6M291.0 751.2V765.2M292.0 751.0V762.7M293.0 751.2V767.2M294.0 754.6V762.2M295.0 751.8V766.0M296.0 748.3V764.9M297.0 752.9V761.1M298.0 751.6V771.0M299.0 750.8V765.8M300.0 748.0V764.2M301.0 754.6V762.3M302.0 753.8V770.2M303.0 752.6V768.2M304.0 753.5V764.4M305.0 751.8V762.5M306.0 749.4V764.8M307.0 749.7V764.4M308.0 753.2V767.2M309.0 751.2V767.4M310.0 752.1V766.6M311.0 752.1V764.3M312.0 752.9V762.9M313.0 749.9V764.8M314.0 750.3V760.1M315.0 752.6V762.2M316.0 755.6V764.8M317.0 752.7V770.0M318.0 750.6V764.3M319.0 751.9V762.5M320.0 748.1V762.3M321.0 748.7V774.6M322.0 754.2V774.6M323.0 752.3V761.9M324.0 751.8V769.4M325.0 752.4V767.3M326.0 755.7V771.0M327.0 753.9V764.9M328.0 751.0V768.4M329.0 751.0V761.2M330.0 748.5V765.1M331.0 753.5V775.0M332.0 749.3V761.2M333.0 748.8V763.0M334.0 751.0V766.7M335.0 752.4V771.7M336.0 750.3V764.7M337.0 753.5V763.6M338.0 750.7V764.6M339.0 752.4V762.9M340.0 752.1V767.4M341.0 748.7V764.3M342.0 752.5V764.3M343.0 751.8V771.5M344.0 747.9V762.0M345.0 747.9V765.3M346.0 751.2V764.9M347.0 754.6V763.3M348.0 752.8V766.8M349.0 752.2V766.2M350.0 753.5V764.1M351.0 752.4V763.6M352.0 754.5V767.3M353.0 753.8V763.2M354.0 751.4V767.5M355.0 749.3V761.8M356.0 751.7V764.9M357.0 751.7V771.2M358.0 751.1V768.8M359.0 750.0V764.9M360.0 751.3V761.0M361.0 752.1V763.8M362.0 756.0V766.4M363.0 748.7V763.1M364.0 749.8V760.1M365.0 753.1V763.0M366.0 751.3V766.5M367.0 753.5V768.5M368.0 750.2V762.9M369.0 753.2V761.4M370.0 750.9V765.8M371.0 752.0V765.6M372.0 751.5V762.5M373.0 748.0V764.0M374.0 752.5V765.3M375.0 747.0V762.1M376.0 749.1V765.2M377.0 753.0V764.4M378.0 753.2V764.5M379.0 751.1V763.3M380.0 752.0V773.0M381.0 752.3V773.0M382.0 749.4V762.0M383.0 748.6V765.2M384.0 753.9V764.4M385.0 751.7V764.3M386.0 747.1V763.2M387.0 749.7V765.0M388.0 745.8V767.3M389.0 753.0V760.4M390.0 751.8V762.1M391.0 752.5V770.8M392.0 750.8V769.1M393.0 752.6V759.1M394.0 751.2V770.5M395.0 751.2V770.5M396.0 749.2V769.7M397.0 750.4V764.2M398.0 751.8V765.9M399.0 751.0V766.9M400.0 749.4V764.5M401.0 750.0V763.0M402.0 752.8V766.3M403.0 752.7V772.3M404.0 752.6V767.5M405.0 752.4V766.0M406.0 748.2V762.6M407.0 754.7V765.4M408.0 754.6V763.2M409.0 749.2V763.0M410.0 749.3V763.5M411.0 750.9V765.7M412.0 751.4V767.0M413.0 748.2V764.5M414.0 748.2V762.5M415.0 749.8V763.2M416.0 752.2V769.5M417.0 748.2V762.5M418.0 749.4V763.8M419.0 752.7V766.1M420.0 749.9V762.7M421.0 752.0V765.3M422.0 748.4V762.0M423.0 755.4V766.6M424.0 749.7V762.6M425.0 749.7V766.7M426.0 752.3V761.3M427.0 746.8V765.6M428.0 746.3V767.4M429.0 751.6V761.6M430.0 752.2V764.5M431.0 749.9V771.6M432.0 752.0V763.3M433.0 752.3V764.5M434.0 752.1V760.2M435.0 751.6V767.8M436.0 753.1V763.7M437.0 749.8V768.8M438.0 747.9V765.7M439.0 751.0V768.3M440.0 753.8V764.2M441.0 752.5V770.0M442.0 750.6V764.5M443.0 751.4V766.2M444.0 750.2V767.7M445.0 752.2V772.1M446.0 754.5V761.8M447.0 747.6V763.0M448.0 752.4V767.5M449.0 751.8V768.1M450.0 747.6V769.1M451.0 752.3V762.5M452.0 751.7V766.7M453.0 753.9V766.1M454.0 753.7V765.8M455.0 753.3V764.5M456.0 753.9V765.8M457.0 753.1V771.5M458.0 748.2V763.0M459.0 751.7V760.8M460.0 750.6V762.5M461.0 751.8V766.0M462.0 750.6V768.1M463.0 751.6V763.8M464.0 748.5V773.9M465.0 751.8V773.9M466.0 752.8V773.2M467.0 750.7V763.2M468.0 751.0V761.7M469.0 751.5V769.3M470.0 751.5V769.3M471.0 753.9V763.3M472.0 754.5V762.3M473.0 751.0V768.1M474.0 754.0V762.0M475.0 751.4V768.7M476.0 749.4V767.9M477.0 752.5V769.9M478.0 750.8V766.4M479.0 747.5V763.1M480.0 752.6V761.7M481.0 748.9V764.8M482.0 752.9V762.1M483.0 751.6V761.5M484.0 750.8V766.6M485.0 752.8V758.2M486.0 751.7V766.5M487.0 754.1V762.7M488.0 752.8V762.7M489.0 751.2V764.2M490.0 754.1V764.4M491.0 749.4V762.1M492.0 753.2V766.7M493.0 751.6V762.3M494.0 749.9V768.7M495.0 748.1V770.0M496.0 752.6V762.3M497.0 752.3V765.5M498.0 751.3V766.1M499.0 749.6V769.3M500.0 753.1V771.0M501.0 753.4V762.6M502.0 751.1V764.5M503.0 750.4V761.9M504.0 749.8V765.1M505.0 752.3V768.1M506.0 751.4V765.6M507.0 751.9V761.8M508.0 753.0V769.1M509.0 752.9V768.4M510.0 752.1V765.4M511.0 753.3V765.7M512.0 754.9V763.7M513.0 749.3V766.4M514.0 753.8V762.1M515.0 750.8V763.9M516.0 751.3V760.7M517.0 751.5V765.0M518.0 747.2V764.3M519.0 752.7V767.1M520.0 755.7V766.3M521.0 752.1V762.1M522.0 753.7V763.0M523.0 752.9V768.4M524.0 755.1V763.2M525.0 752.6V772.8M526.0 750.0V762.7M527.0 747.4V761.9M528.0 754.5V763.4M529.0 750.8V764.3M530.0 749.9V765.9M531.0 754.1V765.9M532.0 753.0V764.1M533.0 749.3V762.9M534.0 751.7V764.6M535.0 751.4V764.0M536.0 754.9V762.6M537.0 752.2V767.4M538.0 750.1V767.6M539.0 752.3V763.4M540.0 748.9V764.1M541.0 747.8V764.1M542.0 750.8V762.1M543.0 749.5V763.1M544.0 753.9V762.0M545.0 751.9V763.0M546.0 747.8V763.4M547.0 751.9V763.8M548.0 750.8V764.2M549.0 751.6V770.4M550.0 752.3V764.2M551.0 749.9V762.4M552.0 750.5V765.5M553.0 753.3V768.0M554.0 751.4V765.3M555.0 754.1V764.0M556.0 749.7V765.0M557.0 751.2V765.0M558.0 754.1V764.0M559.0 751.5V766.9M560.0 749.4V763.6M561.0 752.6V767.2M562.0 754.1V763.1M563.0 751.2V764.9M564.0 751.2V763.7M565.0 751.4V762.9M566.0 754.6V766.6M567.0 755.0V766.5M568.0 749.0V763.1M569.0 753.2V762.5M570.0 751.4V762.2M571.0 750.4V760.4M572.0 751.2V775.4M573.0 751.5V763.8M574.0 751.4V764.7M575.0 750.3V760.2M576.0 749.2V764.8M577.0 751.5V769.2M578.0 752.0V766.3M579.0 750.8V765.2M580.0 752.3V765.7M581.0 754.3V762.0M582.0 749.7V766.8M583.0 751.8V768.0M584.0 756.2V763.8M585.0 746.9V760.9M586.0 750.3V765.5M587.0 752.9V764.8M588.0 752.2V767.2M589.0 752.9V768.0M590.0 748.7V762.0M591.0 753.4V772.2M592.0 750.7V762.8M593.0 750.7V763.5M594.0 748.5V760.9M595.0 746.7V765.7M596.0 752.7V761.9M597.0 750.1V763.3M598.0 752.8V761.9M599.0 751.8V764.9M600.0 751.6V770.3M601.0 751.1V773.2M602.0 752.2V762.0M603.0 749.7V765.6M604.0 749.5V770.4M605.0 748.5V767.1M606.0 755.1V763.8M607.0 752.3V769.6M608.0 751.2V761.3M609.0 748.1V767.6M610.0 752.2V768.1M611.0 746.8V768.1M612.0 750.0V763.2M613.0 751.4V764.6M614.0 748.2V766.5M615.0 753.6V768.2M616.0 754.1V768.5M617.0 747.8V763.6M618.0 750.9V763.6M619.0 751.7V762.4M620.0 751.7V762.0M621.0 750.0V765.3M622.0 748.2V764.9M623.0 751.4V762.5M624.0 748.8V766.3M625.0 748.8V763.7M626.0 755.5V774.2M627.0 751.1V765.2M628.0 752.7V768.1M629.0 754.6V768.6M630.0 752.6V764.9M631.0 751.9V770.9M632.0 753.0V770.6M633.0 750.9V770.6M634.0 753.4V772.9M635.0 748.5V772.9M636.0 753.1V762.4M637.0 751.3V764.3M638.0 749.5V772.1M639.0 752.8V765.7M640.0 750.6V772.0M641.0 750.0V763.9M642.0 750.0V765.3M643.0 748.4V770.7M644.0 748.4V769.7M645.0 751.3V760.5M646.0 751.6V764.5M647.0 752.6V766.4M648.0 752.9V763.3M649.0 753.7V766.6M650.0 751.6V762.8M651.0 753.3V764.2M652.0 752.2V761.0M653.0 750.9V767.6M654.0 749.8V762.5M655.0 750.0V763.5M656.0 751.6V768.6M657.0 752.6V768.0M658.0 752.0V763.9M659.0 754.2V764.3M660.0 749.5V763.9M661.0 748.2V769.4M662.0 751.8V770.5M663.0 753.5V768.7M664.0 749.6V765.9M665.0 748.7V762.1M666.0 752.6V766.1M667.0 751.8V767.6M668.0 753.5V765.1M669.0 744.9V764.7M670.0 748.2V762.6M671.0 752.3V766.4M672.0 752.3V764.0M673.0 755.2V764.5M674.0 751.2V767.3M675.0 751.1V769.6M676.0 754.2V762.5M677.0 750.1V768.0M678.0 749.1V768.0M679.0 752.6V773.1M680.0 751.1V765.4M681.0 753.1V762.9M682.0 748.6V769.7M683.0 749.0V764.8M684.0 749.3V765.8M685.0 754.2V768.9M686.0 751.8V763.9M687.0 748.6V760.6M688.0 752.6V764.2M689.0 751.0V763.0M690.0 751.6V761.1M691.0 748.1V766.5M692.0 752.9V766.5M693.0 752.1V761.2M694.0 748.8V769.1M695.0 752.1V765.3M696.0 751.2V769.2M697.0 751.3V769.1M698.0 750.8V764.4M699.0 751.1V767.7M700.0 751.9V767.7M701.0 750.7V763.3M702.0 751.9V770.0M703.0 751.4V765.3M704.0 753.3V764.0M705.0 752.4V771.0M706.0 752.3V763.6M707.0 749.9V759.2M708.0 754.5V767.6M709.0 752.1V762.5M710.0 753.4V762.6M711.0 750.0V766.5M712.0 751.9V770.3M713.0 750.8V761.9M714.0 750.8V763.9M715.0 752.1V766.0M716.0 752.5V759.8M717.0 752.0V764.5M718.0 753.2V765.7M719.0 748.5V766.1M720.0 751.2V760.8M721.0 754.6V770.6M722.0 752.1V767.5M723.0 751.4V767.6M724.0 751.0V766.1M725.0 751.2V760.7M726.0 753.2V763.9M727.0 750.8V769.3M728.0 751.7V767.8M729.0 750.3V763.6M730.0 751.3V763.5M731.0 749.4V764.3M732.0 749.7V763.8M733.0 751.8V763.1M734.0 754.8V765.1M735.0 749.5V766.0M736.0 751.4V764.5M737.0 750.9V768.4M738.0 754.5V765.5M739.0 752.0V766.2M740.0 747.1V766.0M741.0 753.1V768.7M742.0 751.5V766.0M743.0 753.4V764.9M744.0 752.1V764.4M745.0 748.3V763.7M746.0 753.9V762.0M747.0 748.7V762.9M748.0 750.8V766.9M749.0 752.7V765.3M750.0 754.0V763.7M751.0 752.9V771.4M752.0 752.8V762.1M753.0 752.6V766.9M754.0 752.7V768.4M755.0 749.8V769.0M756.0 748.7V763.6M757.0 750.7V762.3M758.0 752.2V768.0M759.0 750.3V760.6M760.0 752.2V766.2M761.0 748.4V763.3M762.0 750.3V764.5M763.0 751.6V768.0M764.0 748.1V767.9M765.0 752.2V764.9M766.0 751.5V767.2M767.0 750.3V767.5M768.0 750.6V765.0M769.0 751.4V764.0M770.0 752.5V766.2M771.0 753.5V764.2M772.0 750.6V762.8M773.0 750.6V760.9M774.0 751.9V766.5M775.0 753.1V766.2M776.0 750.7V763.1M777.0 751.6V767.4M778.0 748.9V772.2M779.0 753.3V773.4M780.0 752.3V765.8M781.0 754.8V765.5M782.0 749.4V767.4M783.0 750.0V776.1M784.0 748.7V767.8M785.0 749.5V762.9M786.0 752.6V765.6M787.0 752.0V766.3M788.0 752.8V766.5M789.0 750.6V766.5M790.0 755.5V766.4M791.0 752.3V764.8M792.0 753.7V763.7M793.0 753.4V767.3M794.0 750.5V763.8M795.0 751.9V764.8M796.0 752.9V762.9M797.0 749.0V763.3M798.0 751.3V763.1M799.0 751.3V760.9M800.0 753.4V764.6M801.0 754.3V764.6M802.0 752.1V767.5M803.0 751.7V770.1M804.0 752.1V769.4M805.0 750.2V761.6M806.0 752.5V765.4M807.0 752.2V766.7M808.0 752.7V767.0M809.0 751.4V761.3M810.0 753.0V766.1M811.0 750.8V762.0M812.0 750.9V768.6M813.0 750.6V762.4M814.0 750.9V764.6M815.0 752.8V763.8M816.0 751.9V762.5M817.0 752.5V761.2M818.0 747.7V763.0M819.0 751.0V769.5M820.0 747.6V763.9M821.0 754.7V768.1M822.0 750.9V768.3M823.0 750.3V765.9M824.0 749.4V765.9M825.0 749.8V763.7M826.0 749.8V761.5M827.0 751.3V765.0M828.0 753.9V767.0M829.0 754.0V762.6M830.0 752.5V772.8M831.0 756.1V772.8M832.0 754.6V762.5M833.0 753.1V762.2M834.0 750.7V765.0M835.0 752.2V764.2M836.0 751.3V768.0M837.0 750.7V764.7M838.0 749.5V767.6M839.0 753.9V764.0M840.0 749.3V762.6M841.0 747.2V763.3M842.0 747.2V765.7M843.0 749.0V766.4M844.0 750.3V769.3M845.0 750.6V765.7M846.0 751.5V763.8M847.0 750.9V763.0M848.0 752.3V772.8M849.0 753.9V762.2M850.0 751.2V764.3M851.0 750.8V766.7M852.0 751.7V764.7M853.0 753.2V763.0M854.0 750.4V768.0M855.0 749.6V765.4M856.0 750.4V765.4M857.0 751.6V770.7M858.0 750.1V766.0M859.0 750.6V764.6M860.0 750.6V762.1M861.0 754.1V765.7M862.0 753.6V767.8M863.0 752.3V766.5M864.0 751.0V763.1M865.0 751.0V762.4M866.0 752.2V764.2M867.0 751.6V766.3M868.0 752.9V763.3M869.0 753.2V763.3M870.0 749.8V762.5M871.0 752.1V762.8M872.0 753.2V766.2M873.0 754.2V765.4M874.0 749.3V766.8M875.0 752.8V760.4M876.0 749.8V763.1M877.0 754.4V764.9M878.0 754.4V766.4M879.0 749.7V761.4M880.0 752.0V770.7M881.0 748.3V771.0M882.0 748.3V765.1M883.0 753.8V765.0M884.0 752.3V776.5M885.0 752.3V761.5M886.0 747.3V764.1M887.0 750.7V768.9M888.0 752.2V767.3M889.0 752.4V760.2M890.0 753.0V764.7M891.0 751.8V767.2M892.0 751.6V768.7M893.0 747.0V768.1M894.0 748.3V768.1M895.0 750.9V763.7M896.0 753.0V768.9M897.0 752.3V764.0M898.0 749.4V766.7M899.0 749.4V762.4M900.0 749.0V763.4M901.0 751.4V764.4M902.0 750.2V763.3M903.0 750.7V762.6M904.0 755.6V767.1M905.0 752.7V770.0M906.0 753.0V769.3M907.0 748.2V762.8M908.0 753.6V761.9M909.0 750.2V762.7M910.0 754.5V767.1M911.0 751.1V766.7M912.0 751.6V760.7M913.0 748.9V767.8M914.0 751.7V764.5M915.0 750.3V767.6M916.0 753.8V764.9M917.0 753.5V764.8M918.0 752.0V762.5M919.0 751.5V761.8M920.0 752.2V765.2M921.0 750.0V762.0M922.0 751.8V764.9M923.0 750.6V764.8M924.0 752.6V762.7M925.0 749.3V764.4M926.0 751.1V765.5M927.0 755.3V765.3M928.0 754.8V763.3M929.0 753.8V770.4M930.0 753.4V763.1M931.0 754.6V766.8M932.0 752.1V763.1M933.0 750.1V770.3M934.0 754.1V767.6M935.0 751.2V762.6M936.0 749.4V762.6M937.0 750.7V763.0M938.0 749.7V767.1M939.0 749.7V763.7M940.0 753.0V768.8M941.0 753.0V771.0M942.0 751.9V763.9M943.0 748.7V763.9M944.0 751.1V761.3M945.0 751.2V765.9M946.0 750.6V766.5M947.0 750.8V770.7M948.0 750.4V767.8M949.0 752.5V765.4M950.0 751.5V768.9M951.0 752.4V763.7M952.0 752.7V764.9M953.0 750.0V764.9M954.0 750.0V765.6M955.0 749.6V763.5M956.0 751.8V762.9M957.0 748.9V765.6M958.0 750.1V765.3M959.0 754.3V766.8M960.0 756.5V768.9M961.0 751.8V764.1M962.0 750.5V776.2M963.0 749.4V765.4M964.0 752.0V760.0M965.0 752.0V764.2M966.0 752.0V766.7M967.0 753.3V766.9M968.0 754.0V765.2M969.0 750.8V764.5M970.0 750.2V763.3M971.0 752.4V762.7M972.0 750.5V769.1M973.0 753.9V764.8M974.0 751.4V766.7M975.0 752.0V764.5M976.0 753.0V761.8M977.0 752.8V767.6M978.0 751.6V764.1M979.0 751.1V766.6M980.0 753.4V774.3M981.0 751.8V763.5M982.0 751.4V764.7M983.0 751.9V762.2M984.0 754.0V760.3M985.0 753.1V761.4M986.0 752.4V760.8M987.0 752.2V764.8M988.0 750.1V764.3M989.0 752.5V764.1M990.0 749.8V762.9M991.0 754.8V764.4M992.0 751.8V770.6M993.0 753.5V763.8M994.0 752.0V763.6M995.0 753.2V767.9M996.0 752.3V766.3M997.0 750.7V769.6M998.0 752.7V765.0M999.0 753.5V765.0M1000.0 751.1V777.9M1001.0 751.4V765.8M1002.0 750.4V770.0M1003.0 753.3V766.7M1004.0 752.0V764.7M1005.0 753.4V766.7M1006.0 746.4V766.2M1007.0 752.5V763.7M1008.0 752.6V767.5M1009.0 749.7V760.8M1010.0 752.0V763.0M1011.0 752.8V765.7M1012.0 753.6V765.5M1013.0 748.4V768.1M1014.0 750.7V762.0M1015.0 749.5V764.3M1016.0 752.7V764.0M1017.0 752.0V765.8M1018.0 751.1V770.0M1019.0 748.0V768.1M1020.0 750.4V766.5M1021.0 751.1V766.2M1022.0 752.2V769.7M1023.0 749.8V764.1M1024.0 746.9V761.8M1025.0 751.6V763.1M1026.0 751.0V764.4M1027.0 754.0V763.6M1028.0 751.8V763.3M1029.0 749.8V767.5M1030.0 746.1V767.5M1031.0 750.8V766.9M1032.0 748.8V771.4M1033.0 749.1V761.7M1034.0 753.5V770.2M1035.0 752.8V766.4M1036.0 751.7V768.1M1037.0 752.3V763.6M1038.0 752.9V765.1M1039.0 748.9V765.3M1040.0 752.5V764.6M1041.0 752.1V765.9M1042.0 750.4V762.4M1043.0 746.7V772.6M1044.0 754.1V761.6M1045.0 749.3V761.6M1046.0 749.3V761.0M1047.0 751.6V771.1M1048.0 753.2V763.8M1049.0 753.3V774.5M1050.0 752.4V766.1M1051.0 751.3V766.1M1052.0 750.0V768.4M1053.0 750.5V764.2M1054.0 750.5V766.5M1055.0 749.9V762.9M1056.0 749.6V763.9M1057.0 749.3V763.5M1058.0 751.3V761.3M1059.0 752.8V763.4M1060.0 751.0V763.1M1061.0 754.2V764.0M1062.0 755.7V775.4M1063.0 750.2V765.3M1064.0 753.2V761.5M1065.0 753.6V761.5M1066.0 751.3V764.9M1067.0 754.3V764.3M1068.0 751.9V764.5M1069.0 751.9V765.4M1070.0 752.5V764.6M1071.0 752.5V764.1M1072.0 752.8V767.3M1073.0 754.1V766.5M1074.0 751.0V763.0M1075.0 748.5V757.6M1076.0 750.0V762.6M1077.0 751.5V774.4M1078.0 749.6V769.0M1079.0 751.1V761.8M1080.0 752.5V767.6M1081.0 751.8V761.1M1082.0 754.9V770.0M1083.0 750.7V766.9M1084.0 751.0V768.1M1085.0 753.0V767.5M1086.0 753.5V767.1M1087.0 752.0V772.3M1088.0 752.5V765.3M1089.0 752.0V761.0M1090.0 751.8V759.8M1091.0 751.0V763.8M1092.0 754.1V764.3M1093.0 751.4V764.3M1094.0 752.1V766.1M1095.0 749.0V759.1M1096.0 752.8V766.5M1097.0 752.7V762.8M1098.0 750.9V767.8M1099.0 749.4V766.2M1100.0 753.9V761.9M1101.0 749.7V763.3M1102.0 751.7V770.7M1103.0 752.5V765.4M1104.0 753.0V767.3M1105.0 748.2V763.8M1106.0 751.7V767.1M1107.0 750.0V762.9M1108.0 753.0V767.8M1109.0 752.4V766.1M1110.0 749.3V767.6M1111.0 751.0V765.3M1112.0 753.2V763.8M1113.0 753.1V772.1M1114.0 751.4V764.8M1115.0 751.2V761.8M1116.0 750.6V760.4M1117.0 753.7V761.8M1118.0 755.0V760.7M1119.0 754.6V767.8M1120.0 752.1V767.7M1121.0 750.3V769.1M1122.0 752.1V764.9M1123.0 752.8V765.7M1124.0 754.7V765.0M1125.0 755.7V764.8M1126.0 748.8V764.8M1127.0 753.4V768.5M1128.0 747.8V765.1M1129.0 754.8V766.0M1130.0 754.4V762.7M1131.0 751.9V767.7M1132.0 752.6V772.7M1133.0 752.1V767.4M1134.0 752.8V771.2M1135.0 749.5V766.7M1136.0 749.5V778.3M1137.0 749.6V766.4M1138.0 752.4V766.4M1139.0 750.7V764.8M1140.0 753.4V766.2M1141.0 753.0V760.9M1142.0 752.5V763.8M1143.0 750.9V769.7M1144.0 750.2V764.5M1145.0 752.8V764.8M1146.0 747.7V769.0M1147.0 747.7V770.1M1148.0 752.8V767.3M1149.0 753.3V775.3M1150.0 750.4V765.0M1151.0 752.1V763.0M1152.0 750.1V767.8M1153.0 751.7V762.1M1154.0 751.7V767.6M1155.0 752.4V766.7M1156.0 751.5V764.9M1157.0 754.6V760.7M1158.0 753.0V764.6M1159.0 751.4V768.5M1160.0 752.3V764.1M1161.0 752.2V765.5M1162.0 748.8V763.7M1163.0 754.1V772.2M1164.0 753.1V762.7M1165.0 751.5V765.5M1166.0 750.7V767.0M1167.0 754.6V762.0M1168.0 747.2V761.7M1169.0 751.5V771.6M1170.0 753.1V766.7M1171.0 746.6V760.5M1172.0 751.0V769.2M1173.0 750.7V766.9M1174.0 752.4V764.8M1175.0 750.7V765.5M1176.0 752.4V767.1M1177.0 750.1V767.3M1178.0 751.2V766.8M1179.0 753.9V766.8M1180.0 748.4V766.6M1181.0 749.3V768.6M1182.0 753.3V764.4M1183.0 752.0V764.3M1184.0 753.2V764.3M1185.0 754.1V768.7M1186.0 752.6V763.8M1187.0 752.8V762.4M1188.0 752.5V769.1M1189.0 752.3V762.5M1190.0 753.3V763.3M1191.0 752.7V765.1M1192.0 753.8V763.0M1193.0 753.8V769.9M1194.0 751.8V769.0M1195.0 752.3V761.9M1196.0 749.1V771.2M1197.0 752.8V765.5M1198.0 750.3V765.4M1199.0 751.5V769.6M1200.0 752.5V763.5M1201.0 752.5V762.5M1202.0 750.3V763.1M1203.0 754.6V762.4M1204.0 750.2V770.8M1205.0 752.6V765.3M1206.0 748.6V761.1M1207.0 753.1V765.7M1208.0 751.9V762.9M1209.0 752.3V763.9M1210.0 753.2V767.4M1211.0 753.8V759.9M1212.0 754.7V764.6M1213.0 753.4V761.3M1214.0 751.9V766.7M1215.0 753.4V767.4M1216.0 749.7V762.2M1217.0 748.3V766.4M1218.0 749.9V761.3M1219.0 753.5V763.6M1220.0 751.8V769.4M1221.0 752.4V763.6M1222.0 753.4V763.2M1223.0 750.9V769.4M1224.0 752.5V764.9M1225.0 752.0V762.5M1226.0 747.4V769.0M1227.0 753.4V769.5M1228.0 750.0V769.1M1229.0 751.7V764.1M1230.0 752.7V761.8M1231.0 747.6V772.8M1232.0 750.5V761.8M1233.0 748.3V768.0M1234.0 750.9V768.0M1235.0 748.5V767.4M1236.0 750.1V761.4M1237.0 751.6V766.2M1238.0 748.5V764.8M1239.0 748.5V761.9M1240.0 753.9V765.5M1241.0 753.4V771.2M1242.0 752.9V762.5M1243.0 748.1V773.9M1244.0 754.3V765.1M1245.0 753.3V768.1M1246.0 754.5V764.0M1247.0 753.6V764.2M1248.0 752.0V765.8M1249.0 756.3V765.2M1250.0 752.2V764.4M1251.0 754.8V764.5M1252.0 753.8V762.5M1253.0 749.9V764.0M1254.0 752.3V760.2M1255.0 750.3V767.9M1256.0 753.9V762.9M1257.0 749.5V761.7M1258.0 754.4V766.3M1259.0 750.2V768.2M1260.0 754.6V768.7M1261.0 753.7V766.4M1262.0 751.4V763.7M1263.0 754.9V764.9M1264.0 751.0V763.4M1265.0 751.0V768.9M1266.0 751.6V761.9M1267.0 753.8V765.3M1268.0 750.7V762.0M1269.0 756.0V765.8M1270.0 752.6V762.1M1271.0 749.8V763.2M1272.0 751.5V760.1M1273.0 755.3V763.1M1274.0 753.4V766.5M1275.0 751.9V768.9M1276.0 752.0V760.6M1277.0 750.7V767.8M1278.0 750.3V764.9M1279.0 749.2V770.6M1280.0 753.5V763.6M1281.0 751.3V764.1M1282.0 750.2V759.9M1283.0 750.2V775.4M1284.0 752.7V773.5M1285.0 753.4V765.4M1286.0 753.7V762.2M1287.0 751.5V761.7M1288.0 749.5V763.3M1289.0 752.2V763.3M1290.0 751.7V767.4M1291.0 752.2V767.4M1292.0 754.5V765.9M1293.0 749.1V762.6M1294.0 752.2V770.3M1295.0 752.5V764.1M1296.0 753.5V764.4M1297.0 753.2V766.6M1298.0 748.4V763.2M1299.0 753.5V766.9M1300.0 752.6V769.2M1301.0 754.6V763.4M1302.0 751.9V768.5M1303.0 751.6V760.3M1304.0 750.5V764.5M1305.0 750.6V763.0M1306.0 750.5V763.1M1307.0 748.0V762.8M1308.0 747.9V763.7M1309.0 747.9V768.6M1310.0 748.7V769.2M1311.0 748.7V765.2M1312.0 755.2V767.2M1313.0 754.3V765.1M1314.0 753.2V762.3M1315.0 753.2V767.3M1316.0 753.6V763.7M1317.0 754.6V769.3M1318.0 752.0V775.6M1319.0 752.3V775.3M1320.0 750.0V770.4M1321.0 751.7V769.6M1322.0 751.7V762.3M1323.0 750.6V762.1M1324.0 750.1V758.6M1325.0 750.9V765.3M1326.0 753.3V762.5M1327.0 747.7V764.6M1328.0 753.3V766.0M1329.0 750.6V766.7M1330.0 752.9V764.2M1331.0 754.2V767.6M1332.0 750.7V763.3M1333.0 751.2V767.5M1334.0 750.3V766.5M1335.0 752.2V762.6M1336.0 752.9V760.5M1337.0 750.1V764.7M1338.0 753.2V763.6M1339.0 752.2V767.5M1340.0 748.1V766.1M1341.0 752.7V764.9M1342.0 751.5V765.1M1343.0 748.9V759.6M1344.0 750.0V767.3M1345.0 749.1V767.3M1346.0 750.4V765.2M1347.0 753.1V769.2M1348.0 752.4V767.6M1349.0 753.3V764.5M1350.0 754.4V765.8M1351.0 750.2V768.4M1352.0 749.2V764.7M1353.0 752.1V776.5M1354.0 753.5V765.6M1355.0 752.7V762.8M1356.0 751.9V768.4M1357.0 752.7V771.4M1358.0 751.0V767.3M1359.0 751.6V761.6M1360.0 753.5V769.2M1361.0 749.2V764.3M1362.0 754.3V768.1M1363.0 754.0V769.3M1364.0 752.1V769.3M1365.0 752.0V772.8M1366.0 752.4V761.4M1367.0 752.1V764.4M1368.0 753.0V769.5M1369.0 753.1V765.4M1370.0 750.4V763.2M1371.0 754.1V769.1M1372.0 752.6V765.8M1373.0 751.8V768.9M1374.0 750.1V761.5M1375.0 754.1V766.3M1376.0 750.8V767.9M1377.0 753.3V762.4M1378.0 750.4V761.3M1379.0 749.3V762.4M1380.0 751.3V762.4M1381.0 752.2V762.0M1382.0 753.1V760.6M1383.0 750.4V762.3M1384.0 750.2V764.6M1385.0 746.7V768.3M1386.0 749.7V761.5M1387.0 749.5V767.7M1388.0 753.9V763.7M1389.0 752.0V764.4M1390.0 751.9V762.4M1391.0 750.3V763.0M1392.0 749.8V770.0M1393.0 751.1V764.1M1394.0 749.6V768.3M1395.0 753.1V770.1M1396.0 755.3V763.7M1397.0 753.4V761.3M1398.0 750.8V762.6M1399.0 751.6V769.5M1400.0 748.0V775.1M1401.0 753.0V761.6" stroke="#ad6ef2" stroke-width="1.15" fill="none"/><path d="M438.3 539.3V754.0769230769231" stroke="#ad6ef2" stroke-width="1.7"/><path d="M230.1 762.8V791.15" stroke="#1db2d3" stroke-width="1.2"/><path d="M230.1 762.8V810.7769230769231" stroke="#00d23c" stroke-width="1.2"/><path d="M171.5 860.5H1413.5" stroke="#444" stroke-width="1"/><path d="M230 869.3H258.75" stroke="#1db2d3" stroke-width="2.2"/><path d="M644 869.3H672" stroke="#00d23c" stroke-width="2.2"/><path d="M1057.5 869.3H1086" stroke="#ad6ef2" stroke-width="2.2"/></svg>
<div class="t" style="left:592px;top:507px;width:400px;text-align:center;font:bold 19.4px/24px 'Liberation Sans',sans-serif;letter-spacing:0;color:#b6b6b6">Spec_Sampled_Corr</div>
<div class="t" style="left:150px;top:528.0px;width:70px;text-align:right;font:12.5px/16px 'Liberation Sans',sans-serif;letter-spacing:0;color:#1db2d3;-webkit-text-stroke:0.3px #1db2d3">0</div>
<div class="t" style="left:150px;top:556.4px;width:70px;text-align:right;font:12.5px/16px 'Liberation Sans',sans-serif;letter-spacing:0;color:#1db2d3;-webkit-text-stroke:0.3px #1db2d3">-13</div>
<div class="t" style="left:150px;top:584.7px;width:70px;text-align:right;font:12.5px/16px 'Liberation Sans',sans-serif;letter-spacing:0;color:#1db2d3;-webkit-text-stroke:0.3px #1db2d3">-26</div>
<div class="t" style="left:150px;top:613.0px;width:70px;text-align:right;font:12.5px/16px 'Liberation Sans',sans-serif;letter-spacing:0;color:#1db2d3;-webkit-text-stroke:0.3px #1db2d3">-39</div>
<div class="t" style="left:150px;top:641.4px;width:70px;text-align:right;font:12.5px/16px 'Liberation Sans',sans-serif;letter-spacing:0;color:#1db2d3;-webkit-text-stroke:0.3px #1db2d3">-52</div>
<div class="t" style="left:150px;top:669.8px;width:70px;text-align:right;font:12.5px/16px 'Liberation Sans',sans-serif;letter-spacing:0;color:#1db2d3;-webkit-text-stroke:0.3px #1db2d3">-65</div>
<div class="t" style="left:150px;top:698.1px;width:70px;text-align:right;font:12.5px/16px 'Liberation Sans',sans-serif;letter-spacing:0;color:#1db2d3;-webkit-text-stroke:0.3px #1db2d3">-78</div>
<div class="t" style="left:150px;top:726.5px;width:70px;text-align:right;font:12.5px/16px 'Liberation Sans',sans-serif;letter-spacing:0;color:#1db2d3;-webkit-text-stroke:0.3px #1db2d3">-91</div>
<div class="t" style="left:150px;top:754.8px;width:70px;text-align:right;font:12.5px/16px 'Liberation Sans',sans-serif;letter-spacing:0;color:#1db2d3;-webkit-text-stroke:0.3px #1db2d3">-104</div>
<div class="t" style="left:150px;top:783.1px;width:70px;text-align:right;font:12.5px/16px 'Liberation Sans',sans-serif;letter-spacing:0;color:#1db2d3;-webkit-text-stroke:0.3px #1db2d3">-117</div>
<div class="t" style="left:150px;top:811.5px;width:70px;text-align:right;font:12.5px/16px 'Liberation Sans',sans-serif;letter-spacing:0;color:#1db2d3;-webkit-text-stroke:0.3px #1db2d3">-130</div>
<div class="t" style="left:199.5px;top:826.4px;width:60px;text-align:center;font:12.5px/16px 'Liberation Sans',sans-serif;letter-spacing:0;color:#b9b9b9;-webkit-text-stroke:0.3px #b9b9b9">0</div>
<div class="t" style="left:316.7px;top:826.4px;width:60px;text-align:center;font:12.5px/16px 'Liberation Sans',sans-serif;letter-spacing:0;color:#b9b9b9;-webkit-text-stroke:0.3px #b9b9b9">8</div>
<div class="t" style="left:433.9px;top:826.4px;width:60px;text-align:center;font:12.5px/16px 'Liberation Sans',sans-serif;letter-spacing:0;color:#b9b9b9;-webkit-text-stroke:0.3px #b9b9b9">16</div>
<div class="t" style="left:551.1px;top:826.4px;width:60px;text-align:center;font:12.5px/16px 'Liberation Sans',sans-serif;letter-spacing:0;color:#b9b9b9;-webkit-text-stroke:0.3px #b9b9b9">24</div>
<div class="t" style="left:668.3px;top:826.4px;width:60px;text-align:center;font:12.5px/16px 'Liberation Sans',sans-serif;letter-spacing:0;color:#b9b9b9;-webkit-text-stroke:0.3px #b9b9b9">32</div>
<div class="t" style="left:785.5px;top:826.4px;width:60px;text-align:center;font:12.5px/16px 'Liberation Sans',sans-serif;letter-spacing:0;color:#b9b9b9;-webkit-text-stroke:0.3px #b9b9b9">40</div>
<div class="t" style="left:902.7px;top:826.4px;width:60px;text-align:center;font:12.5px/16px 'Liberation Sans',sans-serif;letter-spacing:0;color:#b9b9b9;-webkit-text-stroke:0.3px #b9b9b9">48</div>
<div class="t" style="left:1019.9px;top:826.4px;width:60px;text-align:center;font:12.5px/16px 'Liberation Sans',sans-serif;letter-spacing:0;color:#b9b9b9;-webkit-text-stroke:0.3px #b9b9b9">56</div>
<div class="t" style="left:1137.1px;top:826.4px;width:60px;text-align:center;font:12.5px/16px 'Liberation Sans',sans-serif;letter-spacing:0;color:#b9b9b9;-webkit-text-stroke:0.3px #b9b9b9">64</div>
<div class="t" style="left:1254.3px;top:826.4px;width:60px;text-align:center;font:12.5px/16px 'Liberation Sans',sans-serif;letter-spacing:0;color:#b9b9b9;-webkit-text-stroke:0.3px #b9b9b9">72</div>
<div class="t" style="left:1371.5px;top:826.4px;width:60px;text-align:center;font:12.5px/16px 'Liberation Sans',sans-serif;letter-spacing:0;color:#b9b9b9;-webkit-text-stroke:0.3px #b9b9b9">80</div>
<div class="t" style="left:692px;top:843.5px;width:200px;text-align:center;font:12.6px/16px 'Liberation Sans',sans-serif;letter-spacing:0;color:#c4c4c4;-webkit-text-stroke:0.3px #c4c4c4">Frequency (MHz)</div>
<div class="t" style="left:265px;top:861.5px;font:12.65px/16px 'Liberation Sans',sans-serif;letter-spacing:0;color:#1db2d3;-webkit-text-stroke:0.3px #1db2d3">20*log10( abs(Spec_Sampled_Correlated))</div>
<div class="t" style="left:678px;top:861.5px;font:12.65px/16px 'Liberation Sans',sans-serif;letter-spacing:0;color:#00d23c;-webkit-text-stroke:0.3px #00d23c">20*log10( abs(Spec_Sampled_Uncorrelated))</div>
<div class="t" style="left:1092.5px;top:861.5px;font:12.65px/16px 'Liberation Sans',sans-serif;letter-spacing:0;color:#ad6ef2;-webkit-text-stroke:0.3px #ad6ef2">20*log10( abs(Spec_Sampled_Corr_Uncorr))</div>
<div class="a" style="left:171.5px;top:503px;width:40px;height:355px;overflow:hidden"><div class="t" style="left:12px;top:180px;width:0;height:0"><div style="position:absolute;left:0;top:0;transform:translate(-50%,-50%) rotate(-90deg);white-space:nowrap;font:12.6px/16px 'Liberation Sans',sans-serif;letter-spacing:0;color:#1db2d3;-webkit-text-stroke:0.3px #1db2d3">20*log10( abs(Spec_Sampled_Correlated)), 20*log10( abs(Spec_Sampled_Uncorrelated)), 20*log10( abs(Spec_Sampled_Corr_Uncorr))</div></div></div>
</body></html>
